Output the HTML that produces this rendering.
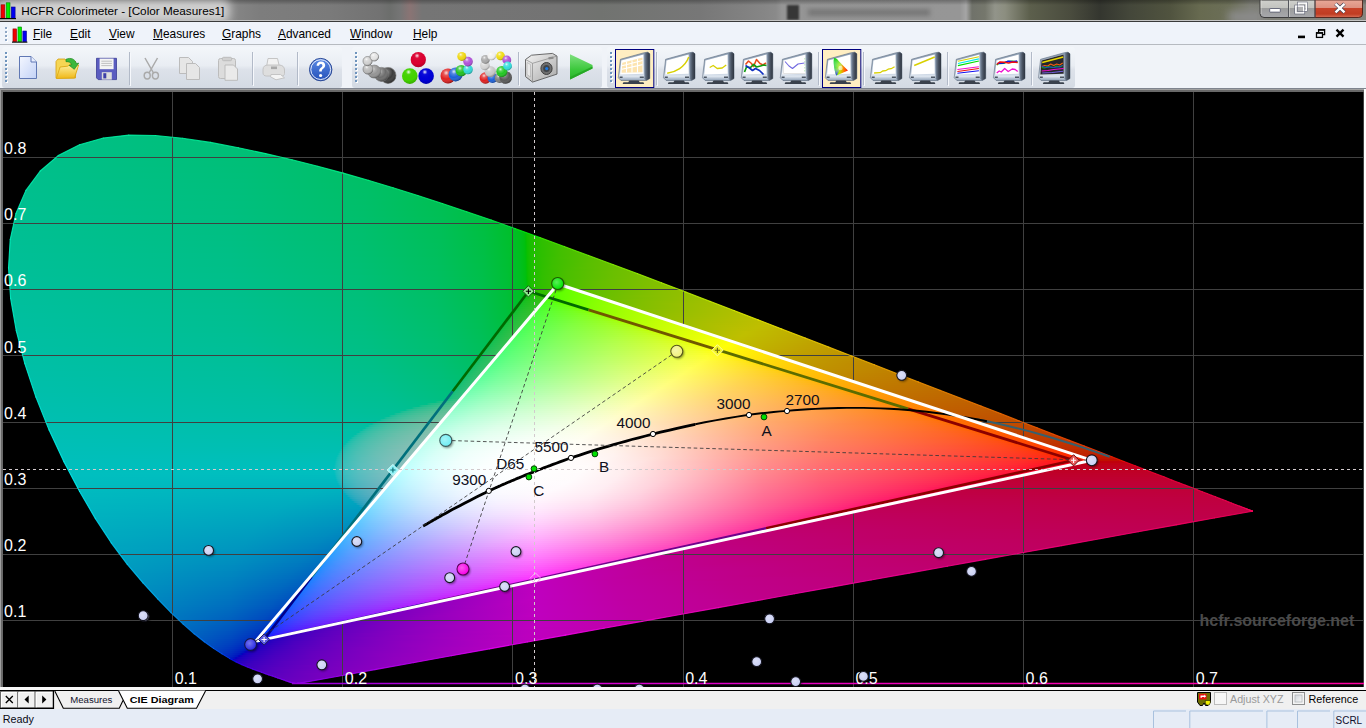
<!DOCTYPE html>
<html><head><meta charset="utf-8"><title>HCFR Colorimeter - [Color Measures1]</title>
<style>
html,body{margin:0;padding:0}
body{width:1366px;height:728px;overflow:hidden;position:relative;background:#f0f0f0;font-family:"Liberation Sans",sans-serif;font-size:12px;color:#000}
div,span,i,b,svg{position:absolute;display:block}
#title{left:0;top:0;width:1366px;height:20px;overflow:hidden;background:linear-gradient(90deg,#8c8c8c 0,#888 225px,#7d7d7d 260px,#7a7a7a 330px,#727272 380px,#6c6e6c 390px,#757575 400px,#8a7474 410px,#757575 422px,#737373 560px,#717370 600px,#777 700px,#868686 765px,#8a8a8a 776px,#959595 782px,#969696 960px,#a5a5a5 966px,#70726a 972px,#75776c 985px,#92948a 995px,#8c8e80 1005px,#5c5f4c 1030px,#4a4c3e 1070px,#34362f 1100px,#44473a 1130px,#50533f 1170px,#676a50 1200px,#6c6f58 1230px,#7c7d74 1250px,#85857f 1366px)}
#title .sh{left:0;top:0;width:1366px;height:20px;background:linear-gradient(180deg,rgba(0,0,0,.28) 0,rgba(0,0,0,.12) 3px,rgba(0,0,0,0) 5px,rgba(0,0,0,0) 100%)}
#title .gl{left:6px;top:9px;width:214px;height:4px;background:rgba(255,255,255,.6);box-shadow:0 0 10px 10px rgba(255,255,255,.6);border-radius:4px}
#title .fv{left:787px;top:5px;width:12px;height:15px;background:#363636;filter:blur(1.2px)}
#title .bt{left:808px;top:9px;width:122px;height:7px;background:#787878;filter:blur(2px)}
#title .gb{left:1228px;top:11px;width:36px;height:12px;background:#8c8c8c;filter:blur(4px)}
#tline{left:0;top:20px;width:1366px;height:1px;background:#c4c4c4}
#tline2{left:0;top:21px;width:1366px;height:1px;background:#3a3a3a}
#ttext{left:21.3px;top:4.2px;font-size:11.75px;white-space:nowrap;color:#000}
#menu{left:0;top:22px;width:1366px;height:22px;background:#eff3fa}
#menu span{top:5.2px;font-size:11.9px;white-space:nowrap}
#menu u{text-decoration:underline}
#mline{left:0;top:44px;width:1366px;height:1px;background:#b6bac0}
#tbbg{left:0;top:45px;width:1366px;height:44px;background:#f0f3f8}
.band{top:47px;height:41px;border-radius:3px;background:linear-gradient(180deg,#f3f6fa 0,#e9edf3 45%,#dde2ea 55%,#d4dae3 100%)}
#b1{left:1.5px;width:340.5px}
#b2{left:351.5px;width:250.3px}
#b3{left:607.3px;width:468.2px}
#sep88{left:0;top:88px;width:1366px;height:1px;background:#7f848e}
#mdi{left:0;top:89px;width:1366px;height:599px;background:linear-gradient(90deg,#a0a0a0 0,#a0a0a0 1364px,#fff 1364px)}
#mdi2{left:1px;top:90px;width:1363px;height:597px;background:#696969}
#chart{left:3px;top:92px;width:1361px;height:595px;background:#000;overflow:hidden}
.layer{left:-1px;top:-1px;width:1362px;height:596px}
.layer i{height:2px}
#dark{clip-path:polygon(296.6px 592.4px,296.5px 592.4px,296.5px 592.3px,296.4px 592.4px,296.2px 592.4px,296.1px 592.4px,295.9px 592.4px,295.8px 592.4px,295.6px 592.4px,295.4px 592.4px,295.3px 592.5px,295.1px 592.5px,294.9px 592.5px,294.6px 592.5px,294.3px 592.5px,294px 592.5px,293.7px 592.5px,293.3px 592.5px,293px 592.4px,292.6px 592.4px,292px 592.3px,291.3px 592.1px,290.5px 591.9px,289.7px 591.7px,288.8px 591.4px,287.7px 591.1px,286.5px 590.7px,285.1px 590.2px,283.6px 589.7px,281.9px 589.1px,280.1px 588.5px,278.1px 587.7px,275.7px 587px,273.1px 586.1px,270.2px 585px,266.9px 583.9px,263.3px 582.7px,259.4px 581.3px,255.1px 579.8px,250.4px 578px,245.3px 576px,239.9px 573.7px,234.1px 570.9px,227.5px 567.4px,220px 562.9px,211.5px 557.4px,202.3px 550.8px,192.2px 542.8px,181.2px 533.1px,169px 521.6px,155.7px 507.9px,141px 491.9px,125.3px 473.3px,109.2px 451.8px,93.4px 427.6px,77.6px 400.5px,61.9px 370.8px,47.1px 339.1px,33.9px 306.1px,22.8px 272.7px,14.2px 239.5px,8.6px 207.3px,6.5px 176.9px,8.2px 148.6px,13.9px 122.5px,23.9px 99.4px,38.2px 80px,56.2px 64.6px,77.5px 53.7px,101.3px 47px,126.8px 44.1px,153.4px 44.5px,180.7px 47.2px,208.5px 51.4px,236.4px 56.7px,263.6px 62.6px,290px 68.8px,315.8px 75.3px,341.2px 82.1px,366.2px 89.3px,391.1px 96.7px,415.8px 104.5px,440.3px 112.5px,464.8px 120.7px,489.2px 129.1px,513.6px 137.7px,537.9px 146.5px,562.2px 155.4px,586.6px 164.4px,610.9px 173.5px,635.2px 182.6px,659.5px 191.8px,683.8px 201px,707.9px 210.3px,732px 219.5px,756px 228.7px,779.8px 237.9px,803.3px 247px,826.7px 256.1px,849.7px 265px,872.4px 273.8px,894.7px 282.4px,916.6px 290.9px,938px 299.2px,958.8px 307.2px,979px 315px,998.6px 322.6px,1017.3px 329.9px,1035px 336.8px,1051.6px 343.2px,1067.3px 349.3px,1082.4px 355.1px,1096.7px 360.6px,1109.9px 365.7px,1122px 370.4px,1133.2px 374.7px,1143.6px 378.7px,1153.1px 382.4px,1161.9px 385.8px,1169.8px 388.9px,1177px 391.7px,1183.7px 394.2px,1189.7px 396.6px,1195.2px 398.7px,1200.3px 400.7px,1205px 402.5px,1209.4px 404.2px,1213.5px 405.8px,1217.2px 407.2px,1220.7px 408.6px,1223.9px 409.8px,1226.8px 411px,1229.5px 412px,1231.8px 412.9px,1233.9px 413.7px,1235.7px 414.4px,1237.4px 415.1px,1238.9px 415.6px,1240.3px 416.2px,1241.5px 416.6px,1242.5px 417px,1243.4px 417.4px,1244.1px 417.6px,1244.7px 417.9px,1245.4px 418.1px,1245.9px 418.4px,1246.5px 418.6px,1246.9px 418.8px,1247.4px 418.9px,1247.9px 419.1px,1248.4px 419.3px,1248.8px 419.5px,1249.2px 419.7px,1249.6px 419.8px,1249.8px 419.9px,1250px 420px,1250.2px 420px,1250.3px 420.1px,1250.4px 420.1px,1250.5px 420.1px,1250.5px 420.2px)}
#bright{clip-path:polygon(1090px 369.3px,556px 193px,253.5px 550.4px)}
#tabs{left:0;top:687px;width:1366px;height:22px;background:#f0f0f0}
#status{left:0;top:709px;width:1366px;height:19px;background:#e9eef7}
</style></head><body>
<div id="title"><div class="sh"></div><div class="gl"></div><div class="fv"></div><div class="bt"></div><div class="gb"></div><span id="ttext">HCFR Colorimeter - [Color Measures1]</span></div>
<div id="tline"></div><div id="tline2"></div>
<div id="menu">
<span style="left:33px"><u>F</u>ile</span><span style="left:70px"><u>E</u>dit</span><span style="left:109px"><u>V</u>iew</span><span style="left:153px"><u>M</u>easures</span><span style="left:222px"><u>G</u>raphs</span><span style="left:278px"><u>A</u>dvanced</span><span style="left:350px"><u>W</u>indow</span><span style="left:413px"><u>H</u>elp</span>
</div>
<div id="mline"></div>
<div id="tbbg"></div>
<div class="band" id="b1"></div><div class="band" id="b2"></div><div class="band" id="b3"></div>
<svg style="left:0;top:0" width="1366" height="92" viewBox="0 0 1366 92">
<defs>
<linearGradient id="mg" x1="0" y1="0" x2="0" y2="1"><stop offset="0" stop-color="#8a9bb0"/><stop offset=".7" stop-color="#b9c7d8"/><stop offset=".85" stop-color="#dfe7f0"/><stop offset="1" stop-color="#8fa0b6"/></linearGradient>
<linearGradient id="ms" x1="0" y1="0" x2="1" y2="0"><stop offset="0" stop-color="#7d8da2"/><stop offset=".5" stop-color="#4a5463"/><stop offset="1" stop-color="#2e3540"/></linearGradient>
<radialGradient id="sp" cx="38%" cy="30%" r="70%"><stop offset="0" stop-color="#fff" stop-opacity=".85"/><stop offset=".25" stop-color="#fff" stop-opacity=".25"/><stop offset=".6" stop-color="#fff" stop-opacity="0"/><stop offset="1" stop-color="#000" stop-opacity=".3"/></radialGradient>
<radialGradient id="sp2" cx="42%" cy="24%" r="75%"><stop offset="0" stop-color="#fff" stop-opacity=".95"/><stop offset=".1" stop-color="#fff" stop-opacity=".5"/><stop offset=".22" stop-color="#fff" stop-opacity=".05"/><stop offset=".7" stop-color="#000" stop-opacity="0"/><stop offset="1" stop-color="#000" stop-opacity=".18"/></radialGradient>
<linearGradient id="doc" x1="0" y1="0" x2="1" y2="1"><stop offset="0" stop-color="#f4f7ff"/><stop offset="1" stop-color="#c3d2f6"/></linearGradient>
<linearGradient id="fold" x1="0" y1="0" x2="0" y2="1"><stop offset="0" stop-color="#fdf0a0"/><stop offset="1" stop-color="#f0b818"/></linearGradient>
<linearGradient id="hb" x1="0" y1="0" x2="0" y2="1"><stop offset="0" stop-color="#5a8ae6"/><stop offset="1" stop-color="#2450b8"/></linearGradient>
<linearGradient id="pl" x1="0" y1="0" x2="0" y2="1"><stop offset="0" stop-color="#7fe07f"/><stop offset=".6" stop-color="#3cc83c"/><stop offset="1" stop-color="#28b428"/></linearGradient>
<linearGradient id="cam" x1="0" y1="0" x2="1" y2="1"><stop offset="0" stop-color="#f4f4f4"/><stop offset="1" stop-color="#a8a8a8"/></linearGradient>
<symbol id="mon" viewBox="0 0 32 32" overflow="visible">
<path d="M2.4 7.3L26.2.7l3.6-.5 2 1.6v24.8l-3.4 1.9H3L.3 25.8z" fill="url(#mg)" stroke="#5d6b7e" stroke-width=".6"/>
<path d="M26.3.9l3.5-.7 2 1.6v24.8l-3.4 1.9-2.1-1.6z" fill="url(#ms)"/>
<path d="M3.3 8.6L25.5 2.6v19.2L2.1 22.4z" fill="#fff"/>
<path d="M1.6 24.4h3v1.5h-3zM21.8 24.4h4v1.5h-4z" fill="#4c5663"/>
<path d="M11.4 28.4h9.2l1.2 1.9h3.6l.8 1.6H4.6l.8-1.6h4.8z" fill="#3a414c"/>
</symbol>
</defs>
<rect x="6" y="53" width="2" height="2" fill="#fff"/><rect x="5" y="52" width="2" height="2" fill="#6f94bd"/>
<rect x="6" y="57" width="2" height="2" fill="#fff"/><rect x="5" y="56" width="2" height="2" fill="#6f94bd"/>
<rect x="6" y="61" width="2" height="2" fill="#fff"/><rect x="5" y="60" width="2" height="2" fill="#6f94bd"/>
<rect x="6" y="65" width="2" height="2" fill="#fff"/><rect x="5" y="64" width="2" height="2" fill="#6f94bd"/>
<rect x="6" y="69" width="2" height="2" fill="#fff"/><rect x="5" y="68" width="2" height="2" fill="#6f94bd"/>
<rect x="6" y="73" width="2" height="2" fill="#fff"/><rect x="5" y="72" width="2" height="2" fill="#6f94bd"/>
<rect x="6" y="77" width="2" height="2" fill="#fff"/><rect x="5" y="76" width="2" height="2" fill="#6f94bd"/>
<rect x="6" y="81" width="2" height="2" fill="#fff"/><rect x="5" y="80" width="2" height="2" fill="#6f94bd"/>
<rect x="356" y="53" width="2" height="2" fill="#fff"/><rect x="355" y="52" width="2" height="2" fill="#6f94bd"/>
<rect x="356" y="57" width="2" height="2" fill="#fff"/><rect x="355" y="56" width="2" height="2" fill="#6f94bd"/>
<rect x="356" y="61" width="2" height="2" fill="#fff"/><rect x="355" y="60" width="2" height="2" fill="#6f94bd"/>
<rect x="356" y="65" width="2" height="2" fill="#fff"/><rect x="355" y="64" width="2" height="2" fill="#6f94bd"/>
<rect x="356" y="69" width="2" height="2" fill="#fff"/><rect x="355" y="68" width="2" height="2" fill="#6f94bd"/>
<rect x="356" y="73" width="2" height="2" fill="#fff"/><rect x="355" y="72" width="2" height="2" fill="#6f94bd"/>
<rect x="356" y="77" width="2" height="2" fill="#fff"/><rect x="355" y="76" width="2" height="2" fill="#6f94bd"/>
<rect x="356" y="81" width="2" height="2" fill="#fff"/><rect x="355" y="80" width="2" height="2" fill="#6f94bd"/>
<rect x="611" y="53" width="2" height="2" fill="#fff"/><rect x="610" y="52" width="2" height="2" fill="#6f94bd"/>
<rect x="611" y="57" width="2" height="2" fill="#fff"/><rect x="610" y="56" width="2" height="2" fill="#6f94bd"/>
<rect x="611" y="61" width="2" height="2" fill="#fff"/><rect x="610" y="60" width="2" height="2" fill="#6f94bd"/>
<rect x="611" y="65" width="2" height="2" fill="#fff"/><rect x="610" y="64" width="2" height="2" fill="#6f94bd"/>
<rect x="611" y="69" width="2" height="2" fill="#fff"/><rect x="610" y="68" width="2" height="2" fill="#6f94bd"/>
<rect x="611" y="73" width="2" height="2" fill="#fff"/><rect x="610" y="72" width="2" height="2" fill="#6f94bd"/>
<rect x="611" y="77" width="2" height="2" fill="#fff"/><rect x="610" y="76" width="2" height="2" fill="#6f94bd"/>
<rect x="611" y="81" width="2" height="2" fill="#fff"/><rect x="610" y="80" width="2" height="2" fill="#6f94bd"/>
<path d="M129.5 52V85" stroke="#b2bac8" stroke-width="1"/><path d="M130.5 53V86" stroke="#f6f8fc" stroke-width="1"/>
<path d="M252.5 52V85" stroke="#b2bac8" stroke-width="1"/><path d="M253.5 53V86" stroke="#f6f8fc" stroke-width="1"/>
<path d="M297.5 52V85" stroke="#b2bac8" stroke-width="1"/><path d="M298.5 53V86" stroke="#f6f8fc" stroke-width="1"/>
<path d="M518.5 52V85" stroke="#b2bac8" stroke-width="1"/><path d="M519.5 53V86" stroke="#f6f8fc" stroke-width="1"/>
<path d="M656.5 52V85" stroke="#b2bac8" stroke-width="1"/><path d="M657.5 53V86" stroke="#f6f8fc" stroke-width="1"/>
<path d="M818.5 52V85" stroke="#b2bac8" stroke-width="1"/><path d="M819.5 53V86" stroke="#f6f8fc" stroke-width="1"/>
<path d="M863.5 52V85" stroke="#b2bac8" stroke-width="1"/><path d="M864.5 53V86" stroke="#f6f8fc" stroke-width="1"/>
<path d="M947.5 52V85" stroke="#b2bac8" stroke-width="1"/><path d="M948.5 53V86" stroke="#f6f8fc" stroke-width="1"/>
<path d="M1031.5 52V85" stroke="#b2bac8" stroke-width="1"/><path d="M1032.5 53V86" stroke="#f6f8fc" stroke-width="1"/>
<path d="M19.5 56.5h11.5l5.5 5.5v16.5h-17z" fill="url(#doc)" stroke="#6078b4" stroke-width="1"/><path d="M31 56.5v5.5h5.5" fill="#e8eeff" stroke="#6078b4" stroke-width="1"/>
<path d="M56 61.5l2-2.5h7l2 2.5h8.5v16.5H56z" fill="#f6d654" stroke="#d6a010" stroke-width=".8"/>
<path d="M56.3 78.5l3.8-11.5 7.5-.8 2.4-1.6 8.6.4-4.1 13z" fill="url(#fold)" stroke="#dca814" stroke-width=".9"/>
<path d="M66 59.3c5-2.2 9.2 0 10.4 4.3l2.3-.5-4.4 6.2-5.2-4 2.6-.6c-.8-2.4-3-3.3-5.7-3z" fill="#3cb83c" stroke="#1f8a1f" stroke-width=".7"/>
<path d="M96.5 58.3h20v21.3h-18.3l-1.7-1.7z" fill="#5a5cc0" stroke="#3a3c96" stroke-width=".8"/>
<rect x="99.6" y="58.6" width="14" height="10.6" fill="#f4f4f4"/><path d="M101.3 61.2h10.6M101.3 63.4h10.6M101.3 65.6h10.6" stroke="#b4b4b4" stroke-width=".8"/>
<rect x="101.8" y="72.2" width="10" height="7.4" fill="#dcdcdc"/><rect x="103.3" y="73.2" width="3" height="5.2" fill="#3c3ea8"/>
<g fill="none" stroke="#aaa" stroke-width="1.5"><path d="M145 58l8.5 15M157.5 58l-8.5 15"/><ellipse cx="147.2" cy="75.6" rx="3" ry="3.4"/><ellipse cx="155.4" cy="75.6" rx="3" ry="3.4"/></g>
<g fill="#e6e6e6" stroke="#bcbcbc" stroke-width="1"><path d="M179.5 57.5h9l4 4v12h-13z"/><path d="M186.5 63.5h9l4 4v12h-13z"/></g>
<g stroke="#bcbcbc" stroke-width="1"><rect x="218.5" y="58.5" width="17" height="20" rx="2" fill="#dcdcdc"/><rect x="222.5" y="57.3" width="9" height="3.4" rx="1" fill="#d0d0d0"/><path d="M225 65h8.5l4 4v11.3h-12.5z" fill="#eaeaea"/></g>
<g stroke="#c0c0c0" stroke-width=".9"><path d="M266.5 67l1.5-8.5h9.5l2 8.5z" fill="#f2f2f2"/><path d="M263 69.5c0-3 2-4.5 5-4.5h11c3.5 0 5.5 2 5.5 5v3.500c0 1.5-1 2.5-3 2.500h-15c-2 0-3.5-1-3.5-3z" fill="#dedede"/><path d="M271 74.500h9.500l4 3.3-8.5 2-5.5-3z" fill="#f4f4f4"/><rect x="271" y="66.5" width="6" height="2.6" fill="#a8a8a8" stroke="none"/></g>
<circle cx="320.7" cy="69.6" r="11.2" fill="url(#hb)" stroke="#2c4a96" stroke-width="1"/><circle cx="320.7" cy="69.6" r="9.9" fill="none" stroke="#e8eefc" stroke-width="1"/>
<path d="M316.6 65.8c0-2.6 1.8-4.2 4.3-4.2 2.6 0 4.3 1.5 4.3 3.7 0 2-1.2 2.8-2.3 3.7-.900.7-1.1 1.2-1.1 2.600h-2.600c0-2 .4-2.9 1.6-3.9 1-.8 1.6-1.3 1.6-2.3 0-.9-.6-1.5-1.6-1.500s-1.7.7-1.7 1.900z" fill="#fff"/><circle cx="320.6" cy="75.5" r="1.6" fill="#fff"/>
<circle cx="388" cy="75.4" r="8" fill="#3c3c3c" stroke="#7c7c7c" stroke-width=".7"/><circle cx="388" cy="75.4" r="8" fill="url(#sp)"/>
<circle cx="381.4" cy="74.4" r="7" fill="#6c6c6c" stroke="#7c7c7c" stroke-width=".7"/><circle cx="381.4" cy="74.4" r="7" fill="url(#sp)"/>
<circle cx="374.3" cy="71.6" r="6.5" fill="#949494" stroke="#7c7c7c" stroke-width=".7"/><circle cx="374.3" cy="71.6" r="6.5" fill="url(#sp)"/>
<circle cx="368" cy="69.2" r="5" fill="#b8b8b8" stroke="#7c7c7c" stroke-width=".7"/><circle cx="368" cy="69.2" r="5" fill="url(#sp)"/>
<circle cx="367.6" cy="61.1" r="4.6" fill="#d0d0d0" stroke="#7c7c7c" stroke-width=".7"/><circle cx="367.6" cy="61.1" r="4.6" fill="url(#sp)"/>
<circle cx="374.3" cy="56.8" r="4.3" fill="#e4e4e4" stroke="#7c7c7c" stroke-width=".7"/><circle cx="374.3" cy="56.8" r="4.3" fill="url(#sp)"/>
<circle cx="418.3" cy="59.7" r="7.6" fill="#dc0030"/><circle cx="418.3" cy="59.7" r="7.6" fill="url(#sp2)"/>
<circle cx="409.8" cy="76.1" r="7.8" fill="#44d400"/><circle cx="409.8" cy="76.1" r="7.8" fill="url(#sp2)"/>
<circle cx="426.1" cy="76.1" r="7.8" fill="#0000d8"/><circle cx="426.1" cy="76.1" r="7.8" fill="url(#sp2)"/>
<circle cx="448" cy="75.9" r="7.5" fill="#e02020"/><circle cx="448" cy="75.9" r="7.5" fill="url(#sp)"/>
<circle cx="455.6" cy="74.4" r="7" fill="#1c60d8"/><circle cx="455.6" cy="74.4" r="7" fill="url(#sp)"/>
<circle cx="461.3" cy="70.6" r="5.7" fill="#20c020"/><circle cx="461.3" cy="70.6" r="5.7" fill="url(#sp)"/>
<circle cx="468" cy="69.5" r="4.8" fill="#30d8d8"/><circle cx="468" cy="69.5" r="4.8" fill="url(#sp)"/>
<circle cx="468" cy="61.6" r="4.8" fill="#b050d8"/><circle cx="468" cy="61.6" r="4.8" fill="url(#sp)"/>
<circle cx="461.8" cy="56.4" r="4.5" fill="#f0d810"/><circle cx="461.8" cy="56.4" r="4.5" fill="url(#sp)"/>
<circle cx="485.4" cy="78" r="5.8" fill="#e02020"/><circle cx="485.4" cy="78" r="5.8" fill="url(#sp)"/>
<circle cx="492.5" cy="78" r="5" fill="#1c60d8"/><circle cx="492.5" cy="78" r="5" fill="url(#sp)"/>
<circle cx="499.6" cy="78" r="5" fill="#808080"/><circle cx="499.6" cy="78" r="5" fill="url(#sp)"/>
<circle cx="505.7" cy="77.5" r="6.3" fill="#585858"/><circle cx="505.7" cy="77.5" r="6.3" fill="url(#sp)"/>
<circle cx="490.3" cy="71.5" r="5.5" fill="#c8c8c8"/><circle cx="490.3" cy="71.5" r="5.5" fill="url(#sp)"/>
<circle cx="501.8" cy="71.5" r="5.5" fill="#20c820"/><circle cx="501.8" cy="71.5" r="5.5" fill="url(#sp)"/>
<circle cx="484.8" cy="65.4" r="4.8" fill="#d4d4d4"/><circle cx="484.8" cy="65.4" r="4.8" fill="url(#sp)"/>
<circle cx="485.4" cy="59.4" r="4.4" fill="#a8a8a8"/><circle cx="485.4" cy="59.4" r="4.4" fill="url(#sp)"/>
<circle cx="491.7" cy="55.9" r="4.3" fill="#f0f0f0"/><circle cx="491.7" cy="55.9" r="4.3" fill="url(#sp)"/>
<circle cx="500.5" cy="55.9" r="4.3" fill="#f0dc10"/><circle cx="500.5" cy="55.9" r="4.3" fill="url(#sp)"/>
<circle cx="506.8" cy="59.9" r="4.4" fill="#b050d8"/><circle cx="506.8" cy="59.9" r="4.4" fill="url(#sp)"/>
<circle cx="507.6" cy="66" r="4.4" fill="#30dcdc"/><circle cx="507.6" cy="66" r="4.4" fill="url(#sp)"/>
<path d="M525.5 59.500l6-4.3 21-1.8 4.5 2.700v18l-24.5 8-7-5.500z" fill="url(#cam)" stroke="#5a5a5a" stroke-width=".9"/>
<path d="M525.5 59.500l7 3.8 24.5-7.200M532.5 63.300v18.8" fill="none" stroke="#8a8a8a" stroke-width=".7"/>
<path d="M527 62.500l3.5 2v12.500l-3.5-2.500z" fill="#e8e8e8" stroke="#a0a0a0" stroke-width=".5"/>
<ellipse cx="546.5" cy="68.5" rx="5.6" ry="6" fill="#6e6e6e" stroke="#3c3c3c" stroke-width="1"/><ellipse cx="546.5" cy="68.5" rx="3.3" ry="3.6" fill="#404448"/><circle cx="546.7" cy="68.6" r="1.6" fill="#1c78e0"/>
<rect x="548.5" y="56.8" width="5" height="2.3" fill="#8c8c8c" transform="rotate(-8 551 58)"/>
<path d="M570 54.300l22.5 10.700v3.600l-22.5 11z" fill="url(#pl)"/><path d="M570 77l22.5-10.600v2.200l-22.5 11z" fill="#26a826"/>
<rect x="615.5" y="49.5" width="38.3" height="38" fill="#ffeec2" stroke="#000080" stroke-width="1"/>
<rect x="822.5" y="49.5" width="38.3" height="38" fill="#ffeec2" stroke="#000080" stroke-width="1"/>
<use href="#mon" x="618" y="52" width="32" height="32"/>
<use href="#mon" x="663.2" y="52" width="32" height="32"/>
<use href="#mon" x="702.2" y="52" width="32" height="32"/>
<use href="#mon" x="741" y="52" width="32" height="32"/>
<use href="#mon" x="780" y="52" width="32" height="32"/>
<use href="#mon" x="825" y="52" width="32" height="32"/>
<use href="#mon" x="870.1" y="52" width="32" height="32"/>
<use href="#mon" x="909.2" y="52" width="32" height="32"/>
<use href="#mon" x="953.9" y="52" width="32" height="32"/>
<use href="#mon" x="993.2" y="52" width="32" height="32"/>
<use href="#mon" x="1038.2" y="52" width="32" height="32"/>
<g transform="translate(618 52)" fill="none" stroke-linejoin="round"><path d="M4.3 10.800L24.5 5.400v14.800L3.6 20.800z" fill="#fde4b0" stroke="none"/><path d="M4 13.700l20.5-5.200M3.9 17.200l20.6-4.600M8.5 9.600v11M14 8.200v12.400M19.5 6.700v13.7" stroke="#fff" stroke-width="1.1"/></g>
<g transform="translate(663.2 52)" fill="none" stroke-linejoin="round"><path d="M4 21.300c8-1.2 18-6 21.5-16.2" stroke="#d8d000" stroke-width="1.4"/></g>
<g transform="translate(702.2 52)" fill="none" stroke-linejoin="round"><path d="M7.5 15.500l3.5-2 4 3 5-.5 4-3" stroke="#d8d000" stroke-width="1.3"/></g>
<g transform="translate(741 52)" fill="none" stroke-linejoin="round"><path d="M4.5 12.500l3-3.5 3 2.5 2 3 3-7 3.5 4 3 1.5 3-2" stroke="#e84c1c" stroke-width="1.6"/><path d="M3.5 20l2-5 4 .5 3-3 3 2.5 4-1 3-1 3 .5" stroke="#109c10" stroke-width="1.7"/><path d="M4.5 13.500l4 2.5 3 2.5 3-2 4 2 4 4" stroke="#1030c0" stroke-width="1.7"/></g>
<g transform="translate(780 52)" fill="none" stroke-linejoin="round"><path d="M3.5 9v12.500h22" stroke="#dcdcdc" stroke-width=".8"/><path d="M24.8 6v15" stroke="#a8e0a8" stroke-width=".8" stroke-dasharray="1.5 1.5"/><path d="M5 9.500l4 4.5 3.5 2.5 5.5-4.5 6.5-1" stroke="#7068e0" stroke-width="1.1"/></g>
<g transform="translate(825 52)" fill="none" stroke-linejoin="round"><defs><linearGradient id="c1" x1="0" y1="0" x2="1" y2="0"><stop offset="0" stop-color="#00c830"/><stop offset=".4" stop-color="#c0f000"/><stop offset=".7" stop-color="#ff8000"/><stop offset="1" stop-color="#ff1010"/></linearGradient><linearGradient id="c2" x1="0" y1="0" x2="0" y2="1"><stop offset="0" stop-color="#00d000" stop-opacity=".9"/><stop offset=".55" stop-color="#fff" stop-opacity=".2"/><stop offset="1" stop-color="#1010ff"/></linearGradient></defs><path d="M9 6.500c1.5-.8 3 .4 4.5 2.500l9.5 9.5-11.5 5c-1.5-2-3.5-12-2.5-17z" fill="url(#c1)" stroke="none"/><path d="M9 6.500c1.5-.8 3 .4 4.5 2.500l4 4-6 10.500c-1.5-2-3.5-12-2.5-17z" fill="url(#c2)" stroke="none"/><circle cx="15.5" cy="16" r="2.2" fill="#fff" opacity=".6" stroke="none"/></g>
<g transform="translate(870.1 52)" fill="none" stroke-linejoin="round"><path d="M4 21l6-.3 2.5-1.7 3-.3 2.5-1.5 3-.5 3.5-2" stroke="#d8d000" stroke-width="1.3"/></g>
<g transform="translate(909.2 52)" fill="none" stroke-linejoin="round"><path d="M5 13.500l20.5-8.5" stroke="#d8d000" stroke-width="1.5"/></g>
<g transform="translate(953.9 52)" fill="none" stroke-linejoin="round"><g stroke-width="1.1"><path d="M4 9.300l21-4.6" stroke="#d8d000"/><path d="M4 11.500l21-4.6" stroke="#00e8e8"/><path d="M4 13.600l21-4.6" stroke="#00e000"/><path d="M3.5 17.500l21.5-2.8" stroke="#f010d0"/><path d="M3.5 19.500l21.5-3" stroke="#f01010"/><path d="M3.5 21.300l21.5-2.5" stroke="#1010f0"/></g></g>
<g transform="translate(993.2 52)" fill="none" stroke-linejoin="round"><path d="M3.5 13l2-1.5 5-.3 4-1.7 5-.3 5 .8" stroke="#00d000" stroke-width="1.5"/><path d="M4 11.500l6-.3 5-2 5 .5 4-.7" stroke="#1010f0" stroke-width="1.3"/><path d="M3.5 12.500l3-2.5 5 .3 4 .7 4-1 5 .5" stroke="#f01010" stroke-width="1.4"/><path d="M3.5 21l2.5-2 2 1 3.5-3.5 3.5 3 4-2.5 3 .5 2.5 2" stroke="#f010d0" stroke-width="1.3"/></g>
<g transform="translate(1038.2 52)" fill="none" stroke-linejoin="round"><path d="M3.3 8.600L25.5 2.600v19.200L2.1 22.400z" fill="#26262c" stroke="none"/><path d="M4 10.500l21-5.5" stroke="#e8d800" stroke-width="1.4"/><path d="M3.5 14.500l3-1 3 .5 3-2 3 1.5 3-1.5 3 1 3-2" stroke="#f06010" stroke-width="1.1"/><path d="M3.5 15.500l3 .5 3-1.5 3 .5 3 .5 3-1.5 3 1 3-1.5" stroke="#10b010" stroke-width="1.1"/><path d="M3.5 14l4 1.5 4-.5 4 .5 5-.5 4-1.5" stroke="#2040e0" stroke-width=".9"/><path d="M3.5 19l6-.5 6-1 10-1" stroke="#f010d0" stroke-width="1.2"/><path d="M4 21l10-.5 11-1.3" stroke="#7060e0" stroke-width="1.1"/></g>
<g transform="translate(0 0) scale(1)"><rect x="1" y="4.8" width="3.8" height="13.4" fill="#f00000" stroke="#900000" stroke-width=".6"/><rect x="6.2" y="2.8" width="3.8" height="15.4" fill="#00f000" stroke="#008000" stroke-width=".6"/><rect x="11.3" y="7" width="3.8" height="11.2" fill="#0000f0" stroke="#000090" stroke-width=".6"/><path d="M0 18.600h16" stroke="#000" stroke-width="1.1"/></g>
<g transform="translate(12 24.3) scale(0.96)"><rect x="1" y="4.8" width="3.8" height="13.4" fill="#f00000" stroke="#900000" stroke-width=".6"/><rect x="6.2" y="2.8" width="3.8" height="15.4" fill="#00f000" stroke="#008000" stroke-width=".6"/><rect x="11.3" y="7" width="3.8" height="11.2" fill="#0000f0" stroke="#000090" stroke-width=".6"/><path d="M0 18.600h16" stroke="#000" stroke-width="1.1"/></g>
<rect x="6" y="28" width="2" height="2" fill="#fff"/><rect x="5" y="27" width="2" height="2" fill="#8ea6c4"/>
<rect x="6" y="32" width="2" height="2" fill="#fff"/><rect x="5" y="31" width="2" height="2" fill="#8ea6c4"/>
<rect x="6" y="36" width="2" height="2" fill="#fff"/><rect x="5" y="35" width="2" height="2" fill="#8ea6c4"/>
<rect x="6" y="40" width="2" height="2" fill="#fff"/><rect x="5" y="39" width="2" height="2" fill="#8ea6c4"/>
<defs><linearGradient id="cb" x1="0" y1="0" x2="0" y2="1"><stop offset="0" stop-color="#cfd0cc"/><stop offset=".47" stop-color="#c2c3bf"/><stop offset=".48" stop-color="#9b9c9c"/><stop offset="1" stop-color="#a7a8ac"/></linearGradient>
<linearGradient id="cr" x1="0" y1="0" x2="0" y2="1"><stop offset="0" stop-color="#e8a898"/><stop offset=".47" stop-color="#dc9080"/><stop offset=".48" stop-color="#c8432a"/><stop offset=".8" stop-color="#c03c22"/><stop offset="1" stop-color="#d87058"/></linearGradient></defs>
<path d="M1260 0h102.500v13.500q0 4-4 4h-94.500q-4 0-4-4z" fill="url(#cb)" stroke="#3c3c3c" stroke-width="1"/>
<path d="M1315 0h47.500v13.500q0 4-4 4h-43.500z" fill="url(#cr)" stroke="#4a1c14" stroke-width=".8"/>
<path d="M1288.5 0v17.500M1315 0v17.5" stroke="#54565c" stroke-width="1"/><path d="M1289.5 0v17M1261.2 0v14" stroke="#e4e4e0" stroke-width=".7" opacity=".7"/>
<rect x="1269.7" y="8.5" width="10.6" height="3.6" rx=".5" fill="#fff" stroke="#50546a" stroke-width=".8"/>
<g fill="none" stroke="#fff" stroke-width="1.6"><rect x="1298.5" y="3" width="8" height="7.5"/><rect x="1295.8" y="6" width="8" height="7" fill="#b0b1b2"/></g><g fill="none" stroke="#50546a" stroke-width=".5"><rect x="1297.5" y="2" width="10" height="9.5"/><rect x="1294.8" y="5" width="10" height="9"/></g>
<path d="M1335.5 3.800l9 8.600M1344.5 3.800l-9 8.6" stroke="#3c3c50" stroke-width="3.6"/><path d="M1335.5 3.800l9 8.600M1344.5 3.800l-9 8.6" stroke="#fff" stroke-width="2.4"/>
<rect x="1298" y="35.6" width="7" height="2.6" fill="#000"/>
<g fill="none" stroke="#000" stroke-width="1.3"><path d="M1318.6 32.500v-2.800h6v5h-2.3" /><rect x="1316.5" y="32.8" width="6" height="4.6" fill="#eff3fa"/></g><path d="M1316 33h7M1318 29.900h7" stroke="#000" stroke-width="1.6"/>
<path d="M1336.5 29.600l7 7M1343.5 29.600l-7 7" stroke="#000" stroke-width="2.3"/>
</svg>
<div id="sep88"></div>
<div id="mdi"></div><div id="mdi2"></div>
<div id="chart">
<div class="layer" id="dark"><i style="top:42px;left:137px;width:6px;background:linear-gradient(90deg,#00bf80 -2px,#00bf7f 3px)"></i><i style="top:44px;left:111px;width:59px;background:linear-gradient(90deg,#00bf82 -2px,#00bf7d 56px)"></i><i style="top:46px;left:99px;width:85px;background:linear-gradient(90deg,#00bf83 -2px,#00bf7c 82px)"></i><i style="top:48px;left:87px;width:111px;background:linear-gradient(90deg,#00bf84 -2px,#00bf7b 108px)"></i><i style="top:50px;left:81px;width:131px;background:linear-gradient(90deg,#00bf85 -2px,#00bf79 128px)"></i><i style="top:52px;left:75px;width:151px;background:linear-gradient(90deg,#00bf86 -2px,#00bf78 148px)"></i><i style="top:54px;left:71px;width:164px;background:linear-gradient(90deg,#00bf86 -2px,#00bf77 161px)"></i><i style="top:56px;left:66px;width:179px;background:linear-gradient(90deg,#00bf87 -2px,#00bf76 176px)"></i><i style="top:58px;left:62px;width:192px;background:linear-gradient(90deg,#00bf87 -2px,#00bf75 189px)"></i><i style="top:60px;left:59px;width:204px;background:linear-gradient(90deg,#00bf88 -2px,#00bf74 201px)"></i><i style="top:62px;left:56px;width:215px;background:linear-gradient(90deg,#00bf88 -2px,#00bf75 203px,#00bf73 212px)"></i><i style="top:64px;left:53px;width:227px;background:linear-gradient(90deg,#00bf88 -2px,#00bf75 204px,#00bf72 224px)"></i><i style="top:66px;left:50px;width:239px;background:linear-gradient(90deg,#00bf89 -2px,#00bf76 205px,#00bf71 236px)"></i><i style="top:68px;left:47px;width:251px;background:linear-gradient(90deg,#00bf89 -2px,#00bf76 206px,#00bf70 248px)"></i><i style="top:70px;left:44px;width:262px;background:linear-gradient(90deg,#00bf8a -2px,#00bf77 207px,#00bf6f 259px)"></i><i style="top:72px;left:42px;width:270px;background:linear-gradient(90deg,#00bf8a -2px,#00bf77 208px,#00bf6e 267px)"></i><i style="top:74px;left:40px;width:279px;background:linear-gradient(90deg,#00bf8a -2px,#00bf77 209px,#00bf6d 276px)"></i><i style="top:76px;left:38px;width:290px;background:linear-gradient(90deg,#00bf8b -2px,#00bf78 210px,#00bf6c 287px)"></i><i style="top:78px;left:36px;width:299px;background:linear-gradient(90deg,#00bf8b -2px,#00bf78 210px,#00bf6b 296px)"></i><i style="top:80px;left:34px;width:308px;background:linear-gradient(90deg,#00bf8b -2px,#00bf78 211px,#00bf6a 305px)"></i><i style="top:82px;left:33px;width:316px;background:linear-gradient(90deg,#00bf8c -2px,#00bf79 212px,#00bf69 313px)"></i><i style="top:84px;left:31px;width:326px;background:linear-gradient(90deg,#00bf8c -2px,#00bf79 212px,#00bf68 323px)"></i><i style="top:86px;left:30px;width:333px;background:linear-gradient(90deg,#00bf8c -2px,#00bf79 213px,#00bf67 330px)"></i><i style="top:88px;left:28px;width:342px;background:linear-gradient(90deg,#00bf8d -2px,#00bf7a 214px,#00bf65 339px)"></i><i style="top:90px;left:27px;width:351px;background:linear-gradient(90deg,#00bf8d -2px,#00bf7a 214px,#00bf65 342px,#00bf64 348px)"></i><i style="top:92px;left:25px;width:360px;background:linear-gradient(90deg,#00bf8d -2px,#00bf7b 215px,#00bf66 343px,#00bf62 357px)"></i><i style="top:94px;left:24px;width:368px;background:linear-gradient(90deg,#00bf8d -2px,#00bf7b 215px,#00bf66 343px,#00bf61 365px)"></i><i style="top:96px;left:22px;width:376px;background:linear-gradient(90deg,#00bf8e -2px,#00bf7b 216px,#00bf66 345px,#00bf60 373px)"></i><i style="top:98px;left:21px;width:383px;background:linear-gradient(90deg,#00bf8e -2px,#00bf7c 216px,#00bf67 345px,#00bf5e 380px)"></i><i style="top:100px;left:20px;width:390px;background:linear-gradient(90deg,#00bf8e -2px,#00bf7c 217px,#00bf67 346px,#00bf5d 387px)"></i><i style="top:102px;left:19px;width:397px;background:linear-gradient(90deg,#00bf8f -2px,#00bf7c 217px,#00bf68 346px,#00bf5b 394px)"></i><i style="top:104px;left:18px;width:404px;background:linear-gradient(90deg,#00bf8f -2px,#00bf7d 218px,#00bf68 347px,#00bf5a 401px)"></i><i style="top:106px;left:17px;width:412px;background:linear-gradient(90deg,#00bf8f -2px,#00bf7d 218px,#00bf68 347px,#00bf58 409px)"></i><i style="top:108px;left:16px;width:419px;background:linear-gradient(90deg,#00bf8f -2px,#00bf7d 218px,#00bf69 348px,#00bf56 416px)"></i><i style="top:110px;left:16px;width:425px;background:linear-gradient(90deg,#00bf90 -2px,#00bf7e 218px,#00bf69 348px,#00bf54 422px)"></i><i style="top:112px;left:15px;width:432px;background:linear-gradient(90deg,#00bf90 -2px,#00bf7e 219px,#00bf69 349px,#00bf53 426px,#00bf52 429px)"></i><i style="top:114px;left:14px;width:439px;background:linear-gradient(90deg,#00bf90 -2px,#00bf7e 219px,#00bf6a 349px,#00bf53 427px,#00bf50 436px)"></i><i style="top:116px;left:13px;width:446px;background:linear-gradient(90deg,#00bf91 -2px,#00bf7e 220px,#00bf6a 350px,#00bf54 427px,#00bf4d 443px)"></i><i style="top:118px;left:12px;width:453px;background:linear-gradient(90deg,#00bf91 -2px,#00bf7f 220px,#00bf6a 350px,#00bf54 428px,#00bf4b 450px)"></i><i style="top:120px;left:11px;width:460px;background:linear-gradient(90deg,#00bf91 -2px,#00bf7f 220px,#00bf6b 350px,#00bf55 428px,#00bf48 457px)"></i><i style="top:122px;left:11px;width:467px;background:linear-gradient(90deg,#00bf91 -2px,#00bf7f 220px,#00bf6b 350px,#00bf55 428px,#00bf44 464px)"></i><i style="top:124px;left:10px;width:473px;background:linear-gradient(90deg,#00bf92 -2px,#00bf80 221px,#00bf6b 351px,#00bf55 429px,#00bf42 470px)"></i><i style="top:126px;left:10px;width:478px;background:linear-gradient(90deg,#00bf92 -2px,#00bf80 221px,#00bf6c 351px,#00bf56 429px,#00bf3f 474px,#00bf3f 475px)"></i><i style="top:128px;left:9px;width:484px;background:linear-gradient(90deg,#00bf92 -2px,#00bf80 221px,#00bf6c 352px,#00bf56 430px,#00bf40 475px,#00bf3b 481px)"></i><i style="top:130px;left:9px;width:490px;background:linear-gradient(90deg,#00bf92 -2px,#00bf81 221px,#00bf6c 351px,#00bf57 429px,#00bf40 474px,#00bf37 487px)"></i><i style="top:132px;left:8px;width:497px;background:linear-gradient(90deg,#00bf93 -2px,#00bf81 222px,#00bf6d 352px,#00bf57 430px,#00bf41 475px,#00bf32 494px)"></i><i style="top:134px;left:8px;width:503px;background:linear-gradient(90deg,#00bf93 -2px,#00bf81 222px,#00bf6d 352px,#00bf57 430px,#00bf41 475px,#00bf2c 499px,#00bf2b 500px)"></i><i style="top:136px;left:8px;width:509px;background:linear-gradient(90deg,#00bf93 -2px,#00bf82 222px,#00bf6d 352px,#00bf57 430px,#00bf41 475px,#00bf2d 499px,#00bf23 506px)"></i><i style="top:138px;left:7px;width:515px;background:linear-gradient(90deg,#00bf93 -2px,#00bf82 222px,#00bf6e 353px,#00bf58 431px,#00bf41 476px,#00bf2d 500px,#00bf1c 511px,#00bf1a 512px)"></i><i style="top:140px;left:7px;width:520px;background:linear-gradient(90deg,#00bf94 -2px,#00bf82 222px,#00bf6e 353px,#00bf58 431px,#00bf42 476px,#00bf2d 500px,#00bf1c 511px,#00bf10 515px,#00bf0b 516px,#07bf00 517px)"></i><i style="top:142px;left:7px;width:525px;background:linear-gradient(90deg,#00bf94 -2px,#00bf82 222px,#00bf6f 352px,#00bf59 430px,#00bf42 476px,#00bf2d 500px,#00bf1c 511px,#00bf11 515px,#00bf0c 516px,#06bf00 517px,#0ebf00 518px,#1bbf00 522px)"></i><i style="top:144px;left:6px;width:532px;background:linear-gradient(90deg,#00bf94 -2px,#00bf83 223px,#00bf6f 353px,#00bf59 431px,#00bf42 477px,#00bf2e 501px,#00bf1d 512px,#00bf11 516px,#00bf0c 517px,#05bf00 518px,#0ebf00 519px,#1bbf00 523px,#26bf00 529px)"></i><i style="top:146px;left:6px;width:538px;background:linear-gradient(90deg,#00bf94 -2px,#00bf83 223px,#00bf6f 353px,#00bf59 431px,#00bf43 477px,#00bf2e 501px,#00bf1d 512px,#00bf11 516px,#00bf0c 517px,#04bf00 518px,#0dbf00 519px,#1bbf00 523px,#2fbf00 535px)"></i><i style="top:148px;left:6px;width:545px;background:linear-gradient(90deg,#00bf95 -2px,#00bf83 223px,#00bf6f 353px,#00bf5a 431px,#00bf43 476px,#00bf2e 501px,#00bf1d 512px,#00bf12 516px,#00bf0d 517px,#03bf00 518px,#0dbf00 519px,#1bbf00 523px,#2ebf00 534px,#37bf00 542px)"></i><i style="top:150px;left:6px;width:550px;background:linear-gradient(90deg,#00bf95 -2px,#00bf84 223px,#00bf70 353px,#00bf5a 431px,#00bf44 476px,#00bf2e 501px,#00bf1d 512px,#00bf12 516px,#00bf0d 517px,#00bf02 518px,#0dbf00 519px,#1bbf00 523px,#2ebf00 534px,#3cbf00 547px)"></i><i style="top:152px;left:5px;width:556px;background:linear-gradient(90deg,#00bf95 -2px,#00bf84 223px,#00bf70 353px,#00bf5b 431px,#00bf44 477px,#00bf2e 502px,#00bf1d 513px,#00bf12 517px,#00bf0d 518px,#00bf04 519px,#0dbf00 520px,#1bbf00 524px,#2ebf00 535px,#41bf00 553px)"></i><i style="top:154px;left:5px;width:561px;background:linear-gradient(90deg,#00bf96 -2px,#00bf84 223px,#00bf71 353px,#00bf5b 431px,#00bf44 477px,#00bf2f 502px,#00bf1e 513px,#00bf12 517px,#00bf0e 518px,#00bf05 519px,#0cbf00 520px,#1bbf00 524px,#2ebf00 535px,#45bf00 558px)"></i><i style="top:156px;left:5px;width:567px;background:linear-gradient(90deg,#00bf96 -2px,#00bf85 223px,#00bf71 353px,#00bf5b 431px,#00bf45 477px,#00bf2f 502px,#00bf1e 513px,#00bf13 517px,#00bf0e 518px,#00bf06 519px,#0cbf00 520px,#18bf00 523px,#2abf00 532px,#41bf00 553px,#4abf00 564px)"></i><i style="top:158px;left:4px;width:574px;background:linear-gradient(90deg,#00bf96 -2px,#00bf85 224px,#00bf71 354px,#00bf5c 432px,#00bf45 478px,#00bf2f 503px,#00bf1e 514px,#00bf13 518px,#00bf0e 519px,#00bf07 520px,#0cbf00 521px,#18bf00 524px,#2abf00 533px,#42bf00 554px,#4fbf00 571px)"></i><i style="top:160px;left:4px;width:579px;background:linear-gradient(90deg,#00bf96 -2px,#00bf85 224px,#00bf72 354px,#00bf5c 432px,#00bf45 478px,#00bf2f 503px,#00bf1e 514px,#00bf13 518px,#00bf07 520px,#0bbf00 521px,#18bf00 524px,#2abf00 533px,#42bf00 554px,#53bf00 576px)"></i><i style="top:162px;left:4px;width:584px;background:linear-gradient(90deg,#00bf97 -2px,#00bf86 224px,#00bf72 354px,#00bf5c 432px,#00bf45 478px,#00bf30 503px,#00bf1f 514px,#00bf14 518px,#00bf08 520px,#0bbf00 521px,#18bf00 524px,#2abf00 533px,#42bf00 554px,#56bf00 581px)"></i><i style="top:164px;left:4px;width:589px;background:linear-gradient(90deg,#00bf97 -2px,#00bf86 224px,#00bf72 354px,#00bf5c 432px,#00bf46 478px,#00bf30 503px,#00bf1f 514px,#00bf0f 519px,#00bf09 520px,#0bbf00 521px,#18bf00 524px,#2abf00 533px,#42bf00 554px,#5abf00 586px)"></i><i style="top:166px;left:4px;width:595px;background:linear-gradient(90deg,#00bf97 -2px,#00bf86 224px,#00bf73 354px,#00bf5d 432px,#00bf47 477px,#00bf31 502px,#00bf1f 514px,#00bf10 519px,#00bf09 520px,#0abf00 521px,#18bf00 524px,#2bbf00 533px,#43bf00 554px,#5ebf00 592px)"></i><i style="top:168px;left:4px;width:600px;background:linear-gradient(90deg,#00bf97 -2px,#00bf87 224px,#00bf73 354px,#00bf5e 431px,#00bf47 477px,#00bf32 502px,#00bf1f 514px,#00bf10 519px,#00bf0a 520px,#0abf00 521px,#15bf00 523px,#26bf00 530px,#3cbf00 547px,#58bf00 582px,#61bf00 597px)"></i><i style="top:170px;left:4px;width:605px;background:linear-gradient(90deg,#00bf98 -2px,#00bf87 224px,#00bf73 354px,#00bf5e 431px,#00bf47 477px,#00bf32 502px,#00bf20 514px,#00bf10 519px,#00bf0a 520px,#0abf00 521px,#14bf00 523px,#26bf00 530px,#3cbf00 547px,#58bf00 582px,#65bf00 602px)"></i><i style="top:172px;left:4px;width:610px;background:linear-gradient(90deg,#00bf98 -2px,#00bf87 224px,#00bf74 354px,#00bf5e 431px,#00bf48 477px,#00bf32 502px,#00bf20 514px,#00bf11 519px,#00bf0b 520px,#09bf00 521px,#14bf00 523px,#26bf00 530px,#3cbf00 547px,#59bf00 582px,#68bf00 607px)"></i><i style="top:174px;left:4px;width:615px;background:linear-gradient(90deg,#00bf98 -2px,#00bf87 224px,#00bf74 354px,#00bf5f 431px,#00bf48 477px,#00bf32 502px,#00bf20 514px,#00bf11 519px,#00bf0b 520px,#09bf00 521px,#14bf00 523px,#26bf00 530px,#3dbf00 547px,#58bf00 581px,#6bbf00 612px)"></i><i style="top:176px;left:4px;width:620px;background:linear-gradient(90deg,#00bf98 -2px,#00bf88 225px,#00bf74 354px,#00bf5f 431px,#00bf48 477px,#00bf33 502px,#00bf20 514px,#00bf11 519px,#00bf0c 520px,#08bf00 521px,#14bf00 523px,#24bf00 529px,#3abf00 544px,#55bf00 575px,#6ebf00 617px)"></i><i style="top:178px;left:4px;width:626px;background:linear-gradient(90deg,#00bf99 -2px,#00bf88 225px,#00bf75 354px,#00bf5f 431px,#00bf49 477px,#00bf33 502px,#00bf21 514px,#00bf12 519px,#00bf0c 520px,#07bf00 521px,#0fbf00 522px,#1dbf00 526px,#31bf00 537px,#4abf00 561px,#69bf00 607px,#72bf00 623px)"></i><i style="top:180px;left:4px;width:632px;background:linear-gradient(90deg,#00bf99 -2px,#00bf88 225px,#00bf75 354px,#00bf60 431px,#00bf4a 476px,#00bf34 501px,#00bf21 514px,#00bf12 519px,#00bf0d 520px,#07bf00 521px,#0fbf00 522px,#1dbf00 526px,#31bf00 537px,#4bbf00 561px,#6abf00 607px,#75bf00 629px)"></i><i style="top:182px;left:4px;width:637px;background:linear-gradient(90deg,#00bf99 -2px,#00bf89 225px,#00bf75 354px,#00bf60 431px,#00bf4a 476px,#00bf35 501px,#00bf21 514px,#00bf12 519px,#00bf0d 520px,#06bf00 521px,#0fbf00 522px,#1dbf00 526px,#31bf00 537px,#4bbf00 561px,#6abf00 607px,#78bf00 634px)"></i><i style="top:184px;left:5px;width:641px;background:linear-gradient(90deg,#00bf99 -2px,#00bf89 225px,#00bf76 354px,#00bf60 430px,#00bf4a 475px,#00bf35 500px,#00bf21 513px,#00bf13 518px,#00bf0d 519px,#05bf00 520px,#0fbf00 521px,#1dbf00 525px,#32bf00 536px,#4bbf00 560px,#6abf00 606px,#7bbf00 638px)"></i><i style="top:186px;left:5px;width:646px;background:linear-gradient(90deg,#00bf9a -2px,#00bf89 225px,#00bf76 354px,#00bf61 430px,#00bf4b 475px,#00bf35 500px,#00bf22 513px,#00bf13 518px,#00bf0e 519px,#03bf00 520px,#0ebf00 521px,#1dbf00 525px,#32bf00 536px,#4bbf00 560px,#6abf00 605px,#7ebf00 643px)"></i><i style="top:188px;left:5px;width:652px;background:linear-gradient(90deg,#00bf9a -2px,#00bf8a 225px,#00bf76 354px,#00bf61 430px,#00bf4b 475px,#00bf36 500px,#00bf22 513px,#00bf13 518px,#00bf0e 519px,#00bf01 520px,#0ebf00 521px,#1dbf00 525px,#32bf00 536px,#4cbf00 560px,#6bbf00 605px,#81bf00 649px)"></i><i style="top:190px;left:5px;width:658px;background:linear-gradient(90deg,#00bf9a -2px,#00bf8a 225px,#00bf77 353px,#00bf62 429px,#00bf4b 475px,#00bf36 500px,#00bf22 513px,#00bf14 518px,#00bf0f 519px,#00bf04 520px,#0ebf00 521px,#1bbf00 524px,#2ebf00 533px,#46bf00 553px,#64bf00 592px,#85bf00 655px)"></i><i style="top:192px;left:5px;width:663px;background:linear-gradient(90deg,#00bf9b -2px,#00bf8a 225px,#00bf77 353px,#00bf62 429px,#00bf4c 475px,#00bf36 500px,#00bf22 513px,#00bf14 518px,#00bf0f 519px,#00bf05 520px,#0ebf00 521px,#1abf00 524px,#2ebf00 533px,#46bf00 553px,#64bf00 592px,#88bf00 660px)"></i><i style="top:194px;left:5px;width:668px;background:linear-gradient(90deg,#00bf9b -2px,#00bf8b 225px,#00bf78 353px,#00bf63 429px,#00bf4d 474px,#00bf37 500px,#00bf23 513px,#00bf14 518px,#00bf0f 519px,#00bf06 520px,#0dbf00 521px,#1abf00 524px,#2ebf00 533px,#46bf00 553px,#64bf00 592px,#88bf00 660px,#8abf00 665px)"></i><i style="top:196px;left:5px;width:672px;background:linear-gradient(90deg,#00bf9b -2px,#00bf8b 225px,#00bf78 353px,#00bf63 429px,#00bf4d 474px,#00bf37 500px,#00bf23 513px,#00bf15 518px,#00bf10 519px,#00bf07 520px,#0dbf00 521px,#1abf00 524px,#2ebf00 533px,#47bf00 553px,#65bf00 592px,#89bf00 660px,#8dbf00 669px)"></i><i style="top:198px;left:5px;width:677px;background:linear-gradient(90deg,#00bf9b -2px,#00bf8b 225px,#00bf78 353px,#00bf63 429px,#00bf4d 474px,#00bf37 500px,#00bf23 513px,#00bf15 518px,#00bf10 519px,#00bf08 520px,#0dbf00 521px,#1abf00 524px,#2ebf00 533px,#47bf00 553px,#65bf00 592px,#8abf00 660px,#90bf00 674px)"></i><i style="top:200px;left:6px;width:681px;background:linear-gradient(90deg,#00bf9c -2px,#00bf8c 225px,#00bf79 353px,#00bf63 429px,#00bf4d 474px,#00bf38 499px,#00bf24 512px,#00bf15 517px,#00bf09 519px,#0cbf00 520px,#1abf00 523px,#2dbf00 531px,#45bf00 550px,#63bf00 587px,#87bf00 652px,#93bf00 678px)"></i><i style="top:202px;left:6px;width:687px;background:linear-gradient(90deg,#00bf9c -2px,#00bf8c 225px,#00bf79 353px,#00bf64 429px,#00bf4d 474px,#00bf38 499px,#00bf24 512px,#00bf16 517px,#00bf11 518px,#0fbf0a 520px,#1abf00 523px,#2dbf00 531px,#45bf00 550px,#64bf00 587px,#87bf00 651px,#96bf00 684px)"></i><i style="top:204px;left:6px;width:693px;background:linear-gradient(90deg,#00bf9c -2px,#00bf8c 225px,#00bf79 353px,#00bf65 428px,#00bf4f 473px,#00bf38 499px,#00bf24 512px,#00bf16 517px,#0cbf15 518px,#1bbf11 522px,#27bf06 528px,#29bf00 529px,#40bf00 545px,#5dbf00 577px,#80bf00 634px,#99bf00 690px)"></i><i style="top:206px;left:6px;width:698px;background:linear-gradient(90deg,#00bf9c -2px,#00bf8d 226px,#00bf7a 353px,#00bf65 428px,#00bf4f 473px,#00bf39 499px,#00bf24 512px,#00bf1d 515px,#0fbf1a 517px,#1fbf17 522px,#31bf0a 533px,#35bf00 536px,#4fbf00 559px,#6ebf00 602px,#94bf00 676px,#9cbf00 695px)"></i><i style="top:208px;left:6px;width:703px;background:linear-gradient(90deg,#00bf9d -2px,#00bf8d 226px,#00bf7a 353px,#00bf66 428px,#00bf4f 473px,#00bf39 499px,#00bf25 512px,#00bf20 514px,#0dbf1f 515px,#1cbf1d 519px,#2fbf16 530px,#3bbf09 540px,#3dbf00 542px,#59bf00 571px,#7bbf00 623px,#9fbf00 700px)"></i><i style="top:210px;left:7px;width:707px;background:linear-gradient(90deg,#00bf9d -2px,#00bf8d 225px,#00bf7b 352px,#00bf66 427px,#00bf50 472px,#00bf39 498px,#00bf25 511px,#10bf23 513px,#1fbf21 518px,#34bf19 531px,#42bf0c 544px,#44bf08 546px,#46bf00 548px,#64bf00 583px,#87bf00 644px,#a2bf00 704px)"></i><i style="top:212px;left:7px;width:714px;background:linear-gradient(90deg,#00bf9d -2px,#00bf8e 226px,#00bf7b 353px,#00bf66 428px,#00bf50 472px,#00bf3a 498px,#00bf28 510px,#0dbf27 511px,#1cbf25 515px,#30bf20 526px,#46bf11 547px,#4abf09 552px,#4cbf00 554px,#6cbf00 594px,#91bf00 662px,#a6bf00 711px)"></i><i style="top:214px;left:7px;width:719px;background:linear-gradient(90deg,#00bf9e -2px,#00bf8e 226px,#00bf7b 353px,#00bf66 428px,#00bf51 472px,#00bf3b 497px,#00bf2c 508px,#10bf2a 510px,#1fbf28 515px,#34bf23 528px,#4cbf13 552px,#51bf07 559px,#52bf01 560px,#73bf00 604px,#99bf00 679px,#a8bf00 716px)"></i><i style="top:216px;left:8px;width:723px;background:linear-gradient(90deg,#00bf9e -2px,#00bf8e 226px,#00bf7c 352px,#00bf67 427px,#00bf51 471px,#00bf3b 496px,#00bf2e 506px,#0dbf2d 507px,#1cbf2c 511px,#30bf28 522px,#4abf1b 547px,#56bf0d 562px,#58bf05 565px,#59bf00 566px,#7abf00 615px,#a2bf00 697px,#abbf00 720px)"></i><i style="top:218px;left:8px;width:728px;background:linear-gradient(90deg,#00bf9e -2px,#00bf8f 226px,#00bf7c 352px,#00bf68 426px,#00bf51 471px,#00bf3c 496px,#00bf31 504px,#0abf30 505px,#15bf30 507px,#26bf2d 514px,#3dbf27 531px,#56bf16 561px,#5dbf0a 570px,#5dbf07 571px,#5ebf00 572px,#81bf00 625px,#a9bf00 712px,#aebf00 725px)"></i><i style="top:220px;left:8px;width:733px;background:linear-gradient(90deg,#00bf9e -2px,#00bf8f 226px,#00bf7d 352px,#00bf68 426px,#00bf52 471px,#00bf3c 496px,#00bf35 502px,#02bf33 503px,#0ebf33 504px,#1cbf32 508px,#30bf2e 519px,#4bbf24 544px,#5dbf14 569px,#63bf09 577px,#64bf00 579px,#88bf00 637px,#b1bf00 730px)"></i><i style="top:222px;left:9px;width:737px;background:linear-gradient(90deg,#00bf9f -2px,#00bf8f 226px,#00bf7d 352px,#00bf68 426px,#00bf52 470px,#00bf3d 495px,#00bf36 500px,#0abf36 501px,#15bf35 503px,#26bf33 510px,#3dbf2e 527px,#5bbf1d 563px,#66bf0f 579px,#68bf07 583px,#69bf00 584px,#8ebf00 646px,#b4bf00 734px)"></i><i style="top:224px;left:9px;width:742px;background:linear-gradient(90deg,#00bf9f -2px,#00bf90 226px,#00bf7d 352px,#00bf69 426px,#00bf53 470px,#00bf3d 495px,#00bf39 498px,#04bf38 499px,#0ebf38 500px,#1dbf37 504px,#30bf34 515px,#4bbf2b 540px,#65bf1a 575px,#6cbf0d 587px,#6ebf04 590px,#6fbf00 591px,#94bf00 657px,#b7bf00 739px)"></i><i style="top:226px;left:10px;width:746px;background:linear-gradient(90deg,#00bf9f -2px,#00bf90 226px,#00bf7e 351px,#00bf69 425px,#00bf53 469px,#00bf3d 494px,#00bf3b 496px,#0bbf3a 497px,#18bf3a 500px,#2bbf37 509px,#44bf31 530px,#65bf1f 573px,#70bf11 590px,#73bf07 595px,#73bf00 596px,#9abf00 666px,#babf00 743px)"></i><i style="top:228px;left:10px;width:751px;background:linear-gradient(90deg,#00bfa0 -2px,#00bf90 226px,#00bf7e 351px,#00bf6a 425px,#00bf54 469px,#00bf3e 494px,#05bf3d 495px,#0ebf3c 496px,#1dbf3b 500px,#31bf39 511px,#4bbf32 536px,#6bbf1f 580px,#75bf10 597px,#77bf08 601px,#78bf00 603px,#a0bf00 677px,#bdbf00 748px)"></i><i style="top:230px;left:10px;width:756px;background:linear-gradient(90deg,#00bfa0 -2px,#00bf91 226px,#00bf7f 351px,#00bf6a 425px,#00bf54 469px,#00bf3f 493px,#0bbf3f 494px,#19bf3e 497px,#2cbf3c 506px,#45bf36 527px,#65bf28 569px,#76bf17 597px,#7bbf0c 606px,#7cbf06 608px,#7dbf00 609px,#a5bf00 686px,#bfbe00 753px)"></i><i style="top:232px;left:11px;width:760px;background:linear-gradient(90deg,#00bfa0 -2px,#00bf91 226px,#00bf7f 351px,#00bf6b 424px,#00bf55 468px,#00bf42 490px,#05bf41 491px,#0fbf41 492px,#1dbf40 496px,#31bf3d 507px,#4cbf37 532px,#6fbf25 581px,#7cbf15 605px,#80bf0b 612px,#82bf00 615px,#abbf00 696px,#bfbe00 750px,#bfbb00 757px)"></i><i style="top:234px;left:11px;width:766px;background:linear-gradient(90deg,#00bfa0 -2px,#00bf91 226px,#00bf80 351px,#00bf6b 424px,#00bf55 468px,#00bf43 489px,#0bbf43 490px,#19bf42 493px,#2cbf40 502px,#45bf3b 523px,#66bf2f 565px,#7dbf1c 603px,#84bf0e 617px,#86bf06 620px,#86bf00 621px,#b0bf00 705px,#bfbe00 747px,#bfb800 763px)"></i><i style="top:236px;left:11px;width:772px;background:linear-gradient(90deg,#00bfa1 -2px,#00bf92 227px,#00bf80 351px,#00bf6c 424px,#00bf55 468px,#00bf46 487px,#0fbf45 489px,#1dbf44 493px,#31bf42 504px,#4cbf3c 529px,#6fbf2d 578px,#83bf1a 612px,#89bf0d 624px,#8abf08 626px,#8bbf02 627px,#8dbf00 631px,#b7bf00 720px,#bfbe00 744px,#bfb500 769px)"></i><i style="top:238px;left:12px;width:776px;background:linear-gradient(90deg,#00bfa1 -2px,#00bf92 226px,#00bf80 350px,#00bf6c 423px,#00bf57 466px,#00bf47 485px,#0cbf47 486px,#19bf46 489px,#2cbf45 498px,#46bf40 519px,#67bf35 561px,#82bf21 608px,#8cbf12 626px,#8ebf09 631px,#8fbf00 633px,#babf00 724px,#bfbd00 742px,#bfb200 773px)"></i><i style="top:240px;left:12px;width:781px;background:linear-gradient(90deg,#00bfa1 -2px,#00bf92 227px,#00bf81 351px,#00bf6d 423px,#00bf57 466px,#00bf4a 483px,#0fbf49 485px,#1ebf48 489px,#32bf46 500px,#4dbf41 525px,#70bf33 574px,#88bf20 617px,#91bf10 634px,#93bf08 638px,#94bf00 639px,#bfbf00 732px,#bfaf00 778px)"></i><i style="top:242px;left:13px;width:784px;background:linear-gradient(90deg,#00bfa2 -2px,#00bf93 227px,#00bf81 351px,#00bf6d 423px,#00bf57 466px,#00bf4b 481px,#0cbf4b 482px,#1abf4a 485px,#2dbf49 494px,#46bf44 515px,#67bf3a 557px,#88bf26 612px,#94bf15 636px,#97bf09 643px,#98bf00 645px,#bfbf00 730px,#bfad00 781px)"></i><i style="top:244px;left:13px;width:789px;background:linear-gradient(90deg,#00bfa2 -2px,#00bf93 227px,#00bf82 351px,#00bf6d 423px,#00bf58 466px,#00bf4d 479px,#10bf4d 481px,#1ebf4c 485px,#32bf4a 496px,#4dbf45 521px,#71bf39 570px,#8ebf24 622px,#99bf14 643px,#9cbf0b 649px,#9cbf08 650px,#9dbf00 651px,#bfbf00 727px,#bfaa00 786px)"></i><i style="top:246px;left:14px;width:793px;background:linear-gradient(90deg,#00bfa2 -2px,#00bf94 227px,#00bf82 350px,#00bf6e 422px,#00bf58 465px,#00bf4f 477px,#0cbf4f 478px,#1abf4e 481px,#2dbf4c 490px,#47bf48 511px,#68bf3f 553px,#8dbf2a 616px,#9bbf19 644px,#a0bf0c 654px,#a1bf00 657px,#bfbe00 724px,#bfa700 790px)"></i><i style="top:248px;left:14px;width:799px;background:linear-gradient(90deg,#00bfa3 -2px,#00bf94 227px,#00bf83 350px,#00bf6f 422px,#00bf59 465px,#00bf51 475px,#10bf50 477px,#1ebf50 481px,#33bf4e 492px,#4ebf49 517px,#72bf3e 566px,#93bf29 626px,#a0bf18 652px,#a5bf0b 661px,#a5bf07 662px,#a6bf00 663px,#bfbe00 721px,#bfa500 796px)"></i><i style="top:250px;left:15px;width:804px;background:linear-gradient(90deg,#00bfa3 -2px,#00bf94 227px,#00bf83 350px,#00bf6f 421px,#00bf59 464px,#00bf52 473px,#0dbf52 474px,#1abf52 477px,#2dbf50 486px,#47bf4c 507px,#69bf44 549px,#92bf2e 620px,#a2bf1c 653px,#a8bf0e 665px,#aabf04 668px,#aabf00 669px,#bfbe00 717px,#bfa300 797px,#bfa200 801px)"></i><i style="top:252px;left:15px;width:808px;background:linear-gradient(90deg,#00bfa3 -2px,#00bf95 227px,#00bf83 350px,#00bf70 421px,#00bf5a 464px,#00bf55 471px,#10bf54 473px,#1ebf53 477px,#33bf51 488px,#4ebf4d 512px,#71bf43 560px,#97bf2e 628px,#a7bf1c 660px,#adbf0f 671px,#aebf07 674px,#aebf00 675px,#bfbe00 714px,#bfa300 792px,#bfa000 805px)"></i><i style="top:254px;left:16px;width:812px;background:linear-gradient(90deg,#00bfa3 -2px,#00bf95 227px,#00bf84 349px,#00bf70 420px,#00bf5b 462px,#00bf56 469px,#0dbf56 470px,#1abf55 473px,#2ebf54 482px,#48bf50 503px,#69bf48 545px,#97bf33 623px,#aabf1f 661px,#b1bf10 676px,#b2bf09 679px,#b3bf00 681px,#bfbe00 710px,#bfa300 787px,#bf9d00 809px)"></i><i style="top:256px;left:16px;width:817px;background:linear-gradient(90deg,#00bfa4 -2px,#00bf96 228px,#00bf84 350px,#00bf70 421px,#00bf5b 463px,#00bf58 467px,#10bf57 469px,#1fbf57 473px,#33bf55 484px,#4ebf51 508px,#72bf48 556px,#9dbf32 632px,#aebf1f 668px,#b5bf11 682px,#b7bf07 686px,#b7bf00 687px,#bfbe00 707px,#bfa300 783px,#bf9b00 814px)"></i><i style="top:258px;left:17px;width:822px;background:linear-gradient(90deg,#00bfa4 -2px,#00bf96 228px,#00bf85 350px,#00bf71 420px,#00bf5b 462px,#00bf59 465px,#0ebf59 466px,#1bbf59 469px,#2ebf57 478px,#48bf54 499px,#6abf4d 541px,#99bf38 621px,#afbf25 666px,#b8bf14 685px,#bbbf09 691px,#bcbf03 692px,#bdbf00 694px,#bfba00 710px,#bfa000 788px,#bf9800 819px)"></i><i style="top:260px;left:17px;width:828px;background:linear-gradient(90deg,#00bfa4 -2px,#00bf96 228px,#00bf85 350px,#00bf72 420px,#00bf5c 462px,#00bf5b 463px,#11bf5b 465px,#1fbf5a 469px,#34bf59 480px,#4fbf55 504px,#73bf4c 552px,#a1bf36 635px,#b6bf23 676px,#bebf12 693px,#bfbf0a 697px,#bfbe00 699px,#bfa300 772px,#bf9600 825px)"></i><i style="top:262px;left:18px;width:832px;background:linear-gradient(90deg,#00bfa5 -2px,#00bf97 228px,#00bf86 349px,#00bf72 419px,#00bf5d 461px,#0ebf5c 462px,#1bbf5c 465px,#2ebf5b 474px,#48bf58 494px,#69bf51 535px,#98bf3f 613px,#b4bf2a 669px,#bfbf19 693px,#bfbb0b 702px,#bfba08 703px,#bfba00 704px,#bf9f00 781px,#bf9300 829px)"></i><i style="top:264px;left:18px;width:837px;background:linear-gradient(90deg,#00bfa5 -2px,#00bf97 228px,#00bf86 349px,#00bf73 419px,#00bf5f 459px,#11bf5e 461px,#1fbf5e 465px,#34bf5c 476px,#4fbf59 500px,#74bf50 548px,#a6bf3a 638px,#bdbf26 684px,#bfbb1a 698px,#bfb70c 708px,#bfb606 710px,#bfb500 711px,#bf9b00 791px,#bf9100 834px)"></i><i style="top:266px;left:19px;width:841px;background:linear-gradient(90deg,#00bfa5 -2px,#00bf98 228px,#00bf87 349px,#00bf74 418px,#00bf60 457px,#0ebf60 458px,#1bbf5f 461px,#2fbf5e 470px,#48bf5b 490px,#6abf55 531px,#99bf45 609px,#b9bf2f 672px,#bfbd26 689px,#bfb414 709px,#bfb208 715px,#bfb100 716px,#bf9700 800px,#bf8f00 838px)"></i><i style="top:268px;left:19px;width:846px;background:linear-gradient(90deg,#00bfa6 -2px,#00bf98 229px,#00bf87 350px,#00bf74 419px,#00bf62 455px,#0abf61 456px,#16bf61 458px,#27bf60 464px,#3ebf5f 479px,#5cbf5a 510px,#84bf50 570px,#b2bf3a 654px,#bfbe2c 685px,#bfb116 713px,#bfae09 721px,#bfad00 723px,#bf9300 811px,#bf8d00 843px)"></i><i style="top:270px;left:20px;width:850px;background:linear-gradient(90deg,#00bfa6 -2px,#00bf98 229px,#00bf88 349px,#00bf74 418px,#00bf63 453px,#0fbf63 454px,#1ebf63 458px,#32bf61 468px,#4ebf5e 491px,#71bf57 536px,#a4bf45 623px,#bfbe32 680px,#bfaf1a 715px,#bfab0d 725px,#bfaa07 727px,#bfaa00 728px,#bf9000 820px,#bf8a00 847px)"></i><i style="top:272px;left:20px;width:856px;background:linear-gradient(90deg,#00bfa6 -2px,#00bf99 230px,#00bf88 350px,#00bf75 418px,#00bf65 451px,#0bbf65 452px,#16bf65 454px,#27bf64 460px,#3ebf62 475px,#5dbf5e 506px,#85bf54 566px,#b7bf3e 657px,#bfbe36 678px,#bfac1b 719px,#bfa70d 731px,#bfa604 734px,#bfa600 735px,#bf8c00 831px,#bf8800 853px)"></i><i style="top:274px;left:21px;width:859px;background:linear-gradient(90deg,#00bfa7 -2px,#00bf99 230px,#00bf89 350px,#00bf75 418px,#00bf67 448px,#03bf66 449px,#0fbf66 450px,#1fbf66 454px,#33bf65 464px,#4ebf62 487px,#72bf5b 532px,#a5bf4b 619px,#bfbe3a 673px,#bfa91d 722px,#bfa40e 736px,#bfa207 739px,#bfa200 740px,#bf8900 840px,#bf8600 856px)"></i><i style="top:276px;left:21px;width:864px;background:linear-gradient(90deg,#00bfa7 -2px,#00bf9a 230px,#00bf89 350px,#00bf76 418px,#00bf68 447px,#0bbf68 448px,#17bf68 450px,#27bf67 456px,#3fbf65 471px,#5dbf61 502px,#87bf58 562px,#bbbf42 659px,#bfbd3d 672px,#bfa61e 727px,#bfa00f 742px,#bf9f08 745px,#bf9e00 747px,#bf8600 851px,#bf8400 861px)"></i><i style="top:278px;left:22px;width:868px;background:linear-gradient(90deg,#00bfa7 -2px,#00bf9a 230px,#00bf8a 349px,#00bf77 417px,#00bf6a 444px,#04bf6a 445px,#0fbf6a 446px,#1fbf69 450px,#33bf68 460px,#4ebf65 482px,#71bf5f 526px,#a4bf50 611px,#bfbe42 666px,#bfa31f 730px,#bf9d0f 747px,#bf9c06 751px,#bf9b00 752px,#bf8300 860px,#bf8200 865px)"></i><i style="top:280px;left:23px;width:872px;background:linear-gradient(90deg,#00bfa8 -2px,#00bf9b 230px,#00bf8a 349px,#00bf78 416px,#00bf6b 442px,#0cbf6b 443px,#17bf6b 445px,#2abf6a 452px,#42bf68 468px,#61bf64 501px,#8cbf5b 564px,#bfbf46 660px,#bfa021 733px,#bf9a10 752px,#bf9808 756px,#bf9800 758px,#bf8000 869px)"></i><i style="top:282px;left:24px;width:877px;background:linear-gradient(90deg,#00bfa8 -2px,#00bf9b 231px,#00bf8b 349px,#00bf78 416px,#00bf6d 439px,#05bf6d 440px,#10bf6d 441px,#1fbf6c 445px,#34bf6b 455px,#4ebf69 477px,#72bf63 521px,#a6bf55 606px,#bfbe48 658px,#bf9d21 737px,#bf9610 757px,#bf9506 762px,#bf9500 763px,#bf7d00 874px)"></i><i style="top:284px;left:24px;width:882px;background:linear-gradient(90deg,#00bfa8 -2px,#00bf9b 231px,#00bf8c 349px,#00bf79 416px,#00bf6f 438px,#0cbf6e 439px,#17bf6e 441px,#2abf6d 448px,#42bf6c 464px,#62bf68 497px,#8dbf5f 560px,#bfbe4c 654px,#bf9d27 732px,#bf9414 760px,#bf920a 767px,#bf9207 768px,#bf9201 769px,#bf7b00 879px)"></i><i style="top:286px;left:25px;width:887px;background:linear-gradient(90deg,#00bfa9 -2px,#00bf9c 231px,#00bf8c 349px,#00bf79 415px,#00bf70 435px,#06bf70 436px,#10bf70 437px,#20bf70 441px,#34bf6f 451px,#4fbf6c 473px,#73bf67 517px,#a7bf5a 602px,#bfbe4f 650px,#bf9e2c 727px,#bf9217 762px,#bf8f0b 772px,#bf8e00 775px,#bf7900 884px)"></i><i style="top:288px;left:26px;width:891px;background:linear-gradient(90deg,#00bfa9 -2px,#00bf9c 232px,#00bf8c 349px,#00bf7a 415px,#00bf72 433px,#0dbf72 434px,#1bbf71 437px,#2ebf70 445px,#49bf6f 464px,#6bbf6a 502px,#9abf60 575px,#bfbe52 646px,#bf9d30 723px,#bf9019 765px,#bf8c0c 777px,#bf8c07 779px,#bf8b00 780px,#bf7700 888px)"></i><i style="top:290px;left:26px;width:896px;background:linear-gradient(90deg,#00bfaa -2px,#00bf9d 232px,#00bf8d 350px,#00bf7b 415px,#00bf74 431px,#10bf73 433px,#20bf73 437px,#34bf72 447px,#50bf70 469px,#74bf6b 513px,#a8bf5e 598px,#bfbe55 643px,#bf9d34 719px,#bf8d1a 769px,#bf890c 783px,#bf8905 786px,#bf8800 787px,#bf7500 893px)"></i><i style="top:292px;left:27px;width:900px;background:linear-gradient(90deg,#00bfaa -2px,#00bf9d 233px,#00bf8e 350px,#00bf7b 415px,#00bf75 429px,#0dbf75 430px,#1cbf74 433px,#2fbf74 441px,#48bf72 459px,#6abf6e 496px,#99bf65 567px,#bfbe57 639px,#bf9d38 715px,#bf8b1c 772px,#bf870d 788px,#bf8606 791px,#bf8500 792px,#bf7300 897px)"></i><i style="top:294px;left:27px;width:904px;background:linear-gradient(90deg,#00bfaa -2px,#00bf9e 234px,#00bf8e 351px,#00bf7c 416px,#00bf77 427px,#11bf76 429px,#20bf76 433px,#35bf75 443px,#50bf73 465px,#74bf6e 508px,#a9bf63 592px,#bfbe5a 636px,#bf9d3b 711px,#bf891d 776px,#bf840d 794px,#bf8304 798px,#bf8200 799px,#bf7100 901px)"></i><i style="top:296px;left:28px;width:908px;background:linear-gradient(90deg,#00bfab -2px,#00bf9e 234px,#00bf8f 350px,#00bf7c 415px,#00bf78 425px,#0dbf78 426px,#1cbf78 429px,#2fbf77 437px,#49bf75 455px,#6abf72 491px,#99bf69 561px,#bfbe5d 631px,#bf9e3f 705px,#bf871f 778px,#bf810f 798px,#bf8006 803px,#bf8000 804px,#bf6f00 905px)"></i><i style="top:298px;left:29px;width:913px;background:linear-gradient(90deg,#00bfab -2px,#00bf9f 234px,#00bf8f 350px,#00bf7d 414px,#00bf7a 422px,#11bf79 424px,#21bf79 428px,#35bf78 438px,#51bf76 460px,#75bf72 503px,#aabf67 587px,#bfbe60 627px,#bf9d42 701px,#bf841f 782px,#bf7f10 803px,#bf7d07 808px,#bf7d00 810px,#bf6d00 910px)"></i><i style="top:300px;left:29px;width:918px;background:linear-gradient(90deg,#00bfab -2px,#00bf9f 235px,#00bf90 351px,#00bf7e 415px,#00bf7b 421px,#0ebf7b 422px,#1cbf7b 425px,#30bf7a 433px,#49bf79 451px,#6bbf75 487px,#9abf6d 557px,#bfbe62 624px,#bf9d45 697px,#bf8220 787px,#bf7c0f 810px,#bf7a06 815px,#bf7a00 816px,#bf6b00 915px)"></i><i style="top:302px;left:30px;width:922px;background:linear-gradient(90deg,#00bfac -2px,#00bfa0 236px,#00bf91 351px,#00bf7f 414px,#00bf7d 418px,#11bf7d 420px,#21bf7c 424px,#36bf7b 434px,#52bf7a 456px,#6fbf7a 485px,#8fbf73 535px,#bfbe65 620px,#bf9e48 692px,#bf7f21 790px,#bf7910 814px,#bf7807 820px,#bf7700 822px,#bf6900 919px)"></i><i style="top:304px;left:30px;width:927px;background:linear-gradient(90deg,#00bfac -2px,#00bfa0 237px,#00bf91 352px,#00bf7f 415px,#00bf7e 417px,#0ebf7e 418px,#1dbf7e 421px,#30bf7d 429px,#59bf7e 455px,#73bf7f 482px,#92bf79 533px,#a8bf6e 574px,#bfbe67 617px,#bf9d4a 689px,#bf7d21 796px,#bf7610 821px,#bf7505 827px,#bf7500 828px,#bf6700 924px)"></i><i style="top:306px;left:31px;width:931px;background:linear-gradient(90deg,#00bfad -2px,#00bfa1 237px,#00bf92 352px,#00bf80 414px,#12bf80 416px,#21bf7f 420px,#42bf80 433px,#5bbf82 449px,#75bf84 476px,#92bf7f 526px,#b1bf6f 585px,#bfbe6a 613px,#bf9d4d 684px,#bf7c25 791px,#bf7513 823px,#bf7309 831px,#bf7200 834px,#bf6500 928px)"></i><i style="top:308px;left:32px;width:935px;background:linear-gradient(90deg,#00bfad -2px,#00bfa1 238px,#00bf92 352px,#00bf82 411px,#07bf82 412px,#15bf82 413px,#26bf82 416px,#3cbf83 423px,#54bf85 436px,#6dbf87 459px,#88bf87 497px,#a3bf7d 552px,#b7bf70 591px,#bfbe6c 609px,#bf9d50 680px,#bf7c29 786px,#bf7315 826px,#bf700a 836px,#bf7000 839px,#bf6300 932px)"></i><i style="top:310px;left:33px;width:940px;background:linear-gradient(90deg,#00bfad -2px,#00bfa2 238px,#00bf93 352px,#00bf87 400px,#06bf86 401px,#10bf86 402px,#1fbf86 406px,#30bf86 412px,#46bf87 421px,#60bf8a 438px,#7abf8c 466px,#95bf8a 515px,#adbf7d 568px,#bebf71 599px,#bfa65b 652px,#bf863a 745px,#bf731d 818px,#bf6e0d 839px,#bf6d06 843px,#bf6d00 844px,#bf6100 937px)"></i><i style="top:312px;left:34px;width:944px;background:linear-gradient(90deg,#00bfae -2px,#00bfa2 239px,#00bf94 352px,#00bf8a 391px,#0ebf8a 392px,#1cbf8a 395px,#2fbf89 403px,#3abf89 409px,#52bf8b 421px,#6cbf8e 442px,#86bf90 476px,#a2bf8a 536px,#b9bf7a 586px,#bfbd71 601px,#bf9d55 671px,#bf7c30 776px,#bf6f18 831px,#bf6b0b 846px,#bf6b04 849px,#bf6a00 850px,#bf5f00 941px)"></i><i style="top:314px;left:35px;width:948px;background:linear-gradient(90deg,#00bfae -2px,#00bfa3 240px,#00bf94 353px,#00bf8d 382px,#0dbf8d 383px,#19bf8d 385px,#2abf8d 391px,#47bf8d 408px,#60bf90 424px,#7abf92 450px,#92bf93 492px,#abbf8a 551px,#bfbf7a 595px,#bfb56c 613px,#bf944f 690px,#bf7326 807px,#bf6a13 844px,#bf6808 853px,#bf6806 854px,#bf6800 855px,#bf5d00 945px)"></i><i style="top:316px;left:35px;width:954px;background:linear-gradient(90deg,#00bfaf -2px,#00bfa3 241px,#00bf95 353px,#00bf90 375px,#0ebf90 376px,#1abf90 378px,#2cbf90 384px,#41bf90 397px,#4cbf90 405px,#65bf93 422px,#7ebf96 449px,#96bf96 493px,#aebf8e 553px,#bfbe7f 593px,#bfb06a 619px,#bf8f4d 700px,#bf6e22 824px,#bf6710 853px,#bf6607 860px,#bf6500 862px,#bf5b00 951px)"></i><i style="top:318px;left:36px;width:958px;background:linear-gradient(90deg,#00bfaf -2px,#00bfa4 242px,#00bf96 354px,#00bf93 367px,#07bf93 368px,#12bf93 369px,#20bf93 372px,#34bf93 380px,#58bf94 406px,#72bf97 427px,#8abf9a 460px,#a4bf98 519px,#babf8a 576px,#bfbd83 591px,#bfab69 624px,#bf8b4a 709px,#bf6b21 830px,#bf6510 859px,#bf6306 866px,#bf6300 867px,#bf5900 955px)"></i><i style="top:320px;left:37px;width:962px;background:linear-gradient(90deg,#00bfaf -2px,#00bfa4 243px,#00bf96 354px,#00bf95 360px,#06bf95 361px,#12bf95 362px,#21bf95 365px,#35bf95 373px,#4cbf95 389px,#5abf96 401px,#73bf99 422px,#8bbf9c 454px,#a3bf9c 509px,#b9bf91 568px,#bfbd89 586px,#bfa767 629px,#bf8648 718px,#bf6821 836px,#bf6210 864px,#bf6107 871px,#bf6000 873px,#bf5700 959px)"></i><i style="top:322px;left:38px;width:966px;background:linear-gradient(90deg,#00bfb0 -2px,#00bfa5 244px,#00bf97 354px,#0ebf97 355px,#1bbf97 357px,#2ebf97 363px,#45bf98 376px,#61bf99 400px,#7abf9c 423px,#92bf9f 458px,#abbf9d 525px,#bfbf90 579px,#bfab73 618px,#bfa366 633px,#bf8347 725px,#bf6620 841px,#bf6010 870px,#bf5e05 877px,#bf5e00 878px,#bf5500 963px)"></i><i style="top:324px;left:39px;width:970px;background:linear-gradient(90deg,#00bfb0 -2px,#00bfa5 245px,#00bf99 348px,#0fbf99 349px,#1cbf99 351px,#30bf9a 357px,#47bf9a 370px,#68bf9b 399px,#81bf9f 424px,#98bfa2 462px,#afbf9f 530px,#bfbe93 577px,#bfab77 617px,#bfa065 637px,#bf7f46 733px,#bf6320 847px,#bf5d0f 876px,#bf5c06 882px,#bf5b00 884px,#bf5300 967px)"></i><i style="top:326px;left:40px;width:975px;background:linear-gradient(90deg,#00bfb1 -2px,#00bfa6 246px,#00bf9b 342px,#0dbf9b 343px,#1bbf9b 345px,#2dbf9b 350px,#43bf9c 361px,#5bbf9d 381px,#6bbf9e 396px,#84bfa2 422px,#9abfa5 460px,#b1bfa2 529px,#bfbd97 574px,#bfaa7b 616px,#bf9c65 640px,#bf7c45 739px,#bf6120 852px,#bf5b0f 881px,#bf5905 888px,#bf5900 889px,#bf5100 972px)"></i><i style="top:328px;left:40px;width:981px;background:linear-gradient(90deg,#00bfb1 -2px,#00bfa7 248px,#00bf9d 338px,#12bf9d 339px,#22bf9d 342px,#36bf9d 349px,#4dbf9e 363px,#66bf9f 387px,#83bfa3 415px,#99bfa7 451px,#afbfa6 516px,#bfbe9b 570px,#bfaa80 614px,#bf9964 644px,#bf7844 746px,#bf5e20 858px,#bf5810 887px,#bf5706 894px,#bf5600 896px,#bf4f00 978px)"></i><i style="top:330px;left:41px;width:984px;background:linear-gradient(90deg,#00bfb2 -2px,#00bfa7 249px,#00bf9e 332px,#03bf9e 333px,#13bf9e 334px,#23bf9f 337px,#37bf9f 344px,#4fbfa0 358px,#68bfa1 382px,#88bfa5 415px,#9ebfa9 453px,#b3bfa7 524px,#bfbe9e 567px,#bfaa84 612px,#bf9867 643px,#bf8251 705px,#bf5f26 847px,#bf5613 888px,#bf5407 899px,#bf5400 901px,#bf4d00 981px)"></i><i style="top:332px;left:42px;width:988px;background:linear-gradient(90deg,#00bfb2 -2px,#00bfa8 251px,#00bfa0 328px,#12bfa0 329px,#1fbfa0 331px,#33bfa0 337px,#4abfa1 349px,#64bfa2 371px,#77bfa4 391px,#90bfa8 420px,#a4bfab 461px,#b7bfa8 532px,#bfbea2 563px,#bfaa87 610px,#bf986b 642px,#bf9363 651px,#bf7141 761px,#bf591f 870px,#bf530e 899px,#bf5206 905px,#bf5100 906px,#bf4a00 985px)"></i><i style="top:334px;left:43px;width:993px;background:linear-gradient(90deg,#00bfb2 -2px,#00bfa8 252px,#00bfa1 323px,#0ebfa1 324px,#1dbfa2 326px,#2fbfa2 331px,#47bfa3 342px,#61bfa4 362px,#8ebfa9 411px,#a2bfad 449px,#b6bfab 523px,#bfbea5 559px,#bfaa8b 607px,#bf986f 640px,#bf9063 653px,#bf6f41 766px,#bf561f 875px,#bf500f 904px,#bf4f07 910px,#bf4f00 912px,#bf4800 990px)"></i><i style="top:336px;left:44px;width:997px;background:linear-gradient(90deg,#00bfb3 -2px,#00bfa9 254px,#00bfa3 319px,#12bfa3 320px,#1fbfa3 322px,#34bfa3 328px,#4bbfa4 340px,#66bfa6 362px,#90bfab 409px,#a5bfaf 448px,#b8bfad 523px,#bfbda7 556px,#bfab8e 605px,#bf9772 640px,#bf8e63 655px,#bf6c40 771px,#bf541f 880px,#bf4e0f 909px,#bf4d06 916px,#bf4c00 917px,#bf4600 994px)"></i><i style="top:338px;left:45px;width:1000px;background:linear-gradient(90deg,#00bfb3 -2px,#00bfaa 256px,#02bfa4 315px,#13bfa4 316px,#24bfa5 319px,#39bfa5 326px,#52bfa6 340px,#6dbfa8 364px,#93bfad 407px,#a7bfb0 446px,#b9bfaf 522px,#bfbdaa 552px,#bfab92 602px,#bf9876 638px,#bf8b62 657px,#bf6940 776px,#bf511f 885px,#bf4b0e 915px,#bf4a07 921px,#bf4a00 923px,#bf4400 997px)"></i><i style="top:340px;left:45px;width:1005px;background:linear-gradient(90deg,#00bfb4 -2px,#00bfaa 259px,#00bfa6 312px,#13bfa6 313px,#20bfa6 315px,#35bfa6 321px,#4dbfa7 333px,#68bfa9 355px,#95bfae 405px,#a8bfb2 444px,#b9bfb1 518px,#bfbdac 550px,#bfab94 601px,#bf9779 638px,#bf8962 660px,#bf663f 783px,#bf4f1e 892px,#bf490f 921px,#bf4705 928px,#bf4700 929px,#bf4100 1002px)"></i><i style="top:342px;left:46px;width:1009px;background:linear-gradient(90deg,#00bfb4 -2px,#00bfab 261px,#00bfa7 308px,#11bfa7 309px,#1fbfa7 311px,#32bfa8 316px,#4abfa8 327px,#65bfaa 347px,#95bfaf 401px,#a9bfb3 439px,#b8bfb4 502px,#bfbdae 546px,#bfac98 598px,#bf987c 636px,#bf8662 662px,#bf633f 789px,#bf4c1e 897px,#bf460e 927px,#bf4506 933px,#bf4400 935px,#bf3f00 1006px)"></i><i style="top:344px;left:47px;width:1013px;background:linear-gradient(90deg,#00bfb5 -2px,#00bfac 264px,#00bfa8 304px,#16bfa8 306px,#26bfa9 309px,#3bbfa9 316px,#54bfaa 330px,#70bfac 354px,#98bfb1 400px,#abbfb4 439px,#b9bfb5 504px,#bfbdb0 543px,#bfac9a 595px,#bf9880 634px,#bf8462 663px,#bf613e 793px,#bf491e 902px,#bf430e 932px,#bf4205 939px,#bf4200 940px,#bf3d00 1010px)"></i><i style="top:346px;left:48px;width:1018px;background:linear-gradient(90deg,#00bfb5 -2px,#00bfac 266px,#00bfaa 301px,#10bfaa 302px,#1fbfaa 304px,#32bfaa 309px,#4abfab 320px,#66bfac 340px,#98bfb2 395px,#abbfb5 433px,#b8bfb7 490px,#bfbdb2 539px,#bfad9d 592px,#bf9983 632px,#bf8262 665px,#bf5e3e 799px,#bf471e 908px,#bf400e 938px,#bf3f06 944px,#bf3f00 946px,#bf3a00 1015px)"></i><i style="top:348px;left:49px;width:1022px;background:linear-gradient(90deg,#00bfb6 -2px,#00bfad 269px,#00bfab 298px,#12bfab 299px,#20bfab 301px,#33bfab 306px,#4bbfac 317px,#67bfad 337px,#99bfb3 392px,#acbfb6 429px,#b9bfb8 483px,#bfbdb4 535px,#bfaea0 588px,#bf9986 630px,#bf8469 659px,#bf8062 666px,#bf5b3e 803px,#bf441e 913px,#bf3e0e 943px,#bf3c05 950px,#bf3c00 951px,#bf3800 1019px)"></i><i style="top:350px;left:50px;width:1026px;background:linear-gradient(90deg,#00bfb6 -2px,#00bfae 272px,#00bfac 295px,#12bfac 296px,#20bfac 298px,#33bfad 303px,#4cbfad 314px,#67bfaf 334px,#9abfb4 389px,#adbfb7 426px,#b9bfb9 478px,#bfbdb5 532px,#bfaea2 586px,#bf9a88 628px,#bf846c 658px,#bf7d63 667px,#bf593d 808px,#bf411e 918px,#bf3b0e 948px,#bf3906 955px,#bf3900 957px,#bf3500 1023px)"></i><i style="top:352px;left:51px;width:1030px;background:linear-gradient(90deg,#00bfb7 -2px,#00bfaf 276px,#00bfad 292px,#11bfad 293px,#20bfae 295px,#33bfae 300px,#4cbfaf 311px,#68bfb0 331px,#9abfb5 386px,#aebfb8 423px,#babfba 474px,#bfbdb6 529px,#bfafa4 583px,#bf9a8b 626px,#bf846e 657px,#bf7c63 667px,#bf563d 811px,#bf3e1e 923px,#bf380e 954px,#bf3604 961px,#bf3600 962px,#bf3200 1027px)"></i><i style="top:354px;left:52px;width:1034px;background:linear-gradient(90deg,#00bfb7 -2px,#00bfaf 280px,#00bfaf 289px,#17bfaf 291px,#28bfaf 294px,#3dbfaf 301px,#57bfb0 315px,#74bfb1 339px,#9ebfb6 387px,#b1bfb9 425px,#bbbfbb 478px,#bfbdb7 527px,#bfafa6 581px,#bf9a8c 625px,#bf836f 657px,#bf7a63 668px,#bf533d 817px,#bf3b1d 929px,#bf350e 959px,#bf3306 966px,#bf3301 967px,#bf2f00 1031px)"></i><i style="top:356px;left:52px;width:1041px;background:linear-gradient(90deg,#00bfb8 -2px,#00bfb0 285px,#00bfb0 288px,#13bfb0 289px,#21bfb0 291px,#34bfb0 296px,#4dbfb1 307px,#69bfb2 327px,#9cbfb6 382px,#b0bfba 418px,#bbbfbc 466px,#bfbdb9 524px,#bfb0a8 578px,#bf9b8f 623px,#bf8372 656px,#bf7863 670px,#bf513c 824px,#bf381d 935px,#bf310e 966px,#bf3004 973px,#bf3000 974px,#bf2c00 1038px)"></i><i style="top:358px;left:53px;width:1045px;background:linear-gradient(90deg,#00bfb8 -2px,#00bfb1 285px,#17bfb1 287px,#28bfb1 290px,#3dbfb2 297px,#58bfb2 311px,#75bfb4 335px,#9fbfb7 382px,#b2bfba 419px,#bcbfbd 468px,#bfbdb9 522px,#bfb0aa 576px,#bf9b91 621px,#bf8374 655px,#bf7664 670px,#bf4e3c 828px,#bf351d 940px,#bf2e0e 971px,#bf2c05 978px,#bf2c00 979px,#bf2800 1042px)"></i><i style="top:360px;left:54px;width:1048px;background:linear-gradient(90deg,#00bfb9 -2px,#00bfb2 283px,#0fbfb2 284px,#1fbfb2 286px,#33bfb3 291px,#4bbfb3 301px,#67bfb4 320px,#9abfb8 372px,#afbfba 407px,#bbbfbd 451px,#bfbebb 517px,#bfb1ac 572px,#bf9c94 618px,#bf8377 653px,#bf7464 670px,#bf4b3c 833px,#bf321d 945px,#bf2a0d 977px,#bf2906 983px,#bf2800 985px,#bf2500 1045px)"></i><i style="top:362px;left:55px;width:1052px;background:linear-gradient(90deg,#00bfb9 -2px,#00bfb4 281px,#11bfb4 282px,#20bfb4 284px,#34bfb4 289px,#4dbfb4 300px,#6abfb5 320px,#9dbfb9 374px,#b1bfbb 410px,#bcbfbe 455px,#bfbdbb 516px,#bfb1ac 571px,#bf9b94 618px,#bf8277 653px,#bf7265 670px,#bf483b 840px,#bf2f1d 951px,#bf260e 982px,#bf2405 989px,#bf2400 990px,#bf2100 1049px)"></i><i style="top:364px;left:56px;width:1057px;background:linear-gradient(90deg,#00bfba -2px,#00bfb5 279px,#10bfb5 280px,#20bfb5 282px,#34bfb5 287px,#4bbfb6 297px,#68bfb6 316px,#9dbfb9 370px,#b1bfbc 405px,#bcbfbe 449px,#bfbdbc 514px,#bfb1ad 569px,#bf9c96 616px,#bf827a 651px,#bf7065 670px,#bf443a 848px,#bf2b1d 957px,#bf220d 988px,#bf2006 994px,#bf1f00 996px,#bf1c00 1054px)"></i><i style="top:366px;left:57px;width:1061px;background:linear-gradient(90deg,#00bfba -2px,#00bfb6 277px,#0ebfb6 278px,#18bfb6 279px,#29bfb6 282px,#3ebfb7 289px,#59bfb7 303px,#76bfb8 327px,#a0bfba 372px,#b3bfbd 408px,#bdbfbe 453px,#bfbdbc 515px,#bfb1ae 569px,#bf9b96 616px,#bf8079 652px,#bf6f66 670px,#bf4038 859px,#bf261c 964px,#bf1c0d 994px,#bf1a05 1000px,#bf1a00 1001px,#bf1600 1058px)"></i><i style="top:368px;left:58px;width:1065px;background:linear-gradient(90deg,#00bfbb -2px,#00bfb7 275px,#07bfb7 276px,#15bfb7 277px,#27bfb8 280px,#3dbfb8 287px,#58bfb8 301px,#76bfb9 325px,#a0bfbb 369px,#b3bfbd 405px,#bebfbf 450px,#bfbdbc 514px,#bfb0ae 568px,#bf9a97 615px,#bf7f7a 651px,#bf6d66 670px,#bf3934 880px,#bf201a 974px,#bf160c 1000px,#bf1306 1005px,#bf1200 1007px,#bf0e00 1062px)"></i><i style="top:370px;left:59px;width:1069px;background:linear-gradient(90deg,#00bfbb -2px,#00bfb9 274px,#11bfb9 275px,#20bfb9 277px,#34bfb9 282px,#4cbfb9 292px,#68bfba 311px,#9dbfbc 363px,#b1bfbd 397px,#bdbfbf 440px,#bfbdbd 511px,#bfb1af 565px,#bf9a98 613px,#bf7f7c 649px,#bf6b67 669px,#bf2221 959px,#bf1011 999px,#bf0709 1008px,#bf0007 1010px,#bf000d 1066px)"></i><i style="top:372px;left:60px;width:1074px;background:linear-gradient(90deg,#00bfbc -2px,#00bfba 272px,#04bfba 273px,#15bfba 274px,#27bfba 277px,#3ebfba 284px,#59bfbb 298px,#76bfbb 322px,#9fbfbd 364px,#b3bfbe 399px,#bebfbf 442px,#bfbdbc 513px,#bfb0ae 567px,#bf9997 614px,#bf7d7b 650px,#bf6a67 669px,#bf2225 949px,#bf1018 989px,#bf0714 998px,#bf0013 1000px,#bf0016 1071px)"></i><i style="top:374px;left:61px;width:1078px;background:linear-gradient(90deg,#00bfbc -2px,#00bfbb 271px,#17bfbb 273px,#28bfbb 276px,#3ebfbc 283px,#59bfbc 297px,#77bfbc 321px,#9ebfbd 361px,#b2bfbe 395px,#bebfbf 438px,#bfbdbd 512px,#bfafaf 566px,#bf9898 613px,#bf7c7b 649px,#bf6868 668px,#bf2229 939px,#bf111e 978px,#bf071b 988px,#bf001a 990px,#bf001b 1075px)"></i><i style="top:376px;left:62px;width:1082px;background:linear-gradient(90deg,#00bfbd -2px,#00bfbd 270px,#0ebfbd 271px,#18bfbd 272px,#29bfbd 275px,#3fbfbd 282px,#59bfbd 296px,#77bfbd 320px,#9dbfbe 358px,#b2bfbf 392px,#bdbfbf 434px,#bfbcbc 512px,#bfafaf 566px,#bf9797 613px,#bf7a7b 649px,#bf6668 667px,#bf2d35 893px,#bf1725 958px,#bf0a20 976px,#bf041f 979px,#bf001f 980px,#bf001f 1079px)"></i><i style="top:378px;left:63px;width:1086px;background:linear-gradient(90deg,#00bfbe -2px,#00bfbe 269px,#0ebfbe 270px,#19bfbe 271px,#29bfbe 274px,#3fbfbe 281px,#59bfbe 295px,#77bfbf 319px,#9dbfbf 356px,#b2bfbf 390px,#bdbfbf 432px,#bfbcbd 510px,#bfaeaf 564px,#bf9798 611px,#bf7b7d 646px,#bf6569 666px,#bf2e38 880px,#bf1829 947px,#bf0a24 966px,#bf0424 969px,#bf0023 970px,#bf0023 1083px)"></i><i style="top:380px;left:64px;width:1090px;background:linear-gradient(90deg,#00bfbe -2px,#00bfbf 268px,#17bfbf 270px,#28bfbf 273px,#3ebfbf 280px,#59bfbf 294px,#77bfbf 318px,#9bbfbf 352px,#b0bfbf 385px,#bdbfbf 426px,#bfbdbd 506px,#bfafb0 560px,#bf989a 607px,#bf7b7f 643px,#bf636a 665px,#bf2e3b 872px,#bf182d 937px,#bf0a28 956px,#bf0427 959px,#bf0027 960px,#bf0026 1087px)"></i><i style="top:382px;left:65px;width:1094px;background:linear-gradient(90deg,#00bfbf -2px,#00bebf 267px,#05bebf 268px,#15bebf 269px,#27bebf 272px,#3ebebf 279px,#59bdbf 293px,#76bdbf 317px,#99bebf 349px,#afbebf 382px,#bcbfbf 423px,#bfbebe 493px,#bfb2b4 548px,#bf9c9f 597px,#bf8186 635px,#bf626a 664px,#bf2d3d 867px,#bf1730 928px,#bf0a2c 946px,#bf042b 949px,#bf002b 950px,#bf0029 1091px)"></i><i style="top:384px;left:66px;width:1099px;background:linear-gradient(90deg,#00bfbf -2px,#00bcbf 267px,#11bcbf 268px,#20bcbf 270px,#34bcbf 275px,#4ebcbf 286px,#6bbcbf 306px,#98bdbf 347px,#aebdbf 379px,#bcbebf 420px,#bfbebf 484px,#bfb4b6 539px,#bf9fa3 589px,#bf848a 629px,#bf606b 662px,#bf2d3f 859px,#bf1733 919px,#bf0a2f 936px,#bf042e 939px,#bf002e 940px,#bf002b 1096px)"></i><i style="top:386px;left:68px;width:1101px;background:linear-gradient(90deg,#00bebf -2px,#00bbbf 265px,#07bbbf 266px,#16bbbf 267px,#27bbbf 270px,#3ebbbf 277px,#58bbbf 291px,#76bbbf 315px,#95bcbf 341px,#abbdbf 372px,#babebf 412px,#bfbfbf 468px,#bfb7b9 525px,#bfa4a8 576px,#bf8a90 618px,#bf6d77 648px,#bf5f6c 659px,#bf2c41 852px,#bf1635 909px,#bf0a32 925px,#bf0431 928px,#bf0031 929px,#bf002e 1098px)"></i><i style="top:388px;left:69px;width:1106px;background:linear-gradient(90deg,#00bebf -2px,#00b9bf 265px,#0eb9bf 266px,#18b9bf 267px,#29b9bf 270px,#3eb9bf 277px,#59b9bf 291px,#92babf 337px,#a9bcbf 368px,#b9bdbf 407px,#bfbfbf 462px,#bfb7b9 520px,#bfa5a9 572px,#bf8b92 614px,#bf6e7a 644px,#bf5d6c 658px,#bf2a42 849px,#bf1538 901px,#bf0835 916px,#bf0034 919px,#bf0030 1103px)"></i><i style="top:390px;left:70px;width:1111px;background:linear-gradient(90deg,#00bdbf -2px,#00b8bf 265px,#11b8bf 266px,#20b8bf 268px,#34b8bf 273px,#4db8bf 284px,#6ab8bf 304px,#92b9bf 337px,#a9bbbf 368px,#b9bdbf 408px,#bfbebf 465px,#bfb5b8 523px,#bfa2a8 574px,#bf8891 615px,#bf6b79 644px,#bf5c6d 656px,#bf2944 844px,#bf143a 893px,#bf0838 906px,#bf0037 909px,#bf0032 1108px)"></i><i style="top:392px;left:71px;width:1113px;background:linear-gradient(90deg,#00bdbf -2px,#00b6bf 265px,#11b6bf 266px,#20b6bf 268px,#34b6bf 273px,#4db6bf 284px,#6ab6bf 304px,#8fb8bf 333px,#a7babf 363px,#b7bcbf 402px,#bfbebf 458px,#bfb6b9 518px,#bfa3a9 569px,#bf8893 611px,#bf6b7b 641px,#bf5b6e 654px,#bf2745 839px,#bf143d 884px,#bf083a 896px,#bf003a 899px,#bf0034 1110px)"></i><i style="top:394px;left:72px;width:1118px;background:linear-gradient(90deg,#00bcbf -2px,#00b5bf 262px,#00b4bf 265px,#10b4bf 266px,#20b4bf 268px,#33b4bf 273px,#4bb5bf 283px,#67b5bf 302px,#8cb7bf 330px,#a4b9bf 359px,#b6bbbf 397px,#bfbdbf 450px,#bfb7ba 509px,#bfa5ab 561px,#bf8b96 604px,#bf6e7f 635px,#bf596f 652px,#bf2547 835px,#bf123f 876px,#bf083d 886px,#bf003c 889px,#bf0035 1115px)"></i><i style="top:396px;left:73px;width:1123px;background:linear-gradient(90deg,#00bbbf -2px,#00b4bf 254px,#00b3bf 265px,#17b3bf 267px,#28b3bf 270px,#3db3bf 277px,#58b3bf 291px,#88b5bf 326px,#a1b7bf 354px,#b3babf 391px,#bebcbf 442px,#bfb7bb 500px,#bfa7ad 553px,#bf8e99 597px,#bf7283 629px,#bf5870 649px,#bf2449 828px,#bf1241 867px,#bf083f 876px,#bf003f 879px,#bf0037 1120px)"></i><i style="top:398px;left:74px;width:1127px;background:linear-gradient(90deg,#00bbbf -2px,#00b3bf 245px,#00b1bf 266px,#14b1bf 267px,#21b1bf 269px,#34b1bf 274px,#4db1bf 285px,#84b4bf 322px,#9db6bf 349px,#b1b9bf 385px,#bdbcbf 434px,#bfb8bc 487px,#bfaab1 541px,#bf929e 587px,#bf7788 621px,#bf5a73 644px,#bf5670 650px,#bf244b 821px,#bf1244 857px,#bf0842 866px,#bf0042 869px,#bf0038 1124px)"></i><i style="top:400px;left:75px;width:1131px;background:linear-gradient(90deg,#00babf -2px,#00b2bf 238px,#00afbf 266px,#18afbf 268px,#28afbf 271px,#3dafbf 278px,#57b0bf 292px,#82b2bf 320px,#9cb5bf 347px,#b0b8bf 383px,#bcbbbf 432px,#bfb8bc 482px,#bfaab1 537px,#bf929f 583px,#bf7689 618px,#bf5974 641px,#bf5571 646px,#bf234d 812px,#bf1146 848px,#bf0644 857px,#bf0044 858px,#bf003a 1128px)"></i><i style="top:402px;left:76px;width:1135px;background:linear-gradient(90deg,#00b9bf -2px,#00b1bf 231px,#00adbf 267px,#11adbf 268px,#20adbf 270px,#33adbf 275px,#4caebf 286px,#7db0bf 316px,#97b3bf 341px,#acb6bf 375px,#bab9bf 421px,#bfb8bd 471px,#bfabb3 528px,#bf95a1 575px,#bf798c 611px,#bf5d79 635px,#bf5473 642px,#bf234f 803px,#bf1148 838px,#bf0847 846px,#bf0647 847px,#bf0046 848px,#bf003b 1132px)"></i><i style="top:404px;left:77px;width:1140px;background:linear-gradient(90deg,#00b9bf -2px,#00b0bf 225px,#00abbf 268px,#13abbf 269px,#20abbf 271px,#33acbf 276px,#4cacbf 287px,#77aebf 312px,#92b1bf 336px,#a9b5bf 369px,#b8b8bf 413px,#bfb7be 466px,#bfaab3 524px,#bf95a2 571px,#bf798e 607px,#bf5d7a 631px,#bf5274 639px,#bf2351 793px,#bf114b 828px,#bf0849 836px,#bf0649 837px,#bf0049 838px,#bf003c 1137px)"></i><i style="top:406px;left:78px;width:1144px;background:linear-gradient(90deg,#00b8bf -2px,#00afbf 219px,#00a9bf 269px,#13a9bf 270px,#20a9bf 272px,#33aabf 277px,#4baabf 288px,#70acbf 307px,#8cafbf 329px,#a3b2bf 360px,#b5b6bf 402px,#bfb7be 461px,#bfaab3 520px,#bf94a2 568px,#bf788e 604px,#bf5c7b 628px,#bf5175 636px,#bf2354 784px,#bf114d 818px,#bf084c 826px,#bf004b 828px,#bf003e 1141px)"></i><i style="top:408px;left:80px;width:1147px;background:linear-gradient(90deg,#00b7bf -2px,#00aebf 213px,#00a7bf 269px,#10a7bf 270px,#1fa7bf 272px,#32a7bf 277px,#66a9bf 300px,#81acbf 319px,#9bb0bf 347px,#b0b4bf 385px,#beb6bf 443px,#bfadb6 502px,#bf99a7 552px,#bf7f94 591px,#bf6381 618px,#bf5076 632px,#bf2356 774px,#bf114f 807px,#bf084e 815px,#bf004e 817px,#bf003f 1134px,#bf003f 1144px)"></i><i style="top:410px;left:81px;width:1152px;background:linear-gradient(90deg,#00b7bf -2px,#00adbf 208px,#00a5bf 270px,#16a5bf 272px,#26a5bf 275px,#3ba5bf 282px,#62a7bf 298px,#7eaabf 316px,#98aebf 343px,#adb2bf 380px,#bcb5bf 435px,#bfb2bc 470px,#bfa2af 526px,#bf8b9e 571px,#bf6f8a 604px,#bf5379 625px,#bf4e76 630px,#bf2358 765px,#bf1152 797px,#bf0850 805px,#bf0050 807px,#bf0041 1111px,#bf0040 1149px)"></i><i style="top:412px;left:82px;width:1155px;background:linear-gradient(90deg,#00b6bf -2px,#00acbf 203px,#00a3bf 272px,#11a3bf 273px,#1fa3bf 275px,#32a3bf 280px,#57a4bf 293px,#72a7bf 308px,#8daabf 331px,#a5afbf 364px,#b7b3bf 410px,#bfb2be 457px,#bfa3b1 517px,#bf8da0 563px,#bf718d 597px,#bf567c 619px,#bf4d78 625px,#bf235a 756px,#bf1254 787px,#bf0853 795px,#bf0052 797px,#bf0043 1089px,#bf0041 1152px)"></i><i style="top:414px;left:83px;width:1160px;background:linear-gradient(90deg,#00b5bf -2px,#00abbf 198px,#00a0bf 273px,#04a0bf 274px,#14a0bf 275px,#25a0bf 278px,#47a1bf 287px,#61a3bf 298px,#7da6bf 316px,#97aabf 343px,#acafbf 380px,#bdb2bf 439px,#bfa9b6 492px,#bf95a8 542px,#bf7b95 581px,#bf5f83 608px,#bf4c79 621px,#bf235c 747px,#bf1156 778px,#bf0855 785px,#bf0055 787px,#bf0045 1068px,#bf0042 1157px)"></i><i style="top:416px;left:84px;width:1164px;background:linear-gradient(90deg,#00b5bf -2px,#00aabf 194px,#009ebf 275px,#079dbf 276px,#149dbf 277px,#2f9ebf 281px,#469fbf 287px,#60a1bf 298px,#7ca4bf 316px,#96a8bf 343px,#acadbf 381px,#bfb0bf 444px,#bfa2b2 505px,#bf8ca2 552px,#bf7190 587px,#bf5680 610px,#bf4b7a 617px,#bf235f 737px,#bf1159 768px,#bf0857 775px,#bf0057 777px,#bf0047 1047px,#bf0043 1161px)"></i><i style="top:418px;left:85px;width:1169px;background:linear-gradient(90deg,#00b4bf -2px,#00a9bf 189px,#009bbf 275px,#149bbf 277px,#2e9cbf 281px,#469dbf 287px,#609fbf 298px,#7ba2bf 316px,#95a7bf 343px,#ababbf 381px,#bfaebf 446px,#bf9eb0 509px,#bf87a0 554px,#bf6c8e 587px,#bf517f 608px,#bf4a7c 613px,#bf2361 728px,#bf115b 758px,#bf085a 765px,#bf0059 767px,#bf0049 1028px,#bf0044 1166px)"></i><i style="top:420px;left:87px;width:1167px;background:linear-gradient(90deg,#00b3bf -2px,#00a8bf 185px,#009abf 270px,#0099bf 272px,#1099bf 273px,#1f99bf 276px,#2d99bf 280px,#449abf 286px,#5f9dbf 297px,#7aa0bf 315px,#95a4bf 342px,#aba9bf 380px,#bfabbf 445px,#bf9baf 507px,#bf849f 551px,#bf6a8e 583px,#bf497d 608px,#bf2263 719px,#bf115d 747px,#bf085c 754px,#bf005b 756px,#bf004b 1007px,#bf0045 1164px)"></i><i style="top:422px;left:88px;width:1155px;background:linear-gradient(90deg,#00b2bf -2px,#00a7bf 181px,#0099bf 265px,#0098bf 269px,#0c98bf 270px,#1997bf 272px,#2c97bf 278px,#3997bf 283px,#5199bf 291px,#6c9cbf 305px,#87a0bf 327px,#9fa5bf 359px,#b4a9bf 406px,#bfa8be 449px,#bf97ae 509px,#bf7f9d 552px,#bf658d 582px,#bf487f 603px,#bf2265 709px,#bf1160 737px,#bf085e 744px,#bf005e 746px,#bf004d 989px,#bf0046 1152px)"></i><i style="top:424px;left:89px;width:1143px;background:linear-gradient(90deg,#00b2bf -2px,#00a6bf 177px,#0098bf 261px,#0096bf 267px,#1096bf 268px,#1f96bf 271px,#3395bf 279px,#4295bf 286px,#5b97bf 296px,#769bbf 313px,#919fbf 339px,#a8a5bf 377px,#bfa7bf 442px,#bf95ae 504px,#bf7e9e 547px,#bf648e 577px,#bf4780 598px,#bf2267 700px,#bf1162 727px,#bf0760 734px,#bf0060 736px,#bf004f 970px,#bf0048 1140px)"></i><i style="top:426px;left:90px;width:1131px;background:linear-gradient(90deg,#00b1bf -2px,#00a5bf 173px,#0096bf 257px,#0094bf 264px,#0c94bf 265px,#1994bf 267px,#2c94bf 273px,#4593bf 287px,#6395bf 301px,#7f9abf 321px,#999fbf 351px,#b0a4bf 395px,#bfa3be 446px,#bf91ad 505px,#bf7a9d 546px,#bf5f8d 575px,#bf4682 593px,#bf226a 691px,#bf1064 718px,#bf0763 724px,#bf0062 726px,#bf0051 952px,#bf0049 1128px)"></i><i style="top:428px;left:92px;width:1118px;background:linear-gradient(90deg,#00b0bf -2px,#00a4bf 169px,#0095bf 252px,#0293bf 261px,#1092bf 262px,#1f92bf 265px,#3392bf 273px,#5191bf 292px,#6d94bf 307px,#8899bf 330px,#a19ebf 364px,#b8a2bf 418px,#bfa0bd 445px,#bf8dac 503px,#bf769c 543px,#bf5b8d 571px,#bf4583 587px,#bf216c 681px,#bf1066 707px,#bf0765 713px,#bf0065 715px,#bf0053 933px,#bf004b 1115px)"></i><i style="top:430px;left:93px;width:1106px;background:linear-gradient(90deg,#00afbf -2px,#00a3bf 166px,#0094bf 248px,#0091bf 258px,#0c91bf 259px,#1991bf 261px,#2b90bf 267px,#448fbf 281px,#588ebf 296px,#7492bf 313px,#8f97bf 339px,#a89dbf 378px,#bf9ebf 440px,#bf8bac 499px,#bf739c 539px,#bf598e 566px,#bf4485 581px,#bf216e 672px,#bf1069 697px,#bf0767 703px,#bf0067 705px,#bf0055 916px,#bf004c 1103px)"></i><i style="top:432px;left:94px;width:1093px;background:linear-gradient(90deg,#00afbf -2px,#00a2bf 163px,#0093bf 244px,#008fbf 255px,#048fbf 256px,#118fbf 257px,#1f8fbf 260px,#338ebf 268px,#4e8dbf 286px,#5f8cbf 300px,#7a90bf 319px,#9596bf 348px,#ae9bbf 392px,#bf9abe 441px,#bf86ab 499px,#bf6f9c 537px,#bf548e 563px,#bf4487 575px,#bf2170 663px,#bf106b 687px,#bf076a 693px,#bf0069 695px,#bf0057 899px,#bf004e 1090px)"></i><i style="top:434px;left:95px;width:1081px;background:linear-gradient(90deg,#00aebf -2px,#00a1bf 160px,#0092bf 240px,#008ebf 253px,#0c8dbf 254px,#198dbf 256px,#2b8dbf 262px,#448cbf 276px,#678abf 306px,#838fbf 328px,#9d94bf 361px,#b798bf 415px,#bf96be 441px,#bf82aa 497px,#bf6a9b 534px,#bf528f 558px,#bf4389 568px,#bf2173 654px,#bf116d 677px,#bf076c 683px,#bf006c 685px,#bf0059 882px,#bf004f 1078px)"></i><i style="top:436px;left:97px;width:1068px;background:linear-gradient(90deg,#00adbf -2px,#00a0bf 156px,#0090bf 236px,#008cbf 249px,#058cbf 250px,#118cbf 251px,#1f8bbf 254px,#328bbf 262px,#4d89bf 280px,#6f88bf 311px,#8a8dbf 336px,#a493bf 374px,#bf93bf 435px,#bf7fab 492px,#bf689c 528px,#bf4e90 552px,#bf438b 561px,#bf2075 644px,#bf0f70 667px,#bf076f 672px,#bf026e 673px,#bf006c 691px,#bf0059 895px,#bf0050 1065px)"></i><i style="top:438px;left:98px;width:1056px;background:linear-gradient(90deg,#00acbf -2px,#009fbf 153px,#008fbf 232px,#008abf 247px,#0d8abf 248px,#198abf 250px,#2b89bf 256px,#4388bf 270px,#6385bf 299px,#7585bf 317px,#918bbf 345px,#ab90bf 388px,#bf8ebe 437px,#bf79aa 491px,#bf629b 526px,#bf4990 548px,#bf428d 554px,#bf2177 634px,#bf1072 657px,#bf0771 662px,#bf0071 663px,#bf005e 847px,#bf0052 1053px)"></i><i style="top:440px;left:99px;width:1044px;background:linear-gradient(90deg,#00abbf -2px,#009ebf 151px,#008ebf 229px,#0089bf 244px,#0688bf 245px,#1188bf 246px,#1f88bf 249px,#3287bf 257px,#4c86bf 275px,#6f82bf 311px,#8685bf 334px,#a28abf 371px,#bf8bbf 432px,#bf76ab 486px,#bf5f9c 520px,#bf428f 546px,#bf207a 625px,#bf1074 647px,#bf0773 652px,#bf0073 653px,#bf0060 831px,#bf0053 1041px)"></i><i style="top:442px;left:100px;width:1032px;background:linear-gradient(90deg,#00abbf -2px,#009dbf 148px,#008dbf 225px,#0087bf 242px,#0d87bf 243px,#1987bf 245px,#2b86bf 251px,#4385bf 265px,#6282bf 294px,#8180bf 330px,#9d85bf 364px,#bc87bf 425px,#bf83bc 440px,#bf6ea8 489px,#bf569b 520px,#bf4392 537px,#bf217c 615px,#bf1077 637px,#bf0776 642px,#bf0076 643px,#bf0062 815px,#bf0055 1029px)"></i><i style="top:444px;left:102px;width:1019px;background:linear-gradient(90deg,#00aabf -2px,#009cbf 145px,#008cbf 221px,#0085bf 238px,#0785bf 239px,#1185bf 240px,#2285bf 244px,#3784bf 254px,#5482bf 276px,#797dbf 318px,#8a7dbf 340px,#a782bf 381px,#bf80be 432px,#bf6aa9 482px,#bf539c 512px,#bf4396 526px,#bf217f 604px,#bf1079 626px,#bf0678 631px,#bf0078 632px,#bf0064 798px,#bf0056 1016px)"></i><i style="top:446px;left:103px;width:1007px;background:linear-gradient(90deg,#00a9bf -2px,#009bbf 142px,#008abf 218px,#0084bf 236px,#0d83bf 237px,#1983bf 239px,#2a83bf 245px,#4281bf 259px,#627ebf 288px,#8f79bf 346px,#ac7dbf 391px,#bf7abe 432px,#bf64a9 479px,#bf4d9d 507px,#bf4499 516px,#bf2182 594px,#bf107c 616px,#bf067b 621px,#bf007b 622px,#bf0066 782px,#bf0057 1004px)"></i><i style="top:448px;left:105px;width:994px;background:linear-gradient(90deg,#00a8bf -2px,#009abf 139px,#0089bf 214px,#0082bf 232px,#1182bf 234px,#2181bf 238px,#3780bf 248px,#537ebf 270px,#7879bf 312px,#9675bf 356px,#b777bf 410px,#bf74be 430px,#bf5daa 475px,#bf469d 503px,#bf2184 583px,#bf117f 604px,#bf067d 610px,#bf007d 611px,#bf0069 766px,#bf0059 991px)"></i><i style="top:450px;left:106px;width:982px;background:linear-gradient(90deg,#00a7bf -2px,#0099bf 137px,#0088bf 211px,#0080bf 230px,#0e80bf 231px,#1d80bf 234px,#307fbf 242px,#4b7dbf 260px,#6d79bf 296px,#a071bf 370px,#bd6fbf 422px,#bf67b7 442px,#bf50a7 478px,#bf47a1 491px,#bf2287 573px,#bf1182 594px,#bf0680 600px,#bf0080 601px,#bf006b 751px,#bf005a 979px)"></i><i style="top:452px;left:108px;width:969px;background:linear-gradient(90deg,#00a6bf -2px,#0098bf 134px,#0086bf 207px,#007fbf 226px,#117ebf 228px,#217ebf 232px,#367dbf 242px,#537bbf 264px,#7775bf 306px,#ad6abf 391px,#bf65be 427px,#bf4aa6 477px,#bf238a 561px,#bf1184 583px,#bf0983 588px,#bf0082 590px,#bf006d 735px,#bf005c 966px)"></i><i style="top:454px;left:109px;width:956px;background:linear-gradient(90deg,#00a5bf -2px,#0097bf 131px,#0085bf 203px,#007dbf 224px,#0e7dbf 225px,#1d7cbf 228px,#307cbf 236px,#4a7abf 254px,#6c75bf 290px,#9a6bbf 358px,#bf5ebe 425px,#bf3d9e 498px,#bf1f8b 558px,#bf0f86 575px,#bf0685 579px,#bf0085 580px,#bf0070 720px,#bf005d 953px)"></i><i style="top:456px;left:111px;width:943px;background:linear-gradient(90deg,#00a5bf -2px,#0096bf 129px,#0084bf 200px,#007cbf 220px,#117bbf 222px,#217bbf 226px,#367abf 236px,#5277bf 258px,#7772bf 301px,#aa64bf 383px,#bf5bbe 424px,#bf399e 498px,#bf1d8d 549px,#bf0f89 564px,#bf0688 568px,#bf0088 569px,#bf0072 704px,#bf005f 932px,#bf005f 940px)"></i><i style="top:458px;left:112px;width:931px;background:linear-gradient(90deg,#00a4bf -2px,#0095bf 126px,#0082bf 197px,#007abf 218px,#0e79bf 219px,#1c79bf 222px,#3078bf 230px,#4a76bf 248px,#6b72bf 284px,#9967bf 352px,#bf58be 423px,#bf359e 497px,#bf1b8f 542px,#bf0d8c 555px,#bf058b 558px,#bf008b 559px,#bf0075 689px,#bf0061 907px,#bf0060 928px)"></i><i style="top:460px;left:114px;width:918px;background:linear-gradient(90deg,#00a3bf -2px,#0093bf 124px,#0081bf 193px,#0078bf 214px,#1178bf 216px,#2177bf 220px,#3676bf 230px,#5174bf 252px,#766ebf 295px,#a960bf 377px,#bf55be 421px,#bf319e 496px,#bf1992 534px,#bf0b8e 545px,#bf008d 548px,#bf0078 673px,#bf0064 882px,#bf0061 915px)"></i><i style="top:462px;left:115px;width:906px;background:linear-gradient(90deg,#00a2bf -2px,#0092bf 121px,#0080bf 190px,#0076bf 212px,#0e76bf 213px,#1c76bf 216px,#3075bf 224px,#4973bf 242px,#6a6ebf 278px,#9863bf 346px,#bf52be 420px,#bf2d9e 495px,#bf1794 526px,#bf0b91 535px,#bf0090 538px,#bf007a 659px,#bf0066 859px,#bf0063 903px)"></i><i style="top:464px;left:116px;width:894px;background:linear-gradient(90deg,#00a1bf -2px,#0091bf 119px,#007fbf 187px,#0075bf 209px,#1274bf 211px,#2174bf 215px,#3773bf 226px,#5370bf 249px,#7869bf 294px,#ac59bf 380px,#bf4fbe 419px,#bf279e 495px,#bf1496 519px,#bf0994 526px,#bf0093 528px,#bf007d 645px,#bf0068 837px,#bf0064 891px)"></i><i style="top:466px;left:118px;width:881px;background:linear-gradient(90deg,#00a0bf -2px,#0090bf 117px,#007dbf 184px,#0073bf 206px,#0e73bf 207px,#1c72bf 210px,#2f72bf 218px,#4a6fbf 237px,#6b6abf 274px,#995ebf 344px,#bf4bbe 417px,#bf239e 492px,#bf1198 511px,#bf0997 515px,#bf0096 517px,#bf0080 629px,#bf006b 812px,#bf0066 878px)"></i><i style="top:468px;left:119px;width:869px;background:linear-gradient(90deg,#009fbf -2px,#008fbf 115px,#007cbf 181px,#0072bf 203px,#1271bf 205px,#2171bf 209px,#376fbf 220px,#526cbf 243px,#7765bf 288px,#ab54bf 374px,#bf48be 416px,#bf22a2 483px,#bf119b 501px,#bf099a 505px,#bf0099 507px,#bf0082 615px,#bf006d 791px,#bf0067 866px)"></i><i style="top:470px;left:121px;width:856px;background:linear-gradient(90deg,#009ebf -2px,#008ebf 112px,#007bbf 177px,#0070bf 200px,#0f6fbf 201px,#1c6fbf 204px,#316ebf 213px,#4b6bbf 233px,#6d65bf 272px,#9c57bf 346px,#bf44be 414px,#bf21a4 474px,#bf119f 490px,#bf099d 494px,#bf009d 496px,#bf0085 600px,#bf0070 768px,#bf0069 853px)"></i><i style="top:472px;left:122px;width:844px;background:linear-gradient(90deg,#009dbf -2px,#008dbf 110px,#0079bf 174px,#006ebf 197px,#126ebf 199px,#216dbf 203px,#366cbf 214px,#5368bf 238px,#7761bf 284px,#ab4ebf 372px,#bf40be 413px,#bf20a7 466px,#bf0fa2 481px,#bf08a1 484px,#bf00a0 486px,#bf0088 586px,#bf0073 747px,#bf006a 841px)"></i><i style="top:474px;left:124px;width:830px;background:linear-gradient(90deg,#009cbf -2px,#008bbf 108px,#0078bf 171px,#006cbf 194px,#0f6cbf 195px,#1c6cbf 198px,#316bbf 207px,#4b68bf 227px,#6d62bf 266px,#9b53bf 340px,#bf3dbe 410px,#bf1faa 457px,#bf10a5 470px,#bf08a4 473px,#bf02a4 474px,#bf00a3 477px,#bf008b 574px,#bf0075 729px,#bf006c 827px)"></i><i style="top:476px;left:126px;width:817px;background:linear-gradient(90deg,#009bbf -2px,#008abf 106px,#0076bf 168px,#006bbf 190px,#0b6abf 191px,#176abf 193px,#2869bf 199px,#4067bf 214px,#5f63bf 245px,#8858bf 304px,#b641bf 389px,#bf38be 410px,#bf1cac 449px,#bf0ea8 460px,#bf08a7 462px,#bf01a7 463px,#bf008f 555px,#bf0079 701px,#bf006e 814px)"></i><i style="top:478px;left:127px;width:805px;background:linear-gradient(90deg,#009abf -2px,#0089bf 104px,#0075bf 165px,#0069bf 188px,#0f69bf 189px,#1c68bf 192px,#3067bf 201px,#4a64bf 221px,#6d5dbf 261px,#9b4dbf 336px,#bd37bf 402px,#bf1db1 438px,#bf0eac 450px,#bf08ab 452px,#bf00ab 453px,#bf0092 541px,#bf007c 680px,#bf006f 802px)"></i><i style="top:480px;left:129px;width:792px;background:linear-gradient(90deg,#0099bf -2px,#0087bf 101px,#0074bf 161px,#0067bf 184px,#0b67bf 185px,#1767bf 187px,#2866bf 193px,#3f64bf 208px,#5e5fbf 239px,#8753bf 298px,#b23cbf 377px,#bf2ebe 407px,#bf17b2 433px,#bf0baf 440px,#bf08af 441px,#bf00ae 442px,#bf0096 526px,#bf007f 658px,#bf0071 789px)"></i><i style="top:482px;left:131px;width:779px;background:linear-gradient(90deg,#0097bf -2px,#0086bf 99px,#0072bf 158px,#0066bf 180px,#0365bf 181px,#0f65bf 182px,#1f65bf 186px,#3363bf 196px,#4e60bf 218px,#7158bf 261px,#a144bf 343px,#bc2ebf 396px,#bf24bb 410px,#bf12b4 426px,#bf08b2 430px,#bf00b2 431px,#bf0099 512px,#bf0082 638px,#bf0073 776px)"></i><i style="top:484px;left:133px;width:766px;background:linear-gradient(90deg,#0096bf -2px,#0085bf 97px,#0070bf 155px,#0064bf 177px,#0b64bf 178px,#1763bf 180px,#2762bf 186px,#3f60bf 201px,#5d5bbf 232px,#864fbf 291px,#ad38bf 363px,#bf24bf 399px,#bf12b8 415px,#bf08b6 419px,#bf00b6 420px,#bf009d 497px,#bf0085 617px,#bf0074 763px)"></i><i style="top:486px;left:135px;width:753px;background:linear-gradient(90deg,#0095bf -2px,#0083bf 95px,#006fbf 152px,#0063bf 173px,#0462bf 174px,#0f62bf 175px,#1f61bf 179px,#3360bf 189px,#4e5cbf 211px,#7154bf 255px,#a13dbf 338px,#b828bf 382px,#bf17be 401px,#bf0bbb 407px,#bf08ba 408px,#bf00ba 409px,#bf00a0 483px,#bf0089 597px,#bf0076 750px)"></i><i style="top:488px;left:136px;width:741px;background:linear-gradient(90deg,#0094bf -2px,#0082bf 93px,#006dbf 149px,#0061bf 171px,#0c60bf 172px,#1760bf 174px,#295fbf 181px,#415cbf 197px,#6056bf 230px,#8a48bf 293px,#ab31bf 355px,#b91ebf 384px,#be10bf 395px,#bf08bf 398px,#bf00be 399px,#bf00a4 469px,#bf008c 577px,#bf0078 738px)"></i><i style="top:490px;left:138px;width:728px;background:linear-gradient(90deg,#0093bf -2px,#0080bf 91px,#006cbf 146px,#005fbf 167px,#055ebf 168px,#0f5ebf 169px,#1f5ebf 173px,#345cbf 184px,#5058bf 208px,#734ebf 254px,#9f37bf 329px,#b223bf 367px,#b914bf 382px,#bb0bbf 386px,#bb07bf 387px,#bc00bf 388px,#bf00bc 401px,#bf00a2 475px,#bf008b 589px,#bf0079 725px)"></i><i style="top:492px;left:140px;width:715px;background:linear-gradient(90deg,#0092bf -2px,#007fbf 89px,#006abf 143px,#005dbf 164px,#0c5dbf 165px,#175cbf 167px,#295bbf 174px,#4158bf 190px,#5f52bf 223px,#8942bf 286px,#a62cbf 341px,#b21abf 366px,#b60ebf 374px,#b707bf 376px,#b800bf 377px,#bf00bd 397px,#bf00a3 471px,#bf008b 585px,#bf007b 712px)"></i><i style="top:494px;left:141px;width:703px;background:linear-gradient(90deg,#0090bf -2px,#007ebf 87px,#0069bf 140px,#005cbf 161px,#065bbf 162px,#0f5bbf 163px,#1f5abf 167px,#3458bf 178px,#5054bf 202px,#7349bf 249px,#9a33bf 317px,#ab1fbf 350px,#b112bf 362px,#b307bf 366px,#b300bf 367px,#bf00be 395px,#bf00a4 470px,#bf008c 585px,#bf007d 700px)"></i><i style="top:496px;left:143px;width:689px;background:linear-gradient(90deg,#008fbf -2px,#007cbf 85px,#0067bf 137px,#0059bf 158px,#0c59bf 159px,#1a58bf 162px,#2d57bf 170px,#4654bf 189px,#664bbf 227px,#9235bf 299px,#a522bf 336px,#ac13bf 350px,#ae0abf 354px,#af00bf 356px,#bf00be 393px,#bf00a4 469px,#bf008c 586px,#bf007f 686px)"></i><i style="top:498px;left:144px;width:677px;background:linear-gradient(90deg,#008ebf -2px,#007bbf 83px,#0066bf 134px,#0058bf 155px,#1057bf 157px,#1f56bf 161px,#3454bf 172px,#4f50bf 196px,#7344bf 243px,#962ebf 304px,#a41cbf 332px,#a90fbf 342px,#aa06bf 345px,#ab00bf 346px,#bf00be 392px,#bf00a4 469px,#bf008c 587px,#bf0080 674px)"></i><i style="top:500px;left:146px;width:664px;background:linear-gradient(90deg,#008dbf -2px,#0079bf 81px,#0064bf 131px,#0056bf 152px,#0c55bf 153px,#1a55bf 156px,#2e53bf 165px,#484fbf 185px,#6946bf 225px,#9030bf 290px,#9f1dbf 320px,#a50fbf 331px,#a606bf 334px,#a700bf 335px,#bf00be 390px,#bf00a4 468px,#bf008c 588px,#bf0082 661px)"></i><i style="top:502px;left:148px;width:651px;background:linear-gradient(90deg,#008bbf -2px,#0078bf 79px,#0062bf 128px,#0054bf 148px,#1053bf 150px,#1f53bf 154px,#3450bf 165px,#4f4bbf 189px,#723fbf 236px,#912abf 290px,#9d18bf 314px,#a10dbf 321px,#a200bf 324px,#bf00be 388px,#bf00a4 468px,#bf008c 590px,#bf0084 648px)"></i><i style="top:504px;left:150px;width:638px;background:linear-gradient(90deg,#008abf -2px,#0076bf 77px,#0060bf 125px,#0052bf 145px,#0c51bf 146px,#1a51bf 149px,#2e4fbf 158px,#474bbf 178px,#6841bf 218px,#8a2bbf 275px,#981abf 301px,#9d0cbf 310px,#9e00bf 313px,#bf00bf 385px,#bf00a5 465px,#bf008d 588px,#bf0086 635px)"></i><i style="top:506px;left:152px;width:625px;background:linear-gradient(90deg,#0088bf -2px,#0075bf 75px,#005fbf 122px,#0050bf 141px,#104fbf 143px,#1f4fbf 147px,#334cbf 158px,#4e47bf 182px,#713abf 229px,#8c25bf 275px,#9615bf 294px,#9909bf 300px,#9a00bf 302px,#bf00bf 382px,#bf00a5 463px,#bf008d 587px,#bf0088 622px)"></i><i style="top:508px;left:154px;width:612px;background:linear-gradient(90deg,#0087bf -2px,#0073bf 73px,#005dbf 118px,#004ebf 138px,#0d4ebf 139px,#1a4dbf 142px,#2e4bbf 151px,#4746bf 171px,#673bbf 211px,#8627bf 261px,#9116bf 282px,#9409bf 289px,#9500bf 291px,#bf00bf 378px,#bf00a3 468px,#bf008c 597px,#bf008a 609px)"></i><i style="top:510px;left:156px;width:599px;background:linear-gradient(90deg,#0085bf -2px,#0071bf 71px,#005bbf 115px,#004cbf 134px,#104bbf 136px,#1e4bbf 140px,#3348bf 151px,#4e42bf 175px,#7033bf 222px,#8720bf 260px,#8e12bf 274px,#9009bf 278px,#9100bf 280px,#ba00bf 364px,#bf00bd 383px,#bf00a3 469px,#bf008c 596px)"></i><i style="top:512px;left:158px;width:586px;background:linear-gradient(90deg,#0084bf -2px,#0070bf 69px,#005abf 112px,#004abf 131px,#0d4abf 132px,#1a49bf 135px,#2e47bf 144px,#4742bf 165px,#6935bf 207px,#8121bf 247px,#8a11bf 263px,#8c09bf 267px,#8c02bf 268px,#8d00bf 270px,#b600bf 352px,#bf00bd 380px,#bf00a3 467px,#bf008e 583px)"></i><i style="top:514px;left:160px;width:573px;background:linear-gradient(90deg,#0082bf -2px,#006ebf 67px,#0058bf 109px,#0048bf 127px,#1047bf 129px,#1e46bf 133px,#3344bf 144px,#4d3dbf 168px,#702cbf 216px,#8119bf 245px,#860ebf 254px,#8708bf 256px,#8801bf 257px,#af00bf 335px,#bf00be 377px,#bf00a4 464px,#bf0090 570px)"></i><i style="top:516px;left:162px;width:560px;background:linear-gradient(90deg,#0080bf -2px,#006cbf 65px,#0056bf 106px,#0046bf 124px,#0d45bf 125px,#1a45bf 128px,#2d42bf 137px,#473dbf 158px,#682ebf 200px,#7c1bbf 232px,#820dbf 243px,#8308bf 245px,#8300bf 246px,#aa00bf 321px,#bf00be 375px,#bf00a4 464px,#bf0092 557px)"></i><i style="top:518px;left:164px;width:546px;background:linear-gradient(90deg,#007fbf -2px,#006abf 64px,#0053bf 103px,#0044bf 120px,#1043bf 122px,#1e42bf 126px,#333fbf 137px,#4e38bf 162px,#7023bf 209px,#7b14bf 228px,#7e08bf 234px,#7f00bf 235px,#a500bf 307px,#bf00be 373px,#bf00a4 463px,#bf0095 543px)"></i><i style="top:520px;left:166px;width:533px;background:linear-gradient(90deg,#007dbf -2px,#0068bf 62px,#0051bf 100px,#0041bf 117px,#0d41bf 118px,#1a40bf 121px,#2d3ebf 130px,#4737bf 151px,#6726bf 193px,#7516bf 215px,#790bbf 222px,#7a08bf 223px,#7a00bf 224px,#a000bf 293px,#bf00be 370px,#bf00a4 461px,#bf0097 530px)"></i><i style="top:522px;left:168px;width:520px;background:linear-gradient(90deg,#007bbf -2px,#0066bf 60px,#004fbf 97px,#003fbf 113px,#103ebf 115px,#1e3dbf 119px,#323abf 130px,#4d32bf 155px,#6a1ebf 194px,#7310bf 208px,#7507bf 212px,#7600bf 213px,#9b00bf 279px,#bf00bf 367px,#bf00a5 458px,#bf0099 517px)"></i><i style="top:524px;left:170px;width:507px;background:linear-gradient(90deg,#0079bf -2px,#0064bf 58px,#004dbf 94px,#003cbf 110px,#0d3cbf 111px,#1d3bbf 115px,#3138bf 126px,#4c2fbf 150px,#661dbf 185px,#6e0fbf 198px,#7007bf 201px,#7100bf 202px,#9600bf 265px,#bf00bf 363px,#bf00a4 460px,#bf009b 504px)"></i><i style="top:526px;left:172px;width:494px;background:linear-gradient(90deg,#0078bf -2px,#0062bf 56px,#004cbf 90px,#003bbf 106px,#1039bf 108px,#2138bf 113px,#3634bf 126px,#5228bf 154px,#6517bf 180px,#6b0abf 189px,#6b07bf 190px,#6c00bf 191px,#9000bf 250px,#b800bf 343px,#bf00bd 367px,#bf00a3 463px,#bf009e 491px)"></i><i style="top:528px;left:174px;width:481px;background:linear-gradient(90deg,#0076bf -2px,#0060bf 54px,#0049bf 87px,#0037bf 103px,#0e37bf 104px,#1d36bf 108px,#3132bf 119px,#4b28bf 143px,#6017bf 169px,#660abf 178px,#6700bf 180px,#8a00bf 236px,#b200bf 325px,#bf00be 364px,#bf00a4 461px,#bf00a0 478px)"></i><i style="top:530px;left:176px;width:468px;background:linear-gradient(90deg,#0074bf -2px,#005ebf 52px,#0047bf 84px,#0035bf 99px,#0a34bf 100px,#1534bf 102px,#2731bf 109px,#3e2bbf 126px,#5819bf 156px,#600cbf 166px,#6106bf 168px,#6200bf 169px,#8400bf 221px,#ab00bf 304px,#bf00be 362px,#bf00a4 460px,#bf00a3 465px)"></i><i style="top:532px;left:178px;width:455px;background:linear-gradient(90deg,#0072bf -2px,#005cbf 50px,#0045bf 81px,#0032bf 96px,#0e31bf 97px,#1d30bf 101px,#312cbf 112px,#4c1fbf 137px,#5910bf 153px,#5c06bf 157px,#5c00bf 158px,#7e00bf 206px,#a400bf 284px,#bf00be 360px,#bf00a5 452px)"></i><i style="top:534px;left:180px;width:442px;background:linear-gradient(90deg,#006fbf -2px,#0059bf 48px,#0043bf 77px,#0030bf 92px,#0a2fbf 93px,#152ebf 95px,#272bbf 102px,#3e23bf 119px,#5013bf 139px,#5509bf 145px,#5700bf 147px,#7700bf 191px,#9d00bf 264px,#bf00bf 356px,#bf00a8 439px)"></i><i style="top:536px;left:182px;width:429px;background:linear-gradient(90deg,#006dbf -2px,#0057bf 46px,#0041bf 74px,#002dbf 88px,#032cbf 89px,#0e2bbf 90px,#1d29bf 94px,#3124bf 105px,#4914bf 127px,#4f09bf 134px,#5100bf 136px,#7000bf 176px,#9500bf 243px,#be00bf 348px,#bf00ab 426px)"></i><i style="top:538px;left:184px;width:416px;background:linear-gradient(90deg,#006bbf -2px,#0055bf 44px,#003ebf 71px,#0029bf 85px,#0b28bf 86px,#1527bf 88px,#2623bf 95px,#3d18bf 112px,#470bbf 122px,#4a00bf 125px,#6800bf 160px,#8b00bf 220px,#b300bf 316px,#bf00be 355px,#bf00ae 413px)"></i><i style="top:540px;left:187px;width:401px;background:linear-gradient(90deg,#0068bf -2px,#0051bf 42px,#003bbf 67px,#0026bf 80px,#0424bf 81px,#0e24bf 82px,#1d22bf 86px,#311abf 97px,#3f0dbf 109px,#4205bf 112px,#4300bf 113px,#6000bf 144px,#8200bf 198px,#a900bf 285px,#bf00be 352px,#bf00b1 398px)"></i><i style="top:542px;left:190px;width:387px;background:linear-gradient(90deg,#0065bf -2px,#004fbf 39px,#0039bf 62px,#0026bf 74px,#0021bf 76px,#0b20bf 77px,#181ebf 80px,#2b17bf 89px,#380bbf 98px,#3b00bf 101px,#5700bf 127px,#7800bf 174px,#9d00bf 251px,#bf00be 347px,#bf00b4 384px)"></i><i style="top:544px;left:193px;width:373px;background:linear-gradient(90deg,#0062bf -2px,#004bbf 37px,#0035bf 59px,#0023bf 69px,#001ebf 71px,#1319bf 74px,#2314bf 80px,#2f08bf 87px,#3200bf 89px,#4b00bf 109px,#6a00bf 147px,#8e00bf 211px,#b600bf 313px,#bf00bd 347px,#bf00b7 370px)"></i><i style="top:546px;left:195px;width:360px;background:linear-gradient(90deg,#005fbf -2px,#0049bf 35px,#0033bf 55px,#0020bf 65px,#0016bf 68px,#0b14bf 69px,#1810bf 72px,#2208bf 76px,#2600bf 78px,#3e00bf 92px,#5a00bf 120px,#7b00bf 170px,#a100bf 252px,#bf00be 343px,#bf00ba 357px)"></i><i style="top:548px;left:198px;width:346px;background:linear-gradient(90deg,#005cbf -2px,#0045bf 32px,#0030bf 51px,#001dbf 60px,#0010bf 63px,#0e03bf 65px,#1800bf 67px,#2b00bf 74px,#4200bf 90px,#5f00bf 122px,#8100bf 178px,#a800bf 268px,#bf00be 341px,#bf00bd 343px)"></i><i style="top:550px;left:200px;width:333px;background:linear-gradient(90deg,#0059bf -2px,#0042bf 30px,#002ebf 47px,#001cbf 55px,#000fbf 58px,#0200bf 59px,#0f00bf 60px,#1c00bf 63px,#3000bf 72px,#4a00bf 92px,#6800bf 130px,#8b00bf 195px,#b400bf 298px,#be00bf 330px)"></i><i style="top:552px;left:203px;width:319px;background:linear-gradient(90deg,#0055bf -2px,#003fbf 27px,#002abf 43px,#0018bf 50px,#000ebf 52px,#0600bf 53px,#1000bf 54px,#1f00bf 58px,#3300bf 68px,#4d00bf 90px,#6c00bf 131px,#9000bf 201px,#b900bf 311px,#ba00bf 316px)"></i><i style="top:554px;left:205px;width:306px;background:linear-gradient(90deg,#0052bf -2px,#003bbf 25px,#0027bf 39px,#0017bf 45px,#000dbf 47px,#0800bf 48px,#1100bf 49px,#2000bf 53px,#3500bf 64px,#4f00bf 87px,#6e00bf 130px,#9200bf 202px,#b700bf 303px)"></i><i style="top:556px;left:208px;width:292px;background:linear-gradient(90deg,#004dbf -2px,#0037bf 22px,#0025bf 34px,#0017bf 39px,#000cbf 41px,#0a00bf 42px,#1600bf 44px,#2700bf 50px,#3e00bf 65px,#5a00bf 95px,#7b00bf 148px,#a100bf 235px,#b400bf 289px)"></i><i style="top:558px;left:210px;width:279px;background:linear-gradient(90deg,#0049bf -2px,#0033bf 20px,#0020bf 31px,#0011bf 35px,#000abf 36px,#0b00bf 37px,#1600bf 39px,#2700bf 45px,#3e00bf 60px,#5a00bf 90px,#7b00bf 144px,#a100bf 232px,#b000bf 276px)"></i><i style="top:560px;left:213px;width:264px;background:linear-gradient(90deg,#0044bf -2px,#002fbf 17px,#001cbf 26px,#0011bf 29px,#0009bf 30px,#0c00bf 31px,#1a00bf 34px,#2d00bf 42px,#4500bf 61px,#6300bf 97px,#8500bf 160px,#ac00bf 261px)"></i><i style="top:562px;left:217px;width:249px;background:linear-gradient(90deg,#003dbf -2px,#0029bf 13px,#0019bf 20px,#0010bf 22px,#0007bf 23px,#0d00bf 24px,#1b00bf 27px,#2e00bf 36px,#4700bf 56px,#6500bf 94px,#8800bf 160px,#a900bf 246px)"></i><i style="top:564px;left:220px;width:235px;background:linear-gradient(90deg,#0036bf -2px,#0023bf 10px,#0014bf 15px,#000fbf 16px,#0004bf 17px,#0e00bf 18px,#1b00bf 21px,#2e00bf 30px,#4700bf 50px,#6500bf 89px,#8800bf 156px,#a500bf 232px)"></i><i style="top:566px;left:223px;width:221px;background:linear-gradient(90deg,#002dbf -2px,#001bbf 7px,#000ebf 10px,#0400bf 11px,#0f00bf 12px,#1e00bf 16px,#3300bf 27px,#4c00bf 50px,#6b00bf 94px,#8f00bf 168px,#a200bf 218px)"></i><i style="top:568px;left:227px;width:206px;background:linear-gradient(90deg,#0020bf -2px,#0013bf 2px,#000dbf 3px,#0700bf 4px,#1000bf 5px,#1e00bf 9px,#3300bf 20px,#4d00bf 44px,#6c00bf 89px,#9000bf 165px,#9e00bf 203px)"></i><i style="top:570px;left:232px;width:190px;background:linear-gradient(90deg,#1500bf -2px,#2500bf 4px,#3c00bf 19px,#5800bf 50px,#7800bf 105px,#9b00bf 187px)"></i><i style="top:572px;left:235px;width:176px;background:linear-gradient(90deg,#2600bf -2px,#3c00bf 13px,#5700bf 44px,#7800bf 100px,#9700bf 173px)"></i><i style="top:574px;left:240px;width:160px;background:linear-gradient(90deg,#3300bf -2px,#4c00bf 22px,#6b00bf 67px,#8f00bf 144px,#9400bf 157px)"></i><i style="top:576px;left:244px;width:145px;background:linear-gradient(90deg,#3b00bf -2px,#5700bf 29px,#7700bf 85px,#9000bf 142px)"></i><i style="top:578px;left:248px;width:130px;background:linear-gradient(90deg,#4300bf -2px,#6000bf 36px,#8200bf 102px,#8c00bf 127px)"></i><i style="top:580px;left:255px;width:112px;background:linear-gradient(90deg,#4b00bf -2px,#6a00bf 44px,#8800bf 109px)"></i><i style="top:582px;left:259px;width:96px;background:linear-gradient(90deg,#5100bf -2px,#7100bf 50px,#8400bf 93px)"></i><i style="top:584px;left:266px;width:78px;background:linear-gradient(90deg,#5800bf -2px,#7800bf 57px,#8000bf 75px)"></i><i style="top:586px;left:271px;width:62px;background:linear-gradient(90deg,#5d00bf -2px,#7c00bf 59px)"></i><i style="top:588px;left:277px;width:45px;background:linear-gradient(90deg,#6200bf -2px,#7800bf 42px)"></i><i style="top:590px;left:283px;width:28px;background:linear-gradient(90deg,#6700bf -2px,#7400bf 25px)"></i><i style="top:592px;left:288px;width:12px;background:linear-gradient(90deg,#6a00bf -2px,#7000bf 9px)"></i></div>
<svg class="layer" id="grid" width="1362" height="596" viewBox="2 91 1362 596"><g stroke="#404040" stroke-width="1" shape-rendering="crispEdges"><path d="M172.5 91V687M342.5 91V687M512.5 91V687M683.5 91V687M853.5 91V687M1023.5 91V687M1193.5 91V687M1363.5 91V687M2 620.5H1364M2 554.5H1364M2 488.5H1364M2 422.5H1364M2 355.5H1364M2 289.5H1364M2 223.5H1364M2 157.5H1364"/></g></svg>
<div class="layer" id="bright"><i style="top:192px;left:553px;width:8px;background:linear-gradient(90deg,#54ff01 -2px,#5dff01 5px)"></i><i style="top:194px;left:551px;width:16px;background:linear-gradient(90deg,#51ff01 -2px,#65ff01 13px)"></i><i style="top:196px;left:550px;width:23px;background:linear-gradient(90deg,#50ff01 -2px,#6cff01 20px)"></i><i style="top:198px;left:548px;width:31px;background:linear-gradient(90deg,#4dff01 -2px,#6cff01 21px,#73ff01 28px)"></i><i style="top:200px;left:546px;width:39px;background:linear-gradient(90deg,#4aff01 -2px,#68ff01 19px,#7aff01 36px)"></i><i style="top:202px;left:545px;width:46px;background:linear-gradient(90deg,#48ff02 -2px,#66ff01 18px,#80ff01 43px)"></i><i style="top:204px;left:543px;width:54px;background:linear-gradient(90deg,#44ff02 -2px,#62ff02 17px,#86ff02 50px,#87ff02 51px)"></i><i style="top:206px;left:541px;width:62px;background:linear-gradient(90deg,#41ff0e -2px,#47ff02 1px,#64ff02 20px,#87ff02 53px,#8cff02 59px)"></i><i style="top:208px;left:539px;width:71px;background:linear-gradient(90deg,#41ff1c -2px,#4dff0f 6px,#50ff08 8px,#52ff02 9px,#72ff02 33px,#93ff02 68px)"></i><i style="top:210px;left:538px;width:78px;background:linear-gradient(90deg,#42ff23 -2px,#55ff14 11px,#5aff0a 15px,#5cff04 16px,#69ff02 26px,#8dff02 61px,#99ff02 75px)"></i><i style="top:212px;left:536px;width:86px;background:linear-gradient(90deg,#41ff2a -2px,#5cff18 17px,#63ff0c 23px,#66ff03 25px,#89ff03 58px,#9eff02 83px)"></i><i style="top:214px;left:534px;width:94px;background:linear-gradient(90deg,#41ff30 -2px,#5eff20 19px,#6bff10 30px,#6dff0a 32px,#6eff04 33px,#93ff03 70px,#a4ff02 91px)"></i><i style="top:216px;left:533px;width:101px;background:linear-gradient(90deg,#42ff35 -2px,#5fff27 19px,#70ff17 34px,#74ff0c 39px,#76ff03 41px,#9dff03 82px,#a9ff03 98px)"></i><i style="top:218px;left:531px;width:109px;background:linear-gradient(90deg,#41ff39 -2px,#5fff2d 19px,#75ff1b 40px,#7cff0e 47px,#7eff04 49px,#a5ff03 93px,#aeff03 106px)"></i><i style="top:220px;left:529px;width:117px;background:linear-gradient(90deg,#40ff3e -2px,#5eff34 18px,#79ff20 44px,#82ff11 54px,#85ff04 58px,#aeff03 106px,#b4ff03 114px)"></i><i style="top:222px;left:528px;width:124px;background:linear-gradient(90deg,#41ff41 -2px,#60ff37 19px,#7eff23 49px,#89ff13 61px,#8bff0a 64px,#8cff05 65px,#b6ff04 117px,#b9ff03 121px)"></i><i style="top:224px;left:526px;width:132px;background:linear-gradient(90deg,#41ff45 -2px,#5eff3c 18px,#82ff27 53px,#8fff16 68px,#92ff0c 72px,#93ff05 74px,#beff04 129px)"></i><i style="top:226px;left:524px;width:140px;background:linear-gradient(90deg,#40ff49 -2px,#5eff41 18px,#84ff2c 55px,#93ff1a 74px,#98ff0e 80px,#9aff05 82px,#c3ff04 137px)"></i><i style="top:228px;left:522px;width:148px;background:linear-gradient(90deg,#3fff4c -2px,#5cff45 17px,#81ff34 52px,#96ff21 77px,#9eff12 87px,#a1ff06 91px,#c8ff04 145px)"></i><i style="top:230px;left:521px;width:155px;background:linear-gradient(90deg,#41ff4f -2px,#5fff48 18px,#84ff37 55px,#9bff23 83px,#a4ff13 94px,#a7ff06 98px,#ceff04 152px)"></i><i style="top:232px;left:519px;width:163px;background:linear-gradient(90deg,#40ff52 -2px,#5dff4c 17px,#82ff3e 52px,#9eff28 86px,#a9ff16 101px,#acff0c 105px,#acff08 106px,#d3ff05 160px)"></i><i style="top:234px;left:517px;width:171px;background:linear-gradient(90deg,#3fff56 -2px,#5dff50 17px,#82ff42 52px,#a1ff2c 90px,#adff1b 107px,#b2ff0e 113px,#b3ff07 115px,#d8ff05 168px)"></i><i style="top:236px;left:516px;width:178px;background:linear-gradient(90deg,#41ff58 -2px,#5eff53 17px,#83ff46 52px,#a5ff2f 94px,#b3ff1d 113px,#b7ff10 120px,#b9ff08 122px,#ddff05 175px)"></i><i style="top:238px;left:514px;width:187px;background:linear-gradient(90deg,#40ff5b -2px,#5dff56 17px,#83ff4a 52px,#a8ff33 98px,#b8ff1f 120px,#bdff11 128px,#bfff08 131px,#e3ff05 184px)"></i><i style="top:240px;left:512px;width:195px;background:linear-gradient(90deg,#3fff5e -2px,#5dff59 17px,#83ff4e 52px,#abff36 102px,#bdff21 127px,#c3ff13 136px,#c5ff09 139px,#e8ff06 192px)"></i><i style="top:242px;left:511px;width:202px;background:linear-gradient(90deg,#41ff61 -2px,#5eff5c 17px,#84ff51 52px,#aeff39 105px,#c1ff24 132px,#c9ff14 143px,#cbff09 147px,#edff06 199px)"></i><i style="top:244px;left:509px;width:210px;background:linear-gradient(90deg,#40ff64 -2px,#5eff5f 17px,#84ff54 52px,#b1ff3c 109px,#c6ff27 138px,#ceff16 151px,#d1ff0a 155px,#f2ff06 207px)"></i><i style="top:246px;left:507px;width:218px;background:linear-gradient(90deg,#40ff66 -2px,#5dff62 16px,#82ff58 50px,#b2ff41 109px,#c9ff2b 143px,#d3ff19 158px,#d7ff0a 164px,#f7ff06 215px)"></i><i style="top:248px;left:505px;width:226px;background:linear-gradient(90deg,#3fff69 -2px,#5cff65 16px,#81ff5c 49px,#b1ff47 107px,#ccff30 146px,#d8ff1d 164px,#dcff0e 171px,#ddff0b 172px,#fdff07 223px)"></i><i style="top:250px;left:504px;width:233px;background:linear-gradient(90deg,#41ff6c -2px,#5fff67 17px,#84ff5e 51px,#b5ff49 112px,#d1ff31 152px,#ddff1e 171px,#e2ff10 178px,#e3ff0b 180px,#fffe07 227px,#fffc07 230px)"></i><i style="top:252px;left:502px;width:241px;background:linear-gradient(90deg,#40ff6e -2px,#5dff6a 16px,#82ff62 49px,#b3ff4f 108px,#d3ff37 154px,#e2ff22 177px,#e7ff12 186px,#e9ff0b 188px,#fffe08 226px,#fff707 238px)"></i><i style="top:254px;left:500px;width:249px;background:linear-gradient(90deg,#40ff71 -2px,#5dff6d 16px,#82ff65 49px,#b3ff53 108px,#d6ff3a 158px,#e6ff25 183px,#ecff16 193px,#eeff0c 196px,#fffe09 225px,#fff207 246px)"></i><i style="top:256px;left:499px;width:256px;background:linear-gradient(90deg,#42ff74 -2px,#60ff70 17px,#85ff68 51px,#b7ff55 112px,#daff3c 163px,#ebff27 189px,#f2ff17 200px,#f5ff0c 204px,#fffd0a 223px,#ffed07 253px)"></i><i style="top:258px;left:497px;width:264px;background:linear-gradient(90deg,#42ff76 -2px,#60ff73 17px,#86ff6b 51px,#b7ff59 112px,#ddff40 167px,#f0ff29 196px,#f8ff18 208px,#faff0d 212px,#fffd0b 223px,#ffe907 261px)"></i><i style="top:260px;left:495px;width:272px;background:linear-gradient(90deg,#42ff79 -2px,#5fff76 16px,#84ff6f 49px,#b5ff5e 108px,#dfff45 168px,#f3ff2e 200px,#fdff1b 215px,#fffd0c 221px,#ffe407 269px)"></i><i style="top:262px;left:494px;width:279px;background:linear-gradient(90deg,#44ff7b -2px,#62ff78 17px,#88ff71 52px,#baff5f 114px,#e4ff46 174px,#f9ff2f 207px,#fffd21 219px,#fff810 227px,#fff80d 228px,#ffe007 276px)"></i><i style="top:264px;left:492px;width:287px;background:linear-gradient(90deg,#44ff7e -2px,#62ff7b 17px,#88ff74 52px,#bbff63 114px,#e7ff49 178px,#feff32 213px,#fff61d 230px,#fff20d 237px,#ffdb07 284px)"></i><i style="top:266px;left:490px;width:296px;background:linear-gradient(90deg,#45ff81 -2px,#63ff7e 17px,#8f7 51px,#baff68 112px,#e8ff4e 179px,#fffe36 216px,#fff11f 237px,#ffed10 244px,#ffec0d 246px,#ffd707 293px)"></i><i style="top:268px;left:488px;width:304px;background:linear-gradient(90deg,#45ff84 -2px,#63ff81 17px,#88ff7a 51px,#bbff6b 113px,#ecff51 183px,#fffe3e 215px,#ffed23 242px,#ffe812 252px,#ffe60d 255px,#ffd207 301px)"></i><i style="top:270px;left:487px;width:311px;background:linear-gradient(90deg,#48ff86 -2px,#66ff83 18px,#8dff7d 54px,#c1ff6c 120px,#f1ff52 190px,#fffd45 213px,#ffe926 247px,#ffe415 258px,#ffe20d 261px,#ffce07 308px)"></i><i style="top:272px;left:485px;width:319px;background:linear-gradient(90deg,#48ff89 -2px,#67ff86 18px,#8dff80 54px,#c2ff70 120px,#f4ff55 193px,#fffd4b 212px,#ffe629 252px,#ffdf16 266px,#ffdd0d 270px,#ffcb07 316px)"></i><i style="top:274px;left:483px;width:327px;background:linear-gradient(90deg,#49ff8c -2px,#69ff89 19px,#90ff83 56px,#c6ff73 124px,#f9ff57 199px,#fffd51 211px,#ffe22b 258px,#ffdb18 273px,#ffd80d 278px,#ffc707 324px)"></i><i style="top:276px;left:482px;width:334px;background:linear-gradient(90deg,#4cff8e -2px,#6dff8c 20px,#94ff86 58px,#ccff74 131px,#ffff58 206px,#ffdf2e 262px,#ffd619 280px,#ffd30d 286px,#ffc307 331px)"></i><i style="top:278px;left:480px;width:342px;background:linear-gradient(90deg,#4eff91 -2px,#6eff8f 20px,#94ff89 58px,#cdff78 132px,#fffe5d 206px,#ffdb2f 269px,#ffd219 288px,#ffcf0d 294px,#ffbf07 339px)"></i><i style="top:280px;left:478px;width:350px;background:linear-gradient(90deg,#4fff94 -2px,#6fff92 20px,#96ff8c 59px,#d0ff7b 135px,#fffe61 206px,#ffd731 274px,#ffce1b 295px,#ffca0c 303px,#ffbc07 347px)"></i><i style="top:282px;left:477px;width:357px;background:linear-gradient(90deg,#53ff97 -2px,#73ff95 21px,#9aff8f 61px,#d7ff7c 143px,#fffe66 204px,#ffd738 272px,#ffcb20 299px,#ffc711 308px,#ffc60c 311px,#ffb806 354px)"></i><i style="top:284px;left:475px;width:365px;background:linear-gradient(90deg,#55ff9a -2px,#75ff98 22px,#9dff92 63px,#dbff7f 148px,#fffd6b 203px,#ffd73e 271px,#ffc722 305px,#ffc312 316px,#ffc20c 318px,#ffb406 362px)"></i><i style="top:286px;left:473px;width:373px;background:linear-gradient(90deg,#57ff9d -2px,#77ff9b 22px,#9eff96 63px,#dbff83 147px,#fffd6f 202px,#ffd744 270px,#ffc525 310px,#ffbf14 323px,#ffbe0c 327px,#ffb106 370px)"></i><i style="top:288px;left:472px;width:380px;background:linear-gradient(90deg,#5aff9f -2px,#7cff9e 24px,#a4ff99 67px,#deff86 149px,#fffe75 199px,#ffd74a 267px,#ffc228 314px,#ffbb15 330px,#ffba0b 334px,#ffae06 377px)"></i><i style="top:290px;left:470px;width:388px;background:linear-gradient(90deg,#5dffa2 -2px,#7effa1 24px,#a6ff9c 68px,#dfff8a 149px,#fffe79 198px,#ffd64e 267px,#ffbe29 321px,#ffb815 338px,#ffb60b 343px,#ffaa06 385px)"></i><i style="top:292px;left:468px;width:396px;background:linear-gradient(90deg,#5fffa5 -2px,#80ffa4 24px,#a8ffa0 68px,#deff8f 147px,#fffe7e 197px,#ffd653 266px,#ffbb2a 327px,#ffb417 345px,#ffb20b 351px,#ffa705 393px)"></i><i style="top:294px;left:466px;width:404px;background:linear-gradient(90deg,#62ffa8 -2px,#84ffa7 25px,#aaffa4 69px,#dfff93 147px,#fffe82 196px,#ffd557 266px,#ffb82b 334px,#ffb018 353px,#ffae0a 360px,#ffa405 401px)"></i><i style="top:296px;left:465px;width:412px;background:linear-gradient(90deg,#66ffab -2px,#88ffab 26px,#aeffa7 71px,#e1ff97 147px,#fffe87 194px,#ffd45b 265px,#ffb42b 341px,#ffac16 361px,#ffaa0a 367px,#ffa005 409px)"></i><i style="top:298px;left:463px;width:420px;background:linear-gradient(90deg,#69ffae -2px,#8affae 26px,#b0ffab 71px,#e1ff9c 146px,#fffd8c 193px,#ffd45f 265px,#ffb02b 348px,#ffa917 369px,#ffa709 376px,#ff9d04 417px)"></i><i style="top:300px;left:461px;width:428px;background:linear-gradient(90deg,#6cffb1 -2px,#8effb1 27px,#b3ffae 73px,#e2ffa0 146px,#fffd90 192px,#ffd362 265px,#ffad2d 354px,#ffa618 376px,#ffa309 385px,#ff9a04 425px)"></i><i style="top:302px;left:460px;width:435px;background:linear-gradient(90deg,#70ffb4 -2px,#92ffb5 28px,#b7ffb2 75px,#e5ffa4 147px,#fffd95 190px,#ffd266 265px,#ffac31 354px,#ffa31b 381px,#ffa00c 390px,#ff9f08 392px,#ff9704 432px)"></i><i style="top:304px;left:458px;width:443px;background:linear-gradient(90deg,#74ffb7 -2px,#95ffb8 28px,#b9ffb6 74px,#e4ffa9 144px,#fffe9a 188px,#ffd169 265px,#ffab36 354px,#ffa01d 387px,#ff9d0f 397px,#ff9c08 400px,#ff9304 440px)"></i><i style="top:306px;left:456px;width:451px;background:linear-gradient(90deg,#77ffba -2px,#98ffbb 28px,#bbffba 73px,#e4ffae 142px,#fffe9f 187px,#ffd06c 266px,#ffaa3a 355px,#ff9d1f 393px,#ff9910 405px,#ff9808 408px,#ff9003 448px)"></i><i style="top:308px;left:455px;width:458px;background:linear-gradient(90deg,#7bffbd -2px,#9dffbf 29px,#bfffbd 75px,#e5ffb2 142px,#fffea4 185px,#ffce6f 267px,#ffa93d 356px,#ff9a21 398px,#ff9611 412px,#ff9507 416px,#ff8d03 455px)"></i><i style="top:310px;left:453px;width:466px;background:linear-gradient(90deg,#7fffc0 -2px,#a0ffc2 29px,#c1ffc1 74px,#e5ffb7 140px,#fffea8 184px,#ffcc71 270px,#ffa73f 359px,#ff9722 405px,#ff9311 420px,#ff9206 424px,#ff8a03 463px)"></i><i style="top:312px;left:451px;width:474px;background:linear-gradient(90deg,#82ffc3 -2px,#a3ffc5 29px,#c2ffc5 73px,#e6ffbb 138px,#fffead 183px,#ffca72 274px,#ffa441 363px,#ff9423 412px,#ff8f12 428px,#ff8e06 433px,#ff8703 471px)"></i><i style="top:314px;left:449px;width:482px;background:linear-gradient(90deg,#85ffc6 -2px,#a6ffc8 29px,#c4ffc9 72px,#e6ffc0 136px,#fffeb2 182px,#ffc773 278px,#ffa242 367px,#ff9123 420px,#ff8c12 436px,#ff8b09 440px,#ff8b05 441px,#ff8403 479px)"></i><i style="top:316px;left:448px;width:489px;background:linear-gradient(90deg,#8affc9 -2px,#aaffcb 29px,#c7ffcc 72px,#e7ffc4 135px,#fffdb7 180px,#ffc473 283px,#ff9f43 372px,#ff8e23 426px,#ff8913 443px,#ff8705 449px,#ff8102 486px)"></i><i style="top:318px;left:446px;width:497px;background:linear-gradient(90deg,#8dffcb -2px,#adffcf 29px,#caffd0 71px,#e8ffc9 134px,#fffdbb 179px,#ffc173 289px,#ff9c43 378px,#ff8a23 434px,#ff8613 451px,#ff8409 456px,#ff8405 457px,#ff7e02 494px)"></i><i style="top:320px;left:444px;width:505px;background:linear-gradient(90deg,#90ffce -2px,#b0ffd1 29px,#ccffd3 70px,#e9ffcd 132px,#fffdc0 178px,#ffbd72 296px,#ff9943 385px,#ff8723 442px,#ff8212 460px,#ff810a 464px,#ff8104 466px,#ff7b02 502px)"></i><i style="top:322px;left:443px;width:512px;background:linear-gradient(90deg,#94ffd1 -2px,#b4ffd4 29px,#cfffd7 70px,#eaffd1 132px,#fffdc4 176px,#ffb971 302px,#ff9643 391px,#ff8423 449px,#ff7f12 467px,#ff7d08 472px,#ff7d04 473px,#ff7802 509px)"></i><i style="top:324px;left:441px;width:520px;background:linear-gradient(90deg,#97ffd3 -2px,#b7ffd7 29px,#d1ffda 69px,#ebffd5 130px,#fffdc9 175px,#ffb56f 310px,#ff9242 400px,#ff8023 458px,#ff7b11 476px,#ff7a09 480px,#ff7a03 482px,#ff7502 517px)"></i><i style="top:326px;left:439px;width:529px;background:linear-gradient(90deg,#9affd6 -2px,#baffda 29px,#d3ffdd 68px,#ecffd9 129px,#fffdcd 174px,#ffb16f 317px,#ff8f42 407px,#ff7d23 466px,#ff7812 484px,#ff7707 489px,#ff7703 490px,#ff7101 526px)"></i><i style="top:328px;left:438px;width:536px;background:linear-gradient(90deg,#9effd8 -2px,#bdffdd 29px,#d6ffe0 68px,#eeffdc 129px,#fffdd1 172px,#ffae6e 322px,#ff8c42 412px,#ff7a23 472px,#ff7512 491px,#ff7409 496px,#ff7304 497px,#ff6e01 533px)"></i><i style="top:330px;left:436px;width:544px;background:linear-gradient(90deg,#a1ffda -2px,#bfffdf 28px,#d8ffe3 66px,#efffe0 127px,#fffdd5 171px,#ffd19f 253px,#ffa96c 331px,#ff8740 423px,#ff7723 481px,#ff7111 500px,#ff7006 505px,#ff7003 506px,#ff6b01 541px)"></i><i style="top:332px;left:434px;width:552px;background:linear-gradient(90deg,#a3ffdd -2px,#c2ffe1 28px,#daffe5 65px,#f0ffe3 127px,#fffdd9 170px,#ffd8ab 241px,#ffab72 326px,#ff8b4a 407px,#ff7526 484px,#ff6f14 506px,#ff6d08 513px,#ff6d02 514px,#ff6801 549px)"></i><i style="top:334px;left:432px;width:560px;background:linear-gradient(90deg,#a6ffdf -2px,#c5ffe3 28px,#dcffe8 64px,#f1ffe7 125px,#fffddd 169px,#ffdcb4 234px,#ffab76 325px,#ff8d50 400px,#ff7227 490px,#ff6b15 514px,#ff6a09 521px,#ff6902 523px,#ff6501 557px)"></i><i style="top:336px;left:431px;width:567px;background:linear-gradient(90deg,#a9ffe1 -2px,#c8ffe6 28px,#dfffea 64px,#f2ffea 123px,#fffde1 167px,#ffe0bc 227px,#ffaa78 325px,#ff8d53 397px,#ff6f28 496px,#ff6815 521px,#ff660a 528px,#ff6602 530px,#ff6201 564px)"></i><i style="top:338px;left:429px;width:575px;background:linear-gradient(90deg,#abffe3 -2px,#c9ffe8 27px,#e0ffec 62px,#f1ffed 114px,#fffee5 165px,#ffe3c3 222px,#ffa97a 327px,#ff8c56 397px,#ff6c28 503px,#ff6515 529px,#ff6309 537px,#ff6202 539px,#ff5f01 572px)"></i><i style="top:340px;left:427px;width:583px;background:linear-gradient(90deg,#adffe4 -2px,#cbffe9 27px,#e2ffee 61px,#f2fff0 109px,#fffee8 163px,#ffe7ca 217px,#ffa77b 330px,#ff8a58 399px,#ff6828 511px,#ff6115 538px,#ff5f0a 545px,#ff5f01 547px,#ff5b01 580px)"></i><i style="top:342px;left:426px;width:590px;background:linear-gradient(90deg,#b0ffe6 -2px,#ceffeb 27px,#e4fff0 61px,#f3fff2 108px,#fffeeb 162px,#ffe8cf 214px,#ffa57b 333px,#ff8859 401px,#ff6529 517px,#ff5e15 545px,#ff5c09 553px,#ff5b01 555px,#ff5801 587px)"></i><i style="top:344px;left:424px;width:598px;background:linear-gradient(90deg,#b2ffe8 -2px,#d0ffed 27px,#e6fff1 60px,#f4fff4 105px,#fffeee 161px,#ffead4 211px,#ffa37c 336px,#ff865a 403px,#ff6228 525px,#ff5a15 553px,#ff580a 561px,#ff5801 563px,#ff5400 595px)"></i><i style="top:346px;left:422px;width:606px;background:linear-gradient(90deg,#b3ffe9 -2px,#d2ffee 27px,#e7fff3 60px,#f5fff6 104px,#fffef0 160px,#ffecd9 209px,#ffa17d 340px,#ff845b 406px,#ff5e28 533px,#ff5716 561px,#ff550b 569px,#ff5401 572px,#ff5100 603px)"></i><i style="top:348px;left:421px;width:613px;background:linear-gradient(90deg,#b5ffeb -2px,#d3fff0 26px,#e9fff4 59px,#f6fff7 101px,#fffef3 158px,#fed 205px,#ffc8af 272px,#ff9e7c 344px,#ff825c 410px,#ff5b29 539px,#ff5316 568px,#ff5109 577px,#ff5001 579px,#ff4d00 610px)"></i><i style="top:350px;left:419px;width:621px;background:linear-gradient(90deg,#b6ffec -2px,#d5fff1 26px,#eafff6 58px,#f7fff9 99px,#fffef5 157px,#ffefe1 204px,#ffcdb7 265px,#ff9e80 342px,#ff8260 406px,#ff5829 547px,#ff4f15 577px,#ff4d0a 585px,#ff4c01 588px,#ff4900 618px)"></i><i style="top:352px;left:417px;width:629px;background:linear-gradient(90deg,#b7ffee -2px,#d6fff2 26px,#ebfff7 58px,#f8fffa 98px,#fffef6 157px,#fff0e4 203px,#ffd2bf 259px,#ff9e83 342px,#ff8263 404px,#ff582f 541px,#ff4d1a 580px,#ff490d 592px,#ff4806 595px,#ff4801 596px,#ff4600 626px)"></i><i style="top:354px;left:416px;width:637px;background:linear-gradient(90deg,#b9ffef -2px,#d8fff4 26px,#edfff8 57px,#f9fffb 96px,#fffef8 156px,#fff1e7 201px,#ffd5c5 254px,#ff9d85 342px,#ff8165 403px,#ff5835 533px,#ff4a1e 582px,#ff460f 598px,#ff4407 602px,#ff4401 603px,#ff4100 634px)"></i><i style="top:356px;left:414px;width:645px;background:linear-gradient(90deg,#b9fff0 -2px,#d8fff5 26px,#eefff9 57px,#f9fffc 95px,#fffef9 157px,#fff2e9 202px,#ffd6c8 254px,#ff9c86 344px,#ff7f66 405px,#ff5738 534px,#ff471f 588px,#ff4110 606px,#ff4005 611px,#ff4000 612px,#ff3d00 642px)"></i><i style="top:358px;left:412px;width:653px;background:linear-gradient(90deg,#b9fff2 -2px,#d8fff5 25px,#edfff9 55px,#fafffc 91px,#fffefa 156px,#fff3ec 200px,#ffdacf 249px,#ff9b87 346px,#ff7e68 406px,#ff563c 531px,#ff4421 593px,#ff3d10 614px,#ff3b07 619px,#ff3b00 620px,#ff3800 650px)"></i><i style="top:360px;left:410px;width:661px;background:linear-gradient(90deg,#b9fff3 -2px,#d8fff6 25px,#eefffa 55px,#fafffd 91px,#fffefb 158px,#fff3ed 202px,#ffdad1 250px,#f98 349px,#ff7c69 409px,#ff533c 537px,#ff3f21 601px,#ff3811 622px,#ff3608 627px,#ff3600 629px,#f30 658px)"></i><i style="top:362px;left:409px;width:668px;background:linear-gradient(90deg,#bafff4 -2px,#d9fff7 25px,#effffb 55px,#fbfffd 90px,#fffefc 159px,#fff3ef 202px,#ffdbd3 249px,#ff9889 350px,#ff7a6a 410px,#ff513e 538px,#ff3b22 606px,#f31 629px,#ff3007 635px,#ff3000 636px,#ff2e00 665px)"></i><i style="top:364px;left:407px;width:676px;background:linear-gradient(90deg,#b9fff5 -2px,#d9fff8 25px,#effffb 55px,#fbfffe 90px,#fffefc 161px,#fff3f0 204px,#ffdbd4 251px,#ff968a 352px,#ff796b 411px,#ff5041 536px,#ff3724 611px,#ff2d13 636px,#ff2a08 643px,#ff2a00 645px,#ff2800 673px)"></i><i style="top:366px;left:405px;width:684px;background:linear-gradient(90deg,#b8fff6 -2px,#d8fff9 24px,#eefffc 53px,#fbfffe 87px,#fffefd 157px,#fff5f3 200px,#ffe0db 245px,#ff948a 356px,#ff766b 416px,#ff372a 606px,#ff2917 640px,#ff240b 650px,#ff2306 652px,#f20 653px,#ff2000 681px)"></i><i style="top:368px;left:404px;width:691px;background:linear-gradient(90deg,#b8fff8 -2px,#d8fffa 24px,#effffc 53px,#fbfffe 86px,#fffffe 152px,#fff7f5 196px,#ffe3df 240px,#ff918a 359px,#ff736c 419px,#ff322a 612px,#ff2117 647px,#ff1a0a 658px,#ff1800 661px,#ff1500 688px)"></i><i style="top:370px;left:402px;width:688px;background:linear-gradient(90deg,#b7fff9 -2px,#d8fffb 24px,#effffd 53px,#fbfffe 86px,#fff 148px,#fff8f7 194px,#ffe5e3 237px,#ff8f8a 362px,#ff716c 422px,#ff2d2c 616px,#ff1819 653px,#ff0c0e 664px,#ff070b 666px,#ff0009 667px,#ff000d 685px)"></i><i style="top:372px;left:400px;width:681px;background:linear-gradient(90deg,#b5fffa -2px,#d7fffc 24px,#eefffd 53px,#fbfffe 86px,#fff 144px,#fff9f9 191px,#ffe8e7 233px,#ffc1bf 291px,#ff8e8c 363px,#ff6f6e 423px,#ff2d31 611px,#ff1822 646px,#ff0c1c 657px,#ff061a 659px,#ff001a 660px,#ff001b 678px)"></i><i style="top:374px;left:399px;width:673px;background:linear-gradient(90deg,#b5fffc -2px,#d7fffd 24px,#eefffe 52px,#fbffff 84px,#fff 136px,#fffbfa 187px,#ffebea 229px,#ffc8c7 282px,#ff8e8e 361px,#ff6f70 420px,#ff464b 536px,#ff2732 615px,#ff1527 642px,#ff0923 650px,#ff0023 652px,#ff0023 670px)"></i><i style="top:376px;left:397px;width:666px;background:linear-gradient(90deg,#b3fffd -2px,#d4fffe 23px,#ecfffe 51px,#fbffff 83px,#fff 131px,#fffbfb 186px,#ffecec 227px,#ffcbcc 278px,#ff8d90 362px,#ff6e72 421px,#ff464e 532px,#ff2737 609px,#ff152d 635px,#ff092a 643px,#ff0029 645px,#ff0029 663px)"></i><i style="top:378px;left:395px;width:658px;background:linear-gradient(90deg,#b1fffe -2px,#d3ffff 23px,#ecffff 51px,#faffff 82px,#fff 127px,#fffcfc 185px,#ffedee 226px,#ffced0 275px,#ff8b90 364px,#ff6c73 423px,#ff434f 534px,#ff253a 605px,#ff1432 629px,#ff0930 636px,#ff002f 638px,#ff002f 655px)"></i><i style="top:380px;left:393px;width:651px;background:linear-gradient(90deg,#aefeff -2px,#d1feff 23px,#eafeff 51px,#f9ffff 82px,#fff 125px,#fffcfc 185px,#ffeeef 226px,#ffcfd2 274px,#ff8a91 366px,#ff6a74 425px,#ff4051 535px,#ff243e 600px,#ff1337 623px,#ff0935 629px,#ff0034 631px,#ff0034 648px)"></i><i style="top:382px;left:392px;width:643px;background:linear-gradient(90deg,#adfdff -2px,#d0fdff 23px,#e9feff 51px,#f9feff 82px,#fff 124px,#fffbfc 185px,#ffeeef 226px,#ffcfd3 274px,#ff8892 367px,#ff6774 426px,#ff3d52 537px,#ff2241 596px,#ff123b 616px,#ff093a 621px,#ff0139 623px,#ff0039 640px)"></i><i style="top:384px;left:390px;width:636px;background:linear-gradient(90deg,#aafbff -2px,#cdfcff 23px,#e8fdff 51px,#f8feff 82px,#fff 123px,#fffbfc 185px,#ffeef0 226px,#ffd0d5 273px,#ff8692 369px,#ff6575 428px,#ff3a53 539px,#ff2044 592px,#ff103f 610px,#ff093e 614px,#ff013d 616px,#ff003d 633px)"></i><i style="top:386px;left:388px;width:628px;background:linear-gradient(90deg,#a7f9ff -2px,#cbfaff 23px,#e6fcff 51px,#f7fdff 82px,#feffff 122px,#fffbfc 185px,#ffedf0 227px,#ffcfd6 274px,#ff8493 371px,#ff6376 430px,#ff3654 542px,#ff1f47 588px,#ff0f43 604px,#ff0542 608px,#ff0142 609px,#ff0141 625px)"></i><i style="top:388px;left:387px;width:620px;background:linear-gradient(90deg,#a5f8ff -2px,#c9f9ff 23px,#e5fbff 51px,#f6fdff 82px,#fefeff 122px,#fffbfc 184px,#ffedf1 226px,#ffd0d7 273px,#ff8293 372px,#ff6177 431px,#ff3255 544px,#ff1c4a 584px,#ff0d47 597px,#ff0146 601px,#ff0145 617px)"></i><i style="top:390px;left:385px;width:613px;background:linear-gradient(90deg,#a2f6ff -2px,#c6f7ff 23px,#e2faff 51px,#f5fcff 82px,#fefeff 121px,#fffbfd 182px,#ffeef2 224px,#ffd2da 270px,#ff8093 375px,#ff5e77 434px,#ff2c55 551px,#ff174c 582px,#ff0b4a 591px,#ff0249 594px,#ff0149 610px)"></i><i style="top:392px;left:383px;width:606px;background:linear-gradient(90deg,#9ef4ff -2px,#c3f6ff 23px,#e0f8ff 51px,#f3fbff 82px,#fdfdff 121px,#fffbfd 180px,#ffeef2 223px,#ffd3dc 268px,#ff7d93 377px,#ff5b78 437px,#ff2755 554px,#ff144f 578px,#ff094d 585px,#ff024d 587px,#ff014c 603px)"></i><i style="top:394px;left:382px;width:597px;background:linear-gradient(90deg,#9cf2ff -2px,#c1f4ff 23px,#dff7ff 52px,#f3faff 84px,#fdfdff 124px,#fffafd 179px,#ffedf3 222px,#ffd3dd 267px,#ff7b94 378px,#ff5979 438px,#ff2659 547px,#ff1553 570px,#ff0951 577px,#ff0251 579px,#ff0250 594px)"></i><i style="top:396px;left:380px;width:590px;background:linear-gradient(90deg,#98f0ff -2px,#bef2ff 23px,#ddf6ff 52px,#f1f9ff 84px,#fcfcff 123px,#fffafd 176px,#ffeef3 220px,#ffd4de 265px,#ff7894 381px,#ff5579 442px,#ff265c 542px,#ff1356 564px,#ff0954 570px,#ff0454 571px,#ff0253 587px)"></i><i style="top:398px;left:378px;width:583px;background:linear-gradient(90deg,#93eeff -2px,#b9f0ff 22px,#d9f4ff 51px,#eff8ff 83px,#fbfbff 122px,#fffafd 173px,#ffeef4 218px,#ffd5e0 262px,#ff7594 384px,#ff5178 447px,#ff255f 536px,#ff1459 557px,#ff0958 563px,#ff0457 564px,#ff0256 580px)"></i><i style="top:400px;left:376px;width:576px;background:linear-gradient(90deg,#8fecff -2px,#b7efff 23px,#d7f2ff 52px,#edf6ff 84px,#fbfaff 123px,#fff9fd 172px,#ffedf4 218px,#ffd4e0 263px,#ff7394 386px,#ff4e79 450px,#ff2461 531px,#ff125c 551px,#ff095b 556px,#ff045b 557px,#ff035a 573px)"></i><i style="top:402px;left:375px;width:567px;background:linear-gradient(90deg,#8deaff -2px,#b3ecff 22px,#d4f0ff 51px,#ebf5ff 83px,#faf9ff 122px,#fff8fd 169px,#ffecf4 216px,#ffd3e1 261px,#ff7094 387px,#ff4a79 453px,#ff2364 525px,#ff1360 543px,#ff095e 548px,#ff055e 549px,#ff045d 564px)"></i><i style="top:404px;left:373px;width:560px;background:linear-gradient(90deg,#88e8ff -2px,#afeaff 22px,#d1eeff 51px,#e9f3ff 83px,#f8f7ff 121px,#fff7fd 169px,#ffeaf3 217px,#ffd1e1 262px,#ff6e94 389px,#ff4579 458px,#ff2267 520px,#ff1263 537px,#ff0661 542px,#ff0460 557px)"></i><i style="top:406px;left:371px;width:553px;background:linear-gradient(90deg,#84e6ff -2px,#aee8ff 24px,#cfecff 53px,#e8f1ff 86px,#f8f6ff 125px,#fff5fd 170px,#ffe8f3 218px,#ffcfe0 264px,#ff6c95 390px,#ff4279 460px,#ff216a 515px,#ff1065 531px,#ff0764 535px,#ff0563 550px)"></i><i style="top:408px;left:370px;width:545px;background:linear-gradient(90deg,#80e3ff -2px,#a8e6ff 22px,#cbeaff 51px,#e5efff 84px,#f6f4ff 123px,#fff4fd 169px,#ffe6f2 218px,#ffcddf 264px,#ff6995 391px,#ff3d79 463px,#ff1f6c 510px,#ff0f68 524px,#ff0868 527px,#ff0666 542px)"></i><i style="top:410px;left:368px;width:537px;background:linear-gradient(90deg,#7ce1ff -2px,#a6e3ff 23px,#c9e8ff 53px,#e4edff 87px,#f6f2ff 127px,#fff2fd 170px,#ffe3f1 220px,#ffc9de 267px,#ff6796 392px,#ff3a7a 465px,#ff1d6e 506px,#ff0e6b 518px,#ff096b 521px,#ff0769 534px)"></i><i style="top:412px;left:366px;width:530px;background:linear-gradient(90deg,#78dfff -2px,#a4e1ff 25px,#c8e6ff 55px,#e3ebff 89px,#f6f0ff 130px,#ffeffd 172px,#ffe0f0 222px,#ffc6dd 269px,#ff6496 394px,#ff347a 469px,#ff1b71 502px,#ff0d6e 512px,#ff086c 527px)"></i><i style="top:414px;left:365px;width:522px;background:linear-gradient(90deg,#74dcff -2px,#9ddeff 22px,#c2e3ff 52px,#dfe8ff 86px,#f4edff 127px,#ffedfd 172px,#ffddf0 223px,#ffc2db 271px,#ff6297 394px,#ff307b 470px,#ff1973 497px,#ff0c71 506px,#ff0a6f 519px)"></i><i style="top:416px;left:363px;width:515px;background:linear-gradient(90deg,#70daff -2px,#9cdcff 24px,#c1e0ff 54px,#dee6ff 89px,#f3ebff 131px,#ffebfe 173px,#ffdaef 225px,#ffbed9 274px,#ff5f98 395px,#ff2a7b 473px,#ff1676 493px,#ff0e74 499px,#ff0b73 512px)"></i><i style="top:418px;left:361px;width:507px;background:linear-gradient(90deg,#6bd7ff -2px,#99d9ff 25px,#bedeff 55px,#dce3ff 90px,#f2e8ff 132px,#ffe8fd 175px,#ffd6ed 228px,#ffb9d7 278px,#ff5c98 396px,#ff247c 475px,#ff1077 492px,#ff0d76 504px)"></i><i style="top:420px;left:359px;width:500px;background:linear-gradient(90deg,#67d5ff -2px,#6fd5ff 3px,#95d7ff 25px,#badbff 55px,#dae0ff 91px,#f1e5ff 134px,#ffe5fd 177px,#ffd2ec 231px,#ffb3d5 282px,#ff5999 398px,#ff237f 470px,#ff127b 485px,#ff0f79 497px)"></i><i style="top:422px;left:358px;width:492px;background:linear-gradient(90deg,#63d2ff -2px,#91d4ff 24px,#b7d8ff 54px,#d7ddff 90px,#f0e2ff 133px,#ffe2fe 177px,#ffceeb 232px,#ffafd4 284px,#ff5699 398px,#ff2482 463px,#ff147e 477px,#ff117c 489px)"></i><i style="top:424px;left:356px;width:485px;background:linear-gradient(90deg,#5fd0ff -2px,#65cfff 2px,#89d1ff 22px,#b0d4ff 51px,#d2d9ff 87px,#ecdfff 130px,#ffdefe 179px,#ffcaea 235px,#ffa9d1 289px,#ff5299 400px,#ff2484 458px,#ff1781 470px,#ff137f 482px)"></i><i style="top:426px;left:354px;width:477px;background:linear-gradient(90deg,#5acdff -2px,#62cdff 3px,#87ceff 23px,#add1ff 52px,#cfd6ff 88px,#ebdbff 132px,#ffdbfd 181px,#ffc5e8 238px,#ffa3cf 293px,#ff4f9a 401px,#ff2587 452px,#ff1984 464px,#ff1582 474px)"></i><i style="top:428px;left:353px;width:469px;background:linear-gradient(90deg,#57cbff -2px,#5bcaff 1px,#7ecbff 19px,#a5ceff 47px,#c9d2ff 83px,#e7d7ff 126px,#ffd7fe 181px,#ffc1e7 239px,#ff9ece 295px,#ff4b9a 402px,#ff248a 447px,#ff1c87 456px,#ff1886 466px)"></i><i style="top:430px;left:351px;width:462px;background:linear-gradient(90deg,#52c8ff -2px,#58c8ff 2px,#7ac8ff 19px,#a0caff 46px,#c5cfff 82px,#e4d4ff 125px,#ffd4fe 182px,#ffbce6 242px,#ff98cc 300px,#ff469a 405px,#ff238c 443px,#ff1d8a 452px,#ff1a89 459px)"></i><i style="top:432px;left:349px;width:455px;background:linear-gradient(90deg,#4ec6ff -2px,#53c5ff 2px,#74c5ff 18px,#9ac7ff 44px,#c0cbff 80px,#e1d0ff 124px,#ffd0fe 184px,#ffb7e5 245px,#ff92ca 304px,#ff419a 407px,#ff218e 442px,#ff1d8c 452px)"></i><i style="top:434px;left:348px;width:446px;background:linear-gradient(90deg,#4bc3ff -2px,#50c2ff 2px,#71c3ff 18px,#98c4ff 44px,#bec8ff 80px,#dfccff 124px,#ffcbfe 185px,#ffb2e4 247px,#ff8bc8 308px,#ff3b9a 409px,#ff2492 434px,#ff208f 443px)"></i><i style="top:436px;left:346px;width:439px;background:linear-gradient(90deg,#47c1ff -2px,#4cc0ff 2px,#6cc0ff 17px,#92c1ff 42px,#b9c4ff 78px,#ddc8ff 123px,#ffc7ff 186px,#ffade2 250px,#ff84c5 313px,#ff3a9c 406px,#ff2695 427px,#ff2293 436px)"></i><i style="top:438px;left:344px;width:432px;background:linear-gradient(90deg,#43beff -2px,#47bdff 2px,#66bdff 16px,#8cbeff 40px,#b3c0ff 75px,#d7c4ff 119px,#ffc3ff 187px,#ffa8e2 252px,#ff7fc4 316px,#ff3c9f 400px,#ff2998 420px,#ff2596 429px)"></i><i style="top:440px;left:343px;width:424px;background:linear-gradient(90deg,#40bcff -2px,#42baff 1px,#5ebaff 13px,#83bbff 35px,#abbcff 69px,#d2bfff 113px,#f8c0ff 176px,#ffbdfd 192px,#ffa0df 258px,#ff75c0 324px,#ff3aa2 396px,#ff2b9c 413px,#ff279a 421px)"></i><i style="top:442px;left:341px;width:416px;background:linear-gradient(90deg,#3cb9ff -2px,#40b8ff 2px,#5db8ff 14px,#81b8ff 36px,#a9b9ff 70px,#d1bcff 115px,#f9bbff 180px,#ffb9fd 194px,#ff9ade 261px,#ff6ebf 328px,#ff39a4 393px,#ff2e9f 406px,#ff2a9d 413px)"></i><i style="top:444px;left:339px;width:409px;background:linear-gradient(90deg,#38b7ff -2px,#3bb5ff 2px,#57b5ff 13px,#79b5ff 33px,#a1b5ff 65px,#cab7ff 109px,#f2b7ff 170px,#ffb4fd 196px,#ff94dc 265px,#ff67bd 333px,#ff30a2 400px,#ff2da1 406px)"></i><i style="top:446px;left:337px;width:402px;background:linear-gradient(90deg,#35b5ff -2px,#39b3ff 3px,#56b2ff 14px,#78b2ff 34px,#a0b2ff 66px,#c9b3ff 111px,#f3b3ff 174px,#ffaffd 198px,#ff8edb 269px,#ff61bd 336px,#ff32a6 393px,#ff2fa4 399px)"></i><i style="top:448px;left:336px;width:394px;background:linear-gradient(90deg,#32b2ff -2px,#34b0ff 2px,#4eb0ff 11px,#6dafff 28px,#94afff 57px,#beafff 100px,#e8afff 158px,#ffaafe 198px,#ff88da 271px,#ff5cbc 337px,#ff34a9 385px,#ff31a8 391px)"></i><i style="top:450px;left:334px;width:386px;background:linear-gradient(90deg,#2fb0ff -2px,#30aeff 2px,#4dadff 12px,#6cacff 29px,#93abff 58px,#bdabff 101px,#e8abff 160px,#ffa5fe 200px,#ff82d9 274px,#ff56bc 339px,#ff36ad 378px,#ff34ab 383px)"></i><i style="top:452px;left:332px;width:379px;background:linear-gradient(90deg,#2baeff -2px,#2eabff 3px,#47abff 11px,#6af 27px,#8da8ff 55px,#b7a8ff 97px,#e3a6ff 155px,#ffa0fe 202px,#ff7bd8 278px,#ff51bc 340px,#ff38b1 370px,#ff35af 376px)"></i><i style="top:454px;left:331px;width:371px;background:linear-gradient(90deg,#29abff -2px,#2ba9ff 2px,#46a8ff 11px,#65a7ff 27px,#8ca5ff 55px,#b7a4ff 98px,#e4a2ff 158px,#ff9bfe 203px,#ff75d7 280px,#ff4cbd 339px,#ff3ab4 362px,#ff37b2 368px)"></i><i style="top:456px;left:329px;width:364px;background:linear-gradient(90deg,#26a9ff -2px,#29a6ff 3px,#40a6ff 10px,#5ea5ff 24px,#82a3ff 49px,#ada1ff 89px,#da9eff 146px,#ff96fe 205px,#ff6ed6 283px,#ff47be 339px,#ff3ab7 356px,#ff38b6 361px)"></i><i style="top:458px;left:327px;width:356px;background:linear-gradient(90deg,#23a7ff -2px,#25a4ff 3px,#3da3ff 10px,#5aa2ff 23px,#7da0ff 47px,#a89dff 86px,#d69aff 143px,#ff90fe 207px,#ff68d6 285px,#ff43bf 337px,#ff3aba 352px,#ff3aba 353px)"></i><i style="top:460px;left:326px;width:348px;background:linear-gradient(90deg,#21a4ff -2px,#24a1ff 3px,#3aa1ff 9px,#56a0ff 21px,#799dff 44px,#a39aff 82px,#d296ff 138px,#ff8bfe 207px,#ff64d7 283px,#ff3cbe 341px,#ff3abd 345px)"></i><i style="top:462px;left:324px;width:341px;background:linear-gradient(90deg,#1fa2ff -2px,#209fff 3px,#379eff 9px,#539dff 21px,#769bff 43px,#9f97ff 80px,#ce92ff 136px,#ff86ff 208px,#ff5ed7 284px,#ff3cc2 333px,#ff3bc1 338px)"></i><i style="top:464px;left:322px;width:334px;background:linear-gradient(90deg,#1ca0ff -2px,#1e9dff 3px,#259dff 5px,#3a9cff 11px,#579aff 24px,#7a97ff 48px,#a593ff 88px,#d58dff 148px,#ff80fe 212px,#ff58d7 286px,#ff3cc6 326px,#ff3bc4 331px)"></i><i style="top:466px;left:320px;width:326px;background:linear-gradient(90deg,#1a9eff -2px,#1c9aff 4px,#329aff 9px,#4b98ff 19px,#6b96ff 38px,#9292ff 71px,#c28cff 124px,#fb7dff 206px,#ff79fd 216px,#ff50d6 289px,#ff3cca 318px,#ff3bc8 323px)"></i><i style="top:468px;left:319px;width:318px;background:linear-gradient(90deg,#189cff -2px,#1a98ff 3px,#3597ff 10px,#4f96ff 21px,#7093ff 42px,#998eff 78px,#c986ff 135px,#fe76ff 211px,#ff4fda 282px,#ff3bce 310px,#ff3acc 315px)"></i><i style="top:470px;left:317px;width:311px;background:linear-gradient(90deg,#169aff -2px,#1896ff 4px,#2c95ff 8px,#4394ff 16px,#6092ff 32px,#868dff 61px,#b386ff 109px,#eb79ff 184px,#ff6efd 218px,#ff46da 285px,#ff3ad2 303px,#ff39d0 308px)"></i><i style="top:472px;left:315px;width:304px;background:linear-gradient(90deg,#1498ff -2px,#1694ff 4px,#3092ff 10px,#4a91ff 20px,#698eff 39px,#9189ff 73px,#c180ff 128px,#f86dff 207px,#ff68fd 220px,#ff41db 283px,#ff39d6 296px,#ff38d4 301px)"></i><i style="top:474px;left:314px;width:295px;background:linear-gradient(90deg,#1395ff -2px,#1491ff 4px,#2690ff 7px,#3c8fff 14px,#598dff 28px,#7c89ff 54px,#a881ff 98px,#de73ff 168px,#ff62fd 221px,#ff3cde 279px,#ff37d9 289px,#ff37d8 292px)"></i><i style="top:476px;left:312px;width:288px;background:linear-gradient(90deg,#1194ff -2px,#128fff 4px,#2b8eff 9px,#428dff 17px,#5f8aff 33px,#8585ff 63px,#b37bff 113px,#ee67ff 194px,#ff5bfd 223px,#ff36de 280px,#ff35dc 285px)"></i><i style="top:478px;left:310px;width:281px;background:linear-gradient(90deg,#1092ff -2px,#118cff 5px,#1f8cff 7px,#338bff 12px,#4d89ff 23px,#6d85ff 44px,#967eff 81px,#c871ff 142px,#f85cff 211px,#ff55fd 225px,#ff34e3 272px,#ff33e1 278px)"></i><i style="top:480px;left:309px;width:273px;background:linear-gradient(90deg,#0e8fff -2px,#0f8aff 4px,#2689ff 8px,#3c88ff 15px,#5985ff 30px,#7d80ff 57px,#a977ff 103px,#e262ff 179px,#ff4dfd 226px,#ff31e8 264px,#ff31e5 270px)"></i><i style="top:482px;left:307px;width:265px;background:linear-gradient(90deg,#0d8dff -2px,#0e88ff 5px,#1e87ff 7px,#3286ff 12px,#4c84ff 23px,#6c80ff 44px,#9478ff 81px,#c769ff 143px,#f352ff 207px,#ff46fe 228px,#ff2fed 257px,#ff2fea 262px)"></i><i style="top:484px;left:305px;width:258px;background:linear-gradient(90deg,#0c8bff -2px,#0d86ff 5px,#2085ff 8px,#3684ff 14px,#5081ff 26px,#717dff 49px,#9b73ff 90px,#d160ff 158px,#f549ff 212px,#ff3dfe 230px,#ff2cf2 250px,#ff2cef 255px)"></i><i style="top:486px;left:303px;width:251px;background:linear-gradient(90deg,#0b8aff -2px,#0d83ff 6px,#1783ff 7px,#2782ff 10px,#3e80ff 18px,#5c7dff 34px,#8077ff 63px,#ae6aff 113px,#e251ff 185px,#fb3aff 224px,#ff31fc 234px,#ff2af7 243px,#ff29f4 248px)"></i><i style="top:488px;left:302px;width:243px;background:linear-gradient(90deg,#0a87ff -2px,#0b81ff 5px,#2080ff 8px,#357fff 14px,#4f7cff 26px,#7077ff 49px,#9a6dff 90px,#d057ff 159px,#ef3fff 206px,#fe2aff 230px,#ff27fc 235px,#ff27f9 240px)"></i><i style="top:490px;left:300px;width:235px;background:linear-gradient(90deg,#0985ff -2px,#0c7eff 6px,#167eff 7px,#267dff 10px,#3e7cff 18px,#5b78ff 34px,#7f71ff 63px,#ac63ff 113px,#db4aff 178px,#f233ff 212px,#fb24ff 227px,#fe24ff 232px)"></i><i style="top:492px;left:298px;width:228px;background:linear-gradient(90deg,#0883ff -2px,#097cff 6px,#1a7bff 8px,#2c7bff 12px,#4379ff 21px,#6174ff 39px,#876cff 72px,#b75bff 128px,#dd42ff 182px,#ef2cff 210px,#f621ff 220px,#f921ff 225px)"></i><i style="top:494px;left:297px;width:220px;background:linear-gradient(90deg,#0781ff -2px,#087aff 5px,#0b79ff 6px,#1679ff 7px,#2678ff 10px,#3d77ff 18px,#5a73ff 34px,#7e6bff 63px,#ac5cff 114px,#d542ff 171px,#e82cff 200px,#f01fff 212px,#f31fff 217px)"></i><i style="top:496px;left:295px;width:213px;background:linear-gradient(90deg,#067fff -2px,#0777ff 6px,#1977ff 8px,#2b76ff 12px,#4273ff 21px,#606fff 39px,#8666ff 72px,#b652ff 129px,#d73aff 175px,#e525ff 197px,#ea1cff 205px,#ee1cff 210px)"></i><i style="top:498px;left:293px;width:205px;background:linear-gradient(90deg,#067dff -2px,#0675ff 6px,#0b74ff 7px,#1674ff 8px,#2673ff 11px,#3d72ff 19px,#5a6eff 35px,#7e65ff 65px,#ac53ff 117px,#cf3aff 165px,#de26ff 188px,#e419ff 197px,#e719ff 202px)"></i><i style="top:500px;left:292px;width:197px;background:linear-gradient(90deg,#057aff -2px,#0672ff 6px,#1172ff 7px,#1f71ff 9px,#3470ff 15px,#4f6dff 28px,#7066ff 52px,#9a58ff 95px,#c33eff 149px,#d629ff 176px,#de17ff 189px,#e217ff 194px)"></i><i style="top:502px;left:290px;width:190px;background:linear-gradient(90deg,#0579ff -2px,#0570ff 6px,#0b6fff 7px,#156fff 8px,#256eff 11px,#3c6cff 19px,#5968ff 35px,#7d5fff 65px,#ab4bff 117px,#c833ff 157px,#d420ff 175px,#d914ff 182px,#dc15ff 187px)"></i><i style="top:504px;left:288px;width:183px;background:linear-gradient(90deg,#0477ff -2px,#056dff 7px,#116dff 8px,#1f6cff 10px,#346bff 16px,#4f67ff 29px,#6f60ff 53px,#9950ff 96px,#bc38ff 142px,#cc23ff 165px,#d312ff 175px,#d612ff 180px)"></i><i style="top:506px;left:286px;width:175px;background:linear-gradient(90deg,#0475ff -2px,#046bff 7px,#1c6aff 10px,#2f68ff 15px,#4865ff 26px,#685fff 48px,#9050ff 87px,#b538ff 134px,#c623ff 157px,#cc14ff 166px,#cd10ff 168px,#d010ff 172px)"></i><i style="top:508px;left:285px;width:167px;background:linear-gradient(90deg,#0372ff -2px,#0468ff 7px,#1167ff 8px,#1e67ff 10px,#3365ff 16px,#4e61ff 29px,#7059ff 54px,#9947ff 98px,#b630ff 135px,#c21eff 152px,#c70eff 160px,#ca0eff 164px)"></i><i style="top:510px;left:283px;width:160px;background:linear-gradient(90deg,#0370ff -2px,#0366ff 7px,#1665ff 9px,#2564ff 12px,#3c61ff 20px,#585cff 36px,#7b52ff 66px,#a639ff 115px,#b924ff 140px,#c013ff 150px,#c10dff 152px,#c50dff 157px)"></i><i style="top:512px;left:281px;width:153px;background:linear-gradient(90deg,#036eff -2px,#0363ff 8px,#1162ff 9px,#1e61ff 11px,#3360ff 17px,#4e5cff 30px,#6f53ff 55px,#983eff 99px,#af29ff 128px,#b817ff 141px,#bb0bff 145px,#bf0bff 150px)"></i><i style="top:514px;left:280px;width:144px;background:linear-gradient(90deg,#026cff -2px,#0360ff 7px,#165fff 9px,#255eff 12px,#3c5cff 20px,#5756ff 36px,#7b4aff 66px,#a033ff 108px,#af1fff 128px,#b411ff 135px,#b509ff 137px,#b809ff 141px)"></i><i style="top:516px;left:278px;width:137px;background:linear-gradient(90deg,#026aff -2px,#025dff 8px,#125cff 9px,#1e5cff 11px,#335aff 17px,#4d55ff 30px,#6e4cff 55px,#9734ff 99px,#a820ff 120px,#ae10ff 128px,#af08ff 130px,#b308ff 134px)"></i><i style="top:518px;left:276px;width:130px;background:linear-gradient(90deg,#0268ff -2px,#025bff 8px,#1659ff 10px,#2558ff 13px,#3b56ff 21px,#5750ff 37px,#7a42ff 67px,#982cff 101px,#a41bff 116px,#a810ff 121px,#a907ff 123px,#ad07ff 127px)"></i><i style="top:520px;left:275px;width:122px;background:linear-gradient(90deg,#0265ff -2px,#0257ff 8px,#1256ff 9px,#2355ff 12px,#3853ff 19px,#534dff 34px,#7540ff 62px,#932aff 95px,#9f18ff 109px,#a20bff 114px,#a306ff 115px,#a706ff 119px)"></i><i style="top:522px;left:273px;width:114px;background:linear-gradient(90deg,#0163ff -2px,#0255ff 8px,#1653ff 10px,#2852ff 14px,#3f4eff 23px,#5c47ff 41px,#8035ff 74px,#9321ff 96px,#9b12ff 105px,#9d05ff 108px,#a005ff 111px)"></i><i style="top:524px;left:271px;width:107px;background:linear-gradient(90deg,#0161ff -2px,#0151ff 9px,#1250ff 10px,#234fff 13px,#374cff 20px,#5346ff 35px,#7437ff 63px,#8c22ff 88px,#9314ff 97px,#960aff 100px,#9704ff 101px,#9904ff 104px)"></i><i style="top:526px;left:270px;width:99px;background:linear-gradient(90deg,#015dff -2px,#014eff 8px,#164dff 10px,#284bff 14px,#3f47ff 23px,#5d3eff 42px,#7f28ff 74px,#8b17ff 87px,#8e0eff 91px,#9003ff 93px,#9303ff 96px)"></i><i style="top:528px;left:268px;width:92px;background:linear-gradient(90deg,#015bff -2px,#014aff 9px,#1249ff 10px,#2348ff 13px,#3745ff 20px,#523eff 35px,#742bff 63px,#8319ff 79px,#870dff 84px,#8903ff 86px,#8c03ff 89px)"></i><i style="top:530px;left:266px;width:84px;background:linear-gradient(90deg,#0159ff -2px,#0147ff 9px,#0d46ff 10px,#1c45ff 12px,#2e43ff 17px,#483dff 29px,#672eff 52px,#7a1cff 70px,#7f10ff 76px,#8202ff 79px,#8402ff 81px)"></i><i style="top:532px;left:264px;width:77px;background:linear-gradient(90deg,#0157ff -2px,#0142ff 10px,#1242ff 11px,#2341ff 14px,#373dff 21px,#5234ff 36px,#6e21ff 59px,#7713ff 68px,#7a08ff 71px,#7b02ff 72px,#7d02ff 74px)"></i><i style="top:534px;left:263px;width:69px;background:linear-gradient(90deg,#0154ff -2px,#0140ff 9px,#0e3eff 10px,#1c3dff 12px,#2e3aff 17px,#4733ff 29px,#671fff 52px,#7010ff 61px,#7301ff 64px,#7601ff 66px)"></i><i style="top:536px;left:261px;width:62px;background:linear-gradient(90deg,#0152ff -2px,#013dff 9px,#043aff 10px,#133aff 11px,#2338ff 14px,#3933ff 22px,#5427ff 38px,#6516ff 51px,#690cff 55px,#6b01ff 57px,#6e01ff 59px)"></i><i style="top:538px;left:259px;width:54px;background:linear-gradient(90deg,#004fff -2px,#0139ff 9px,#0137ff 10px,#0e35ff 11px,#1c34ff 13px,#3130ff 19px,#4a25ff 32px,#5d14ff 45px,#600cff 48px,#6301ff 50px,#6401ff 51px)"></i><i style="top:540px;left:258px;width:46px;background:linear-gradient(90deg,#004bff -2px,#0036ff 8px,#03f 9px,#0630ff 10px,#1330ff 11px,#232dff 14px,#3927ff 22px,#5116ff 36px,#570cff 40px,#5901ff 42px,#5b01ff 43px)"></i><i style="top:542px;left:256px;width:39px;background:linear-gradient(90deg,#0049ff -2px,#03f 8px,#002cff 10px,#0e2aff 11px,#1c28ff 13px,#3023ff 19px,#4714ff 30px,#4c0bff 33px,#4f01ff 35px,#5101ff 36px)"></i><i style="top:544px;left:254px;width:32px;background:linear-gradient(90deg,#0047ff -2px,#0032ff 7px,#0028ff 10px,#0724ff 11px,#1323ff 12px,#231fff 15px,#3913ff 23px,#3f0bff 26px,#4300ff 28px,#4500ff 29px)"></i><i style="top:546px;left:253px;width:23px;background:linear-gradient(90deg,#0042ff -2px,#002eff 6px,#001dff 10px,#0f1aff 11px,#1c17ff 13px,#2e0bff 18px,#30f 20px)"></i><i style="top:548px;left:251px;width:16px;background:linear-gradient(90deg,#0040ff -2px,#002aff 6px,#001cff 9px,#0015ff 10px,#080bff 11px,#1304ff 12px,#1b00ff 13px)"></i><i style="top:550px;left:250px;width:8px;background:linear-gradient(90deg,#003aff -2px,#0025ff 5px)"></i></div>
<svg style="left:-3px;top:-92px" width="1366" height="728" viewBox="0 0 1366 728" font-family="'Liberation Sans',sans-serif">
<defs><filter id="sh" x="-50%" y="-50%" width="220%" height="220%"><feGaussianBlur stdDeviation="1.2"/></filter><radialGradient id="gl" cx="40%" cy="38%" r="65%"><stop offset="0" stop-color="#fff" stop-opacity=".35"/><stop offset="1" stop-color="#fff" stop-opacity="0"/></radialGradient></defs>
<path d="M298.6 683.4L298.5 683.4" stroke="#8e00f7" stroke-width="1.1" stroke-linecap="round" opacity=".85"/>
<path d="M298.5 683.4L298.5 683.3" stroke="#8e00f7" stroke-width="1.1" stroke-linecap="round" opacity=".85"/>
<path d="M298.5 683.3L298.4 683.4" stroke="#8e00f7" stroke-width="1.1" stroke-linecap="round" opacity=".85"/>
<path d="M298.4 683.4L298.2 683.4" stroke="#8e00f7" stroke-width="1.1" stroke-linecap="round" opacity=".85"/>
<path d="M298.2 683.4L298.1 683.4" stroke="#8e00f7" stroke-width="1.1" stroke-linecap="round" opacity=".85"/>
<path d="M298.1 683.4L297.9 683.4" stroke="#8e00f7" stroke-width="1.1" stroke-linecap="round" opacity=".85"/>
<path d="M297.9 683.4L297.8 683.4" stroke="#8e00f7" stroke-width="1.1" stroke-linecap="round" opacity=".85"/>
<path d="M297.8 683.4L297.6 683.4" stroke="#8e00f7" stroke-width="1.1" stroke-linecap="round" opacity=".85"/>
<path d="M297.6 683.4L297.4 683.4" stroke="#8e00f7" stroke-width="1.1" stroke-linecap="round" opacity=".85"/>
<path d="M297.4 683.4L297.3 683.5" stroke="#8e00f7" stroke-width="1.1" stroke-linecap="round" opacity=".85"/>
<path d="M297.3 683.5L297.1 683.5" stroke="#8e00f7" stroke-width="1.1" stroke-linecap="round" opacity=".85"/>
<path d="M297.1 683.5L296.9 683.5" stroke="#8e00f7" stroke-width="1.1" stroke-linecap="round" opacity=".85"/>
<path d="M296.9 683.5L296.6 683.5" stroke="#8d00f7" stroke-width="1.1" stroke-linecap="round" opacity=".85"/>
<path d="M296.6 683.5L296.3 683.5" stroke="#8d00f7" stroke-width="1.1" stroke-linecap="round" opacity=".85"/>
<path d="M296.3 683.5L296.0 683.5" stroke="#8d00f7" stroke-width="1.1" stroke-linecap="round" opacity=".85"/>
<path d="M296.0 683.5L295.7 683.5" stroke="#8d00f7" stroke-width="1.1" stroke-linecap="round" opacity=".85"/>
<path d="M295.7 683.5L295.3 683.5" stroke="#8d00f7" stroke-width="1.1" stroke-linecap="round" opacity=".85"/>
<path d="M295.3 683.5L295.0 683.4" stroke="#8c00f7" stroke-width="1.1" stroke-linecap="round" opacity=".85"/>
<path d="M295.0 683.4L294.6 683.4" stroke="#8c00f7" stroke-width="1.1" stroke-linecap="round" opacity=".85"/>
<path d="M294.6 683.4L294.0 683.3" stroke="#8c00f7" stroke-width="1.1" stroke-linecap="round" opacity=".85"/>
<path d="M294.0 683.3L293.3 683.1" stroke="#8b00f7" stroke-width="1.1" stroke-linecap="round" opacity=".85"/>
<path d="M293.3 683.1L292.5 682.9" stroke="#8b00f7" stroke-width="1.1" stroke-linecap="round" opacity=".85"/>
<path d="M292.5 682.9L291.7 682.7" stroke="#8a00f7" stroke-width="1.1" stroke-linecap="round" opacity=".85"/>
<path d="M291.7 682.7L290.8 682.4" stroke="#8900f7" stroke-width="1.1" stroke-linecap="round" opacity=".85"/>
<path d="M290.8 682.4L289.7 682.1" stroke="#8800f7" stroke-width="1.1" stroke-linecap="round" opacity=".85"/>
<path d="M289.7 682.1L288.5 681.7" stroke="#8700f7" stroke-width="1.1" stroke-linecap="round" opacity=".85"/>
<path d="M288.5 681.7L287.1 681.2" stroke="#8600f7" stroke-width="1.1" stroke-linecap="round" opacity=".85"/>
<path d="M287.1 681.2L285.6 680.7" stroke="#8400f7" stroke-width="1.1" stroke-linecap="round" opacity=".85"/>
<path d="M285.6 680.7L283.9 680.1" stroke="#8300f7" stroke-width="1.1" stroke-linecap="round" opacity=".85"/>
<path d="M283.9 680.1L282.1 679.5" stroke="#8100f7" stroke-width="1.1" stroke-linecap="round" opacity=".85"/>
<path d="M282.1 679.5L280.1 678.7" stroke="#7f00f7" stroke-width="1.1" stroke-linecap="round" opacity=".85"/>
<path d="M280.1 678.7L277.7 678.0" stroke="#7c00f7" stroke-width="1.1" stroke-linecap="round" opacity=".85"/>
<path d="M277.7 678.0L275.1 677.1" stroke="#7a00f7" stroke-width="1.1" stroke-linecap="round" opacity=".85"/>
<path d="M275.1 677.1L272.2 676.0" stroke="#7600f7" stroke-width="1.1" stroke-linecap="round" opacity=".85"/>
<path d="M272.2 676.0L268.9 674.9" stroke="#7300f7" stroke-width="1.1" stroke-linecap="round" opacity=".85"/>
<path d="M268.9 674.9L265.3 673.7" stroke="#6e00f7" stroke-width="1.1" stroke-linecap="round" opacity=".85"/>
<path d="M265.3 673.7L261.4 672.3" stroke="#6900f7" stroke-width="1.1" stroke-linecap="round" opacity=".85"/>
<path d="M261.4 672.3L257.1 670.8" stroke="#6300f7" stroke-width="1.1" stroke-linecap="round" opacity=".85"/>
<path d="M257.1 670.8L252.4 669.0" stroke="#5b00f7" stroke-width="1.1" stroke-linecap="round" opacity=".85"/>
<path d="M252.4 669.0L247.3 667.0" stroke="#5200f7" stroke-width="1.1" stroke-linecap="round" opacity=".85"/>
<path d="M247.3 667.0L241.9 664.7" stroke="#4500f7" stroke-width="1.1" stroke-linecap="round" opacity=".85"/>
<path d="M241.9 664.7L236.1 661.9" stroke="#3200f7" stroke-width="1.1" stroke-linecap="round" opacity=".85"/>
<path d="M236.1 661.9L229.5 658.4" stroke="#001bf7" stroke-width="1.1" stroke-linecap="round" opacity=".85"/>
<path d="M229.5 658.4L222.0 653.9" stroke="#0040f7" stroke-width="1.1" stroke-linecap="round" opacity=".85"/>
<path d="M222.0 653.9L213.5 648.4" stroke="#0057f7" stroke-width="1.1" stroke-linecap="round" opacity=".85"/>
<path d="M213.5 648.4L204.3 641.8" stroke="#006af7" stroke-width="1.1" stroke-linecap="round" opacity=".85"/>
<path d="M204.3 641.8L194.2 633.8" stroke="#007af7" stroke-width="1.1" stroke-linecap="round" opacity=".85"/>
<path d="M194.2 633.8L183.2 624.1" stroke="#008af7" stroke-width="1.1" stroke-linecap="round" opacity=".85"/>
<path d="M183.2 624.1L171.0 612.6" stroke="#0099f7" stroke-width="1.1" stroke-linecap="round" opacity=".85"/>
<path d="M171.0 612.6L157.7 598.9" stroke="#00a8f7" stroke-width="1.1" stroke-linecap="round" opacity=".85"/>
<path d="M157.7 598.9L143.0 582.9" stroke="#01b6f7" stroke-width="1.1" stroke-linecap="round" opacity=".85"/>
<path d="M143.0 582.9L127.3 564.3" stroke="#01c4f7" stroke-width="1.1" stroke-linecap="round" opacity=".85"/>
<path d="M127.3 564.3L111.2 542.8" stroke="#01d1f7" stroke-width="1.1" stroke-linecap="round" opacity=".85"/>
<path d="M111.2 542.8L95.4 518.6" stroke="#01def7" stroke-width="1.1" stroke-linecap="round" opacity=".85"/>
<path d="M95.4 518.6L79.6 491.5" stroke="#02ebf7" stroke-width="1.1" stroke-linecap="round" opacity=".85"/>
<path d="M79.6 491.5L63.9 461.8" stroke="#01f7f7" stroke-width="1.1" stroke-linecap="round" opacity=".85"/>
<path d="M63.9 461.8L49.1 430.1" stroke="#01f7ed" stroke-width="1.1" stroke-linecap="round" opacity=".85"/>
<path d="M49.1 430.1L35.9 397.1" stroke="#00f7e3" stroke-width="1.1" stroke-linecap="round" opacity=".85"/>
<path d="M35.9 397.1L24.8 363.7" stroke="#00f7db" stroke-width="1.1" stroke-linecap="round" opacity=".85"/>
<path d="M24.8 363.7L16.2 330.5" stroke="#00f7d4" stroke-width="1.1" stroke-linecap="round" opacity=".85"/>
<path d="M16.2 330.5L10.6 298.3" stroke="#00f7cd" stroke-width="1.1" stroke-linecap="round" opacity=".85"/>
<path d="M10.6 298.3L8.5 267.9" stroke="#00f7c8" stroke-width="1.1" stroke-linecap="round" opacity=".85"/>
<path d="M8.5 267.9L10.2 239.6" stroke="#00f7c3" stroke-width="1.1" stroke-linecap="round" opacity=".85"/>
<path d="M10.2 239.6L15.9 213.5" stroke="#00f7be" stroke-width="1.1" stroke-linecap="round" opacity=".85"/>
<path d="M15.9 213.5L25.9 190.4" stroke="#00f7ba" stroke-width="1.1" stroke-linecap="round" opacity=".85"/>
<path d="M25.9 190.4L40.2 171.0" stroke="#00f7b6" stroke-width="1.1" stroke-linecap="round" opacity=".85"/>
<path d="M40.2 171.0L58.2 155.6" stroke="#00f7b2" stroke-width="1.1" stroke-linecap="round" opacity=".85"/>
<path d="M58.2 155.6L79.5 144.7" stroke="#00f7ae" stroke-width="1.1" stroke-linecap="round" opacity=".85"/>
<path d="M79.5 144.7L103.3 138.0" stroke="#00f7ab" stroke-width="1.1" stroke-linecap="round" opacity=".85"/>
<path d="M103.3 138.0L128.8 135.1" stroke="#00f7a8" stroke-width="1.1" stroke-linecap="round" opacity=".85"/>
<path d="M128.8 135.1L155.4 135.5" stroke="#00f7a5" stroke-width="1.1" stroke-linecap="round" opacity=".85"/>
<path d="M155.4 135.5L182.7 138.2" stroke="#00f7a2" stroke-width="1.1" stroke-linecap="round" opacity=".85"/>
<path d="M182.7 138.2L210.5 142.4" stroke="#00f79f" stroke-width="1.1" stroke-linecap="round" opacity=".85"/>
<path d="M210.5 142.4L238.4 147.7" stroke="#00f79c" stroke-width="1.1" stroke-linecap="round" opacity=".85"/>
<path d="M238.4 147.7L265.6 153.6" stroke="#00f798" stroke-width="1.1" stroke-linecap="round" opacity=".85"/>
<path d="M265.6 153.6L292.0 159.8" stroke="#00f794" stroke-width="1.1" stroke-linecap="round" opacity=".85"/>
<path d="M292.0 159.8L317.8 166.3" stroke="#00f790" stroke-width="1.1" stroke-linecap="round" opacity=".85"/>
<path d="M317.8 166.3L343.2 173.1" stroke="#00f78c" stroke-width="1.1" stroke-linecap="round" opacity=".85"/>
<path d="M343.2 173.1L368.2 180.3" stroke="#00f787" stroke-width="1.1" stroke-linecap="round" opacity=".85"/>
<path d="M368.2 180.3L393.1 187.7" stroke="#00f781" stroke-width="1.1" stroke-linecap="round" opacity=".85"/>
<path d="M393.1 187.7L417.8 195.5" stroke="#00f77a" stroke-width="1.1" stroke-linecap="round" opacity=".85"/>
<path d="M417.8 195.5L442.3 203.5" stroke="#00f772" stroke-width="1.1" stroke-linecap="round" opacity=".85"/>
<path d="M442.3 203.5L466.8 211.7" stroke="#00f767" stroke-width="1.1" stroke-linecap="round" opacity=".85"/>
<path d="M466.8 211.7L491.2 220.1" stroke="#00f759" stroke-width="1.1" stroke-linecap="round" opacity=".85"/>
<path d="M491.2 220.1L515.6 228.7" stroke="#00f744" stroke-width="1.1" stroke-linecap="round" opacity=".85"/>
<path d="M515.6 228.7L539.9 237.5" stroke="#00f70d" stroke-width="1.1" stroke-linecap="round" opacity=".85"/>
<path d="M539.9 237.5L564.2 246.4" stroke="#47f700" stroke-width="1.1" stroke-linecap="round" opacity=".85"/>
<path d="M564.2 246.4L588.6 255.4" stroke="#63f700" stroke-width="1.1" stroke-linecap="round" opacity=".85"/>
<path d="M588.6 255.4L612.9 264.5" stroke="#7af700" stroke-width="1.1" stroke-linecap="round" opacity=".85"/>
<path d="M612.9 264.5L637.2 273.6" stroke="#8ef700" stroke-width="1.1" stroke-linecap="round" opacity=".85"/>
<path d="M637.2 273.6L661.5 282.8" stroke="#a1f700" stroke-width="1.1" stroke-linecap="round" opacity=".85"/>
<path d="M661.5 282.8L685.8 292.0" stroke="#b3f701" stroke-width="1.1" stroke-linecap="round" opacity=".85"/>
<path d="M685.8 292.0L709.9 301.3" stroke="#c5f701" stroke-width="1.1" stroke-linecap="round" opacity=".85"/>
<path d="M709.9 301.3L734.0 310.5" stroke="#d7f701" stroke-width="1.1" stroke-linecap="round" opacity=".85"/>
<path d="M734.0 310.5L758.0 319.7" stroke="#e9f702" stroke-width="1.1" stroke-linecap="round" opacity=".85"/>
<path d="M758.0 319.7L781.8 328.9" stroke="#f7f302" stroke-width="1.1" stroke-linecap="round" opacity=".85"/>
<path d="M781.8 328.9L805.3 338.0" stroke="#f7e203" stroke-width="1.1" stroke-linecap="round" opacity=".85"/>
<path d="M805.3 338.0L828.7 347.1" stroke="#f7d203" stroke-width="1.1" stroke-linecap="round" opacity=".85"/>
<path d="M828.7 347.1L851.7 356.0" stroke="#f7c403" stroke-width="1.1" stroke-linecap="round" opacity=".85"/>
<path d="M851.7 356.0L874.4 364.8" stroke="#f7b603" stroke-width="1.1" stroke-linecap="round" opacity=".85"/>
<path d="M874.4 364.8L896.7 373.4" stroke="#f7aa03" stroke-width="1.1" stroke-linecap="round" opacity=".85"/>
<path d="M896.7 373.4L918.6 381.9" stroke="#f79e02" stroke-width="1.1" stroke-linecap="round" opacity=".85"/>
<path d="M918.6 381.9L940.0 390.2" stroke="#f79302" stroke-width="1.1" stroke-linecap="round" opacity=".85"/>
<path d="M940.0 390.2L960.8 398.2" stroke="#f78802" stroke-width="1.1" stroke-linecap="round" opacity=".85"/>
<path d="M960.8 398.2L981.0 406.0" stroke="#f77e01" stroke-width="1.1" stroke-linecap="round" opacity=".85"/>
<path d="M981.0 406.0L1000.6 413.6" stroke="#f77401" stroke-width="1.1" stroke-linecap="round" opacity=".85"/>
<path d="M1000.6 413.6L1019.3 420.9" stroke="#f76a01" stroke-width="1.1" stroke-linecap="round" opacity=".85"/>
<path d="M1019.3 420.9L1037.0 427.8" stroke="#f76000" stroke-width="1.1" stroke-linecap="round" opacity=".85"/>
<path d="M1037.0 427.8L1053.6 434.2" stroke="#f75700" stroke-width="1.1" stroke-linecap="round" opacity=".85"/>
<path d="M1053.6 434.2L1069.3 440.3" stroke="#f74d00" stroke-width="1.1" stroke-linecap="round" opacity=".85"/>
<path d="M1069.3 440.3L1084.4 446.1" stroke="#f74200" stroke-width="1.1" stroke-linecap="round" opacity=".85"/>
<path d="M1084.4 446.1L1098.7 451.6" stroke="#f73700" stroke-width="1.1" stroke-linecap="round" opacity=".85"/>
<path d="M1098.7 451.6L1111.9 456.7" stroke="#f72a00" stroke-width="1.1" stroke-linecap="round" opacity=".85"/>
<path d="M1111.9 456.7L1124.0 461.4" stroke="#f71800" stroke-width="1.1" stroke-linecap="round" opacity=".85"/>
<path d="M1124.0 461.4L1135.2 465.7" stroke="#f7001a" stroke-width="1.1" stroke-linecap="round" opacity=".85"/>
<path d="M1135.2 465.7L1145.6 469.7" stroke="#f70028" stroke-width="1.1" stroke-linecap="round" opacity=".85"/>
<path d="M1145.6 469.7L1155.1 473.4" stroke="#f70031" stroke-width="1.1" stroke-linecap="round" opacity=".85"/>
<path d="M1155.1 473.4L1163.9 476.8" stroke="#f70037" stroke-width="1.1" stroke-linecap="round" opacity=".85"/>
<path d="M1163.9 476.8L1171.8 479.9" stroke="#f7003c" stroke-width="1.1" stroke-linecap="round" opacity=".85"/>
<path d="M1171.8 479.9L1179.0 482.7" stroke="#f70040" stroke-width="1.1" stroke-linecap="round" opacity=".85"/>
<path d="M1179.0 482.7L1185.7 485.2" stroke="#f70043" stroke-width="1.1" stroke-linecap="round" opacity=".85"/>
<path d="M1185.7 485.2L1191.7 487.6" stroke="#f70045" stroke-width="1.1" stroke-linecap="round" opacity=".85"/>
<path d="M1191.7 487.6L1197.2 489.7" stroke="#f70048" stroke-width="1.1" stroke-linecap="round" opacity=".85"/>
<path d="M1197.2 489.7L1202.3 491.7" stroke="#f7004a" stroke-width="1.1" stroke-linecap="round" opacity=".85"/>
<path d="M1202.3 491.7L1207.0 493.5" stroke="#f7004b" stroke-width="1.1" stroke-linecap="round" opacity=".85"/>
<path d="M1207.0 493.5L1211.4 495.2" stroke="#f7004d" stroke-width="1.1" stroke-linecap="round" opacity=".85"/>
<path d="M1211.4 495.2L1215.5 496.8" stroke="#f7004e" stroke-width="1.1" stroke-linecap="round" opacity=".85"/>
<path d="M1215.5 496.8L1219.2 498.2" stroke="#f70050" stroke-width="1.1" stroke-linecap="round" opacity=".85"/>
<path d="M1219.2 498.2L1222.7 499.6" stroke="#f70051" stroke-width="1.1" stroke-linecap="round" opacity=".85"/>
<path d="M1222.7 499.6L1225.9 500.8" stroke="#f70052" stroke-width="1.1" stroke-linecap="round" opacity=".85"/>
<path d="M1225.9 500.8L1228.8 502.0" stroke="#f70052" stroke-width="1.1" stroke-linecap="round" opacity=".85"/>
<path d="M1228.8 502.0L1231.5 503.0" stroke="#f70053" stroke-width="1.1" stroke-linecap="round" opacity=".85"/>
<path d="M1231.5 503.0L1233.8 503.9" stroke="#f70054" stroke-width="1.1" stroke-linecap="round" opacity=".85"/>
<path d="M1233.8 503.9L1235.9 504.7" stroke="#f70055" stroke-width="1.1" stroke-linecap="round" opacity=".85"/>
<path d="M1235.9 504.7L1237.7 505.4" stroke="#f70055" stroke-width="1.1" stroke-linecap="round" opacity=".85"/>
<path d="M1237.7 505.4L1239.4 506.1" stroke="#f70055" stroke-width="1.1" stroke-linecap="round" opacity=".85"/>
<path d="M1239.4 506.1L1240.9 506.6" stroke="#f70056" stroke-width="1.1" stroke-linecap="round" opacity=".85"/>
<path d="M1240.9 506.6L1242.3 507.2" stroke="#f70056" stroke-width="1.1" stroke-linecap="round" opacity=".85"/>
<path d="M1242.3 507.2L1243.5 507.6" stroke="#f70057" stroke-width="1.1" stroke-linecap="round" opacity=".85"/>
<path d="M1243.5 507.6L1244.5 508.0" stroke="#f70057" stroke-width="1.1" stroke-linecap="round" opacity=".85"/>
<path d="M1244.5 508.0L1245.4 508.4" stroke="#f70057" stroke-width="1.1" stroke-linecap="round" opacity=".85"/>
<path d="M1245.4 508.4L1246.1 508.6" stroke="#f70057" stroke-width="1.1" stroke-linecap="round" opacity=".85"/>
<path d="M1246.1 508.6L1246.7 508.9" stroke="#f70057" stroke-width="1.1" stroke-linecap="round" opacity=".85"/>
<path d="M1246.7 508.9L1247.4 509.1" stroke="#f70058" stroke-width="1.1" stroke-linecap="round" opacity=".85"/>
<path d="M1247.4 509.1L1247.9 509.4" stroke="#f70058" stroke-width="1.1" stroke-linecap="round" opacity=".85"/>
<path d="M1247.9 509.4L1248.5 509.6" stroke="#f70058" stroke-width="1.1" stroke-linecap="round" opacity=".85"/>
<path d="M1248.5 509.6L1248.9 509.8" stroke="#f70058" stroke-width="1.1" stroke-linecap="round" opacity=".85"/>
<path d="M1248.9 509.8L1249.4 509.9" stroke="#f70058" stroke-width="1.1" stroke-linecap="round" opacity=".85"/>
<path d="M1249.4 509.9L1249.9 510.1" stroke="#f70058" stroke-width="1.1" stroke-linecap="round" opacity=".85"/>
<path d="M1249.9 510.1L1250.4 510.3" stroke="#f70058" stroke-width="1.1" stroke-linecap="round" opacity=".85"/>
<path d="M1250.4 510.3L1250.8 510.5" stroke="#f70058" stroke-width="1.1" stroke-linecap="round" opacity=".85"/>
<path d="M1250.8 510.5L1251.2 510.7" stroke="#f70059" stroke-width="1.1" stroke-linecap="round" opacity=".85"/>
<path d="M1251.2 510.7L1251.6 510.8" stroke="#f70059" stroke-width="1.1" stroke-linecap="round" opacity=".85"/>
<path d="M1251.6 510.8L1251.8 510.9" stroke="#f70059" stroke-width="1.1" stroke-linecap="round" opacity=".85"/>
<path d="M1251.8 510.9L1252.0 511.0" stroke="#f70059" stroke-width="1.1" stroke-linecap="round" opacity=".85"/>
<path d="M1252.0 511.0L1252.2 511.0" stroke="#f70059" stroke-width="1.1" stroke-linecap="round" opacity=".85"/>
<path d="M1252.2 511.0L1252.3 511.1" stroke="#f70059" stroke-width="1.1" stroke-linecap="round" opacity=".85"/>
<path d="M1252.3 511.1L1252.4 511.1" stroke="#f70059" stroke-width="1.1" stroke-linecap="round" opacity=".85"/>
<path d="M1252.4 511.1L1252.5 511.1" stroke="#f70059" stroke-width="1.1" stroke-linecap="round" opacity=".85"/>
<path d="M1252.5 511.1L1252.5 511.2" stroke="#f70059" stroke-width="1.1" stroke-linecap="round" opacity=".85"/>
<path d="M1252.5 511.2L1214.4 518.0" stroke="#f7005c" stroke-width="1.1" stroke-linecap="round" opacity=".85"/>
<path d="M1214.4 518.0L1176.2 524.9" stroke="#f70062" stroke-width="1.1" stroke-linecap="round" opacity=".85"/>
<path d="M1176.2 524.9L1138.1 531.8" stroke="#f70069" stroke-width="1.1" stroke-linecap="round" opacity=".85"/>
<path d="M1138.1 531.8L1099.9 538.7" stroke="#f7006f" stroke-width="1.1" stroke-linecap="round" opacity=".85"/>
<path d="M1099.9 538.7L1061.7 545.6" stroke="#f70075" stroke-width="1.1" stroke-linecap="round" opacity=".85"/>
<path d="M1061.7 545.6L1023.6 552.5" stroke="#f7007c" stroke-width="1.1" stroke-linecap="round" opacity=".85"/>
<path d="M1023.6 552.5L985.4 559.4" stroke="#f70082" stroke-width="1.1" stroke-linecap="round" opacity=".85"/>
<path d="M985.4 559.4L947.3 566.3" stroke="#f70189" stroke-width="1.1" stroke-linecap="round" opacity=".85"/>
<path d="M947.3 566.3L909.1 573.1" stroke="#f70190" stroke-width="1.1" stroke-linecap="round" opacity=".85"/>
<path d="M909.1 573.1L871.0 580.0" stroke="#f70298" stroke-width="1.1" stroke-linecap="round" opacity=".85"/>
<path d="M871.0 580.0L832.8 586.9" stroke="#f7039f" stroke-width="1.1" stroke-linecap="round" opacity=".85"/>
<path d="M832.8 586.9L794.6 593.8" stroke="#f704a8" stroke-width="1.1" stroke-linecap="round" opacity=".85"/>
<path d="M794.6 593.8L756.5 600.7" stroke="#f705b0" stroke-width="1.1" stroke-linecap="round" opacity=".85"/>
<path d="M756.5 600.7L718.3 607.6" stroke="#f705b9" stroke-width="1.1" stroke-linecap="round" opacity=".85"/>
<path d="M718.3 607.6L680.2 614.5" stroke="#f706c3" stroke-width="1.1" stroke-linecap="round" opacity=".85"/>
<path d="M680.2 614.5L642.0 621.4" stroke="#f705ce" stroke-width="1.1" stroke-linecap="round" opacity=".85"/>
<path d="M642.0 621.4L603.9 628.3" stroke="#f705d9" stroke-width="1.1" stroke-linecap="round" opacity=".85"/>
<path d="M603.9 628.3L565.7 635.1" stroke="#f704e6" stroke-width="1.1" stroke-linecap="round" opacity=".85"/>
<path d="M565.7 635.1L527.6 642.0" stroke="#f703f4" stroke-width="1.1" stroke-linecap="round" opacity=".85"/>
<path d="M527.6 642.0L489.4 648.9" stroke="#eb02f7" stroke-width="1.1" stroke-linecap="round" opacity=".85"/>
<path d="M489.4 648.9L451.2 655.8" stroke="#db01f7" stroke-width="1.1" stroke-linecap="round" opacity=".85"/>
<path d="M451.2 655.8L413.1 662.7" stroke="#cb01f7" stroke-width="1.1" stroke-linecap="round" opacity=".85"/>
<path d="M413.1 662.7L374.9 669.6" stroke="#bb00f7" stroke-width="1.1" stroke-linecap="round" opacity=".85"/>
<path d="M374.9 669.6L336.8 676.5" stroke="#aa00f7" stroke-width="1.1" stroke-linecap="round" opacity=".85"/>
<path d="M336.8 676.5L298.6 683.4" stroke="#9800f7" stroke-width="1.1" stroke-linecap="round" opacity=".85"/>
<path d="M528.6 291.3L452.7 391.2" stroke="#006a00" stroke-width="2.7" fill="none"/>
<path d="M452.7 391.2L311.6 576.8" stroke="#00707c" stroke-width="2.7" fill="none"/>
<path d="M311.6 576.8L264.0 639.5" stroke="#00008c" stroke-width="2.7" fill="none"/>
<path d="M528.6 291.3L588.6 309.9" stroke="#006a00" stroke-width="2.7" fill="none"/>
<path d="M588.6 309.9L716.1 349.4" stroke="#705800" stroke-width="2.7" fill="none"/>
<path d="M716.1 349.4L908.1 408.9" stroke="#5c6c00" stroke-width="2.7" fill="none"/>
<path d="M908.1 408.9L1073.8 460.3" stroke="#8c0000" stroke-width="2.7" fill="none"/>
<path d="M264.0 639.5L426.0 603.7" stroke="#1c008c" stroke-width="2.7" fill="none"/>
<path d="M426.0 603.7L766.1 528.4" stroke="#70008c" stroke-width="2.7" fill="none"/>
<path d="M766.1 528.4L1073.8 460.3" stroke="#8c0000" stroke-width="2.7" fill="none"/>
<path d="M1109.6 456.8L1097.8 452.6L1086.2 448.6L1074.6 444.8L1063.2 441.2L1051.9 437.7L1040.8 434.5L1029.7 431.4L1018.8 428.6L1008.0 426.0L997.4 423.6L986.9 421.3L976.5 419.3" stroke="#36606e" stroke-width="2" fill="none"/>
<path d="M986.9 421.3L976.5 419.3L966.3 417.4L956.1 415.8L946.2 414.3L936.4 413.0L926.7 411.8L917.2 410.8L907.8 410.0L898.6 409.3L889.5 408.8L880.6 408.4L871.9 408.1L863.4 407.9L855.0 407.9L846.7 407.9L838.6 408.0L830.7 408.2L823.0 408.5L815.4 408.9L808.0 409.3L800.8 409.8L793.7 410.3L786.8 410.9L780.1 411.4L773.6 412.0L767.2 412.7L761.0 413.3L754.9 414.0L749.0 414.8L737.2 416.6L725.9 418.5L715.2 420.4L704.9 422.3L695.2 424.3" stroke="#000" stroke-width="1.9" fill="none"/>
<path d="M695.2 424.3L685.9 426.3L677.0 428.3L668.6 430.3L660.5 432.2L652.8 434.1L645.5 436.0L638.5 437.8L631.8 439.5L625.4 441.3L619.3 443.0L613.5 444.6L607.9 446.3L602.5 447.8L597.4 449.4L592.5 450.9L587.8 452.4L583.4 453.8L579.0 455.3L574.9 456.6L570.9 458.0L567.1 459.3L563.4 460.6L559.8 461.9L556.3 463.2L553.0 464.4L549.9 465.6L546.8 466.7L543.8 467.9L541.0 469.0L538.2 470.0L535.6 471.1L533.0 472.1L530.6 473.1L528.2 474.0L525.9 474.9L523.6 475.9L521.5 476.7L519.4 477.6L517.4 478.4L515.4 479.3L513.5 480.1L511.7 480.8L509.9 481.6L508.2 482.3L506.5 483.0L504.9 483.8L503.3 484.4L501.8 485.1L500.3 485.8L498.9 486.4L497.5 487.0L496.1 487.6L494.8 488.2L493.5 488.8L492.2 489.4L491.0 489.9L489.8 490.5L488.7 491.0L487.5 491.6L486.4 492.1L485.3 492.7L484.2 493.2L483.1 493.7L482.1 494.2L481.1 494.7L476.5 497.0L469.9 500.4L464.4 503.2L459.8 505.7L455.8 507.8L452.3 509.6L449.3 511.2L446.7 512.7L444.4 514.0L442.3 515.1L440.4 516.2L438.8 517.1L437.3 517.9L435.9 518.7L434.6 519.4L433.5 520.1L432.4 520.7L431.5 521.2L430.6 521.8L429.7 522.2L429.0 522.7L428.2 523.1L427.6 523.5L426.9 523.9L426.3 524.2L425.8 524.5L425.3 524.8L424.8 525.1L424.3 525.4L423.9 525.6L423.5 525.9L423.1 526.1" stroke="#000" stroke-width="2.8" fill="none"/>
<path d="M558 284L255.5 641.4L1092 460.3Z" stroke="#fff" stroke-width="3" fill="none" stroke-linejoin="round"/>
<g stroke="#383838" stroke-width=".85" stroke-dasharray="3.6 2.6" fill="none"><path d="M558 284L463 569"/><path d="M676.8 351.3L250.6 644.5"/><path d="M445.8 440.4L1092 460.3"/></g>
<g stroke="#d2cacd" stroke-width="1" stroke-dasharray="3 3" shape-rendering="crispEdges"><path d="M534.5 92V687"/><path d="M3 469.5H1364"/></g>
<defs><linearGradient id="pl2" gradientUnits="userSpaceOnUse" x1="292" y1="0" x2="1364" y2="0"><stop offset="0" stop-color="#9400dc"/><stop offset=".25" stop-color="#d000d4"/><stop offset=".6" stop-color="#f400b8"/><stop offset="1" stop-color="#ff00a0"/></linearGradient></defs><path d="M292 683.5H1364" stroke="url(#pl2)" stroke-width="1.3"/>
<circle cx="488.8" cy="490.9" r="2.6" fill="#fff" stroke="#000" stroke-width="1"/>
<circle cx="571" cy="457.9" r="2.6" fill="#fff" stroke="#000" stroke-width="1"/>
<circle cx="653" cy="434" r="2.6" fill="#fff" stroke="#000" stroke-width="1"/>
<circle cx="749" cy="415" r="2.6" fill="#fff" stroke="#000" stroke-width="1"/>
<circle cx="787" cy="411" r="2.6" fill="#fff" stroke="#000" stroke-width="1"/>
<circle cx="534" cy="468.7" r="2.9" fill="#00e000" stroke="#064006" stroke-width="1"/>
<circle cx="528.9" cy="477" r="2.9" fill="#00e000" stroke="#064006" stroke-width="1"/>
<circle cx="594.9" cy="453.9" r="2.9" fill="#00e000" stroke="#064006" stroke-width="1"/>
<circle cx="764" cy="417" r="2.9" fill="#00e000" stroke="#064006" stroke-width="1"/>
<g font-size="15.3px" fill="#10101c">
<text x="486.3" y="485" text-anchor="end">9300</text>
<text x="524.3" y="469" text-anchor="end">D65</text>
<text x="568.5" y="452.2" text-anchor="end">5500</text>
<text x="650.5" y="428.3" text-anchor="end">4000</text>
<text x="750.6" y="409" text-anchor="end">3000</text>
<text x="785.6" y="405.3">2700</text>
<text x="761.5" y="435.6">A</text>
<text x="599" y="472.4">B</text>
<text x="533.3" y="495.6">C</text>
</g>
<g font-size="16px" fill="#fff">
<text x="4.1" y="617.1">0.1</text>
<text x="4.1" y="550.957">0.2</text>
<text x="4.1" y="484.814">0.3</text>
<text x="4.1" y="418.671">0.4</text>
<text x="4.1" y="352.528">0.5</text>
<text x="4.1" y="286.385">0.6</text>
<text x="4.1" y="220.242">0.7</text>
<text x="4.1" y="154.099">0.8</text>
<text x="174.7" y="683.6">0.1</text>
<text x="344.87" y="683.6">0.2</text>
<text x="515.04" y="683.6">0.3</text>
<text x="685.21" y="683.6">0.4</text>
<text x="855.38" y="683.6">0.5</text>
<text x="1025.55" y="683.6">0.6</text>
<text x="1195.72" y="683.6">0.7</text>
</g>
<text x="1354.3" y="625.6" text-anchor="end" font-size="16px" font-weight="bold" fill="#4a4a4a">hcfr.sourceforge.net</text>
<circle cx="209.9" cy="551.9" r="4.9" fill="#000" opacity=".45" filter="url(#sh)"/>
<circle cx="208.6" cy="550.4" r="4.9" fill="#c9cff4" stroke="#15151f" stroke-width="1.1"/>
<circle cx="208.6" cy="550.4" r="4.4" fill="url(#gl)"/>
<circle cx="145.6" cy="618.1" r="4.9" fill="#000" opacity=".45" filter="url(#sh)"/>
<circle cx="144.3" cy="616.6" r="4.9" fill="#c9cff4" stroke="#15151f" stroke-width="1.1"/>
<circle cx="144.3" cy="616.6" r="4.4" fill="url(#gl)"/>
<circle cx="144.5" cy="617.2" r="4.9" fill="#000" opacity=".45" filter="url(#sh)"/>
<circle cx="143.2" cy="615.7" r="4.9" fill="#c9cff4" stroke="#15151f" stroke-width="1.1"/>
<circle cx="143.2" cy="615.7" r="4.4" fill="url(#gl)"/>
<circle cx="258.9" cy="680.3" r="4.9" fill="#000" opacity=".45" filter="url(#sh)"/>
<circle cx="257.6" cy="678.8" r="4.9" fill="#c9cff4" stroke="#15151f" stroke-width="1.1"/>
<circle cx="257.6" cy="678.8" r="4.4" fill="url(#gl)"/>
<circle cx="323.1" cy="666.3" r="4.9" fill="#000" opacity=".45" filter="url(#sh)"/>
<circle cx="321.8" cy="664.8" r="4.9" fill="#c9cff4" stroke="#15151f" stroke-width="1.1"/>
<circle cx="321.8" cy="664.8" r="4.4" fill="url(#gl)"/>
<circle cx="358.1" cy="543" r="4.9" fill="#000" opacity=".45" filter="url(#sh)"/>
<circle cx="356.8" cy="541.5" r="4.9" fill="#c9cff4" stroke="#15151f" stroke-width="1.1"/>
<circle cx="356.8" cy="541.5" r="4.4" fill="url(#gl)"/>
<circle cx="517.3" cy="553" r="4.9" fill="#000" opacity=".45" filter="url(#sh)"/>
<circle cx="516" cy="551.5" r="4.9" fill="#c9cff4" stroke="#15151f" stroke-width="1.1"/>
<circle cx="516" cy="551.5" r="4.4" fill="url(#gl)"/>
<circle cx="451" cy="579.2" r="4.9" fill="#000" opacity=".45" filter="url(#sh)"/>
<circle cx="449.7" cy="577.7" r="4.9" fill="#c9cff4" stroke="#15151f" stroke-width="1.1"/>
<circle cx="449.7" cy="577.7" r="4.4" fill="url(#gl)"/>
<circle cx="505.9" cy="588" r="4.9" fill="#000" opacity=".45" filter="url(#sh)"/>
<circle cx="504.6" cy="586.5" r="4.9" fill="#c9cff4" stroke="#15151f" stroke-width="1.1"/>
<circle cx="504.6" cy="586.5" r="4.4" fill="url(#gl)"/>
<circle cx="939.9" cy="554.2" r="4.9" fill="#000" opacity=".45" filter="url(#sh)"/>
<circle cx="938.6" cy="552.7" r="4.9" fill="#c9cff4" stroke="#15151f" stroke-width="1.1"/>
<circle cx="938.6" cy="552.7" r="4.4" fill="url(#gl)"/>
<circle cx="972.8" cy="572.9" r="4.9" fill="#000" opacity=".45" filter="url(#sh)"/>
<circle cx="971.5" cy="571.4" r="4.9" fill="#c9cff4" stroke="#15151f" stroke-width="1.1"/>
<circle cx="971.5" cy="571.4" r="4.4" fill="url(#gl)"/>
<circle cx="770.9" cy="620.3" r="4.9" fill="#000" opacity=".45" filter="url(#sh)"/>
<circle cx="769.6" cy="618.8" r="4.9" fill="#c9cff4" stroke="#15151f" stroke-width="1.1"/>
<circle cx="769.6" cy="618.8" r="4.4" fill="url(#gl)"/>
<circle cx="758" cy="663.2" r="4.9" fill="#000" opacity=".45" filter="url(#sh)"/>
<circle cx="756.7" cy="661.7" r="4.9" fill="#c9cff4" stroke="#15151f" stroke-width="1.1"/>
<circle cx="756.7" cy="661.7" r="4.4" fill="url(#gl)"/>
<circle cx="797" cy="683.1" r="4.9" fill="#000" opacity=".45" filter="url(#sh)"/>
<circle cx="795.7" cy="681.6" r="4.9" fill="#c9cff4" stroke="#15151f" stroke-width="1.1"/>
<circle cx="795.7" cy="681.6" r="4.4" fill="url(#gl)"/>
<circle cx="864.7" cy="677.9" r="4.9" fill="#000" opacity=".45" filter="url(#sh)"/>
<circle cx="863.4" cy="676.4" r="4.9" fill="#c9cff4" stroke="#15151f" stroke-width="1.1"/>
<circle cx="863.4" cy="676.4" r="4.4" fill="url(#gl)"/>
<circle cx="903" cy="376.8" r="4.9" fill="#000" opacity=".45" filter="url(#sh)"/>
<circle cx="901.7" cy="375.3" r="4.9" fill="#c9cff4" stroke="#15151f" stroke-width="1.1"/>
<circle cx="901.7" cy="375.3" r="4.4" fill="url(#gl)"/>
<circle cx="526.3" cy="690.5" r="4.9" fill="#000" opacity=".45" filter="url(#sh)"/>
<circle cx="525" cy="689" r="4.9" fill="#c9cff4" stroke="#15151f" stroke-width="1.1"/>
<circle cx="525" cy="689" r="4.4" fill="url(#gl)"/>
<circle cx="598.6" cy="690.5" r="4.9" fill="#000" opacity=".45" filter="url(#sh)"/>
<circle cx="597.3" cy="689" r="4.9" fill="#c9cff4" stroke="#15151f" stroke-width="1.1"/>
<circle cx="597.3" cy="689" r="4.4" fill="url(#gl)"/>
<circle cx="640.6" cy="690.5" r="4.9" fill="#000" opacity=".45" filter="url(#sh)"/>
<circle cx="639.3" cy="689" r="4.9" fill="#c9cff4" stroke="#15151f" stroke-width="1.1"/>
<circle cx="639.3" cy="689" r="4.4" fill="url(#gl)"/>
<circle cx="1093.1" cy="461.8" r="5.4" fill="#000" opacity=".45" filter="url(#sh)"/>
<circle cx="1091.8" cy="460.3" r="5.4" fill="#c9cff4" stroke="#15151f" stroke-width="1.1"/>
<circle cx="1091.8" cy="460.3" r="4.9" fill="url(#gl)"/>
<circle cx="559" cy="285" r="6" fill="#000" opacity=".45" filter="url(#sh)"/>
<circle cx="557.7" cy="283.5" r="6" fill="#00e600" stroke="#1c5a00" stroke-width="1.1"/>
<circle cx="557.7" cy="283.5" r="5.5" fill="url(#gl)"/>
<circle cx="251.9" cy="646" r="5.9" fill="#000" opacity=".45" filter="url(#sh)"/>
<circle cx="250.6" cy="644.5" r="5.9" fill="#2a2ae6" stroke="#15154a" stroke-width="1.1"/>
<circle cx="250.6" cy="644.5" r="5.4" fill="url(#gl)"/>
<circle cx="447.1" cy="441.9" r="6" fill="#000" opacity=".45" filter="url(#sh)"/>
<circle cx="445.8" cy="440.4" r="6" fill="#70eef4" stroke="#3c5c5c" stroke-width="1.1"/>
<circle cx="445.8" cy="440.4" r="5.5" fill="url(#gl)"/>
<circle cx="678.1" cy="352.8" r="6" fill="#000" opacity=".45" filter="url(#sh)"/>
<circle cx="676.8" cy="351.3" r="6" fill="#f0f07c" stroke="#55551a" stroke-width="1.1"/>
<circle cx="676.8" cy="351.3" r="5.5" fill="url(#gl)"/>
<circle cx="464.3" cy="570.5" r="6" fill="#000" opacity=".45" filter="url(#sh)"/>
<circle cx="463" cy="569" r="6" fill="#f800e8" stroke="#5a005a" stroke-width="1.1"/>
<circle cx="463" cy="569" r="5.5" fill="url(#gl)"/>
<path d="M528.4 285.7L534 291.3L528.4 296.9L522.8 291.3Z" fill="#90ee90" stroke="#1c5a1c" stroke-width="1"/>
<path d="M525.8 291.3H531M528.4 288.7V293.9" stroke="#000" stroke-width="1.1"/>
<path d="M392.9 464.4L398.5 470L392.9 475.6L387.3 470Z" fill="#8ef4f8" stroke="#d8ffff" stroke-width="1"/>
<path d="M390.3 470H395.5M392.9 467.4V472.6" stroke="#0a6a70" stroke-width="1.1"/>
<path d="M264.1 633.9L269.7 639.5L264.1 645.1L258.5 639.5Z" fill="#5a5ae0" stroke="#20205a" stroke-width="1"/>
<path d="M261.5 639.5H266.7M264.1 636.9V642.1" stroke="#fff" stroke-width="1.1"/>
<path d="M1073.6 454.7L1079.2 460.3L1073.6 465.9L1068 460.3Z" fill="#e85858" stroke="#6a1010" stroke-width="1"/>
<path d="M1071 460.3H1076.2M1073.6 457.7V462.9" stroke="#fff" stroke-width="1.1"/>
<path d="M529.9 578.4L535.4 572.9L540.9 578.4" fill="none" stroke="#ffc4f4" stroke-width="1" opacity=".8"/><path d="M529.9 578.4L535.4 583.9L540.9 578.4" fill="none" stroke="#ff70ec" stroke-width="1" opacity=".7"/>
<path d="M717.4 344.7L723 350.3L717.4 355.9L711.8 350.3Z" fill="#f4f428" stroke="#ffff9c" stroke-width="1"/>
<path d="M714.8 350.3H720M717.4 347.7V352.9" stroke="#6a6a10" stroke-width="1.1"/>
</svg>
</div>
<svg style="left:0;top:686px" width="1366" height="42" viewBox="0 686 1366 42" font-family="'Liberation Sans',sans-serif">
<rect x="0" y="687" width="1366" height="3" fill="#f8f8f8"/>
<rect x="0" y="690" width="1366" height="1" fill="#000"/>
<rect x="0" y="691" width="1366" height="18" fill="#f0f0f0"/>
<rect x="0" y="709" width="1366" height="19" fill="#e6ecf6"/>
<path d="M118.6 690.500L127.3 708.500H196.500L205.5 690.500z" fill="#fff"/>
<path d="M54.8 691L63.3 708.200H119.300L123 700.5" fill="none" stroke="#000" stroke-width="1.1"/>
<path d="M118.6 691L127.3 708.200H196.500L205.5 691" fill="none" stroke="#000" stroke-width="1.1"/>
<path d="M205.5 690.500H1366" stroke="#000" stroke-width="1"/>
<rect x="0.5" y="691.5" width="17.3" height="16.4" fill="#f0f0f0" stroke="#696969" stroke-width="1"/>
<path d="M1.5 707.500V692.300H16.8" fill="none" stroke="#fff" stroke-width="1"/>
<rect x="17.8" y="691.5" width="17.3" height="16.4" fill="#f0f0f0" stroke="#696969" stroke-width="1"/>
<path d="M18.8 707.500V692.300H34.1" fill="none" stroke="#fff" stroke-width="1"/>
<rect x="35.2" y="691.5" width="18" height="16.4" fill="#f0f0f0" stroke="#696969" stroke-width="1"/>
<path d="M36.2 707.500V692.300H52.2" fill="none" stroke="#fff" stroke-width="1"/>
<path d="M0 708.300H53.500V691" fill="none" stroke="#000" stroke-width="1.2"/>
<path d="M5.8 696l7 7M12.8 696l-7 7" stroke="#000" stroke-width="1.3"/>
<path d="M28.7 695.500v8l-4.2-4z" fill="#000"/><path d="M42.2 695.500v8l4.2-4z" fill="#000"/>
<text x="70.3" y="702.6" font-size="9.600px" fill="#10102c">Measures</text>
<text x="129.8" y="702.6" font-size="9.600px" font-weight="bold" fill="#000" textLength="64" lengthAdjust="spacingAndGlyphs">CIE Diagram</text>
<path d="M1197.5 692.500h13v9.500l-2.5 3.500h-2.500l-1.5-2.5-1.5 2.500h-2.500l-2.5-3.500z" fill="#6e6e00" stroke="#000" stroke-width="1"/>
<rect x="1199" y="693.8" width="7.5" height="5.6" fill="#e81010"/><path d="M1200.5 697.800v-2.200h3.800v-1l1.8 1.7-1.8 1.700v-1h-2.400v.8z" fill="#fff"/>
<path d="M1205.3 700.500h5v2.500l-1.2 2h-2.600l-1.2-2z" fill="#f0f000" stroke="#000" stroke-width=".5"/>
<rect x="1214.5" y="692.5" width="12" height="12" fill="#f6f6f6" stroke="#bcbcbc" stroke-width="1"/>
<defs><linearGradient id="ck" x1="0" y1="0" x2="1" y2="1"><stop offset="0" stop-color="#cfd4da"/><stop offset="1" stop-color="#f8f8f8"/></linearGradient></defs>
<rect x="1292.5" y="692.5" width="12" height="12" fill="#f4f4f4" stroke="#8e8f8f" stroke-width="1"/><rect x="1295" y="695" width="7" height="7" fill="url(#ck)" stroke="#b4b8bc" stroke-width=".8"/>
<text x="1230" y="702.8" font-size="11.300px" fill="#9a9a9a" textLength="53.5" lengthAdjust="spacingAndGlyphs">Adjust XYZ</text>
<text x="1308.4" y="702.8" font-size="11.300px" fill="#000" textLength="49.8" lengthAdjust="spacingAndGlyphs">Reference</text>
<path d="M1153.5 728V711H1186" fill="none" stroke="#a9c1de" stroke-width="1"/>
<path d="M1189.8 728V711H1263" fill="none" stroke="#a9c1de" stroke-width="1"/>
<path d="M1266.9 728V711H1294" fill="none" stroke="#a9c1de" stroke-width="1"/>
<path d="M1297.5 728V711H1330" fill="none" stroke="#a9c1de" stroke-width="1"/>
<path d="M1333.8 728V711H1366" fill="none" stroke="#a9c1de" stroke-width="1"/>
<text x="2.7" y="723.4" font-size="11.300px" fill="#0a0a14" textLength="31.2" lengthAdjust="spacingAndGlyphs">Ready</text>
<text x="1335.6" y="723.5" font-size="11.300px" fill="#10102c" textLength="26.5" lengthAdjust="spacingAndGlyphs">SCRL</text>
</svg>
</body></html>
